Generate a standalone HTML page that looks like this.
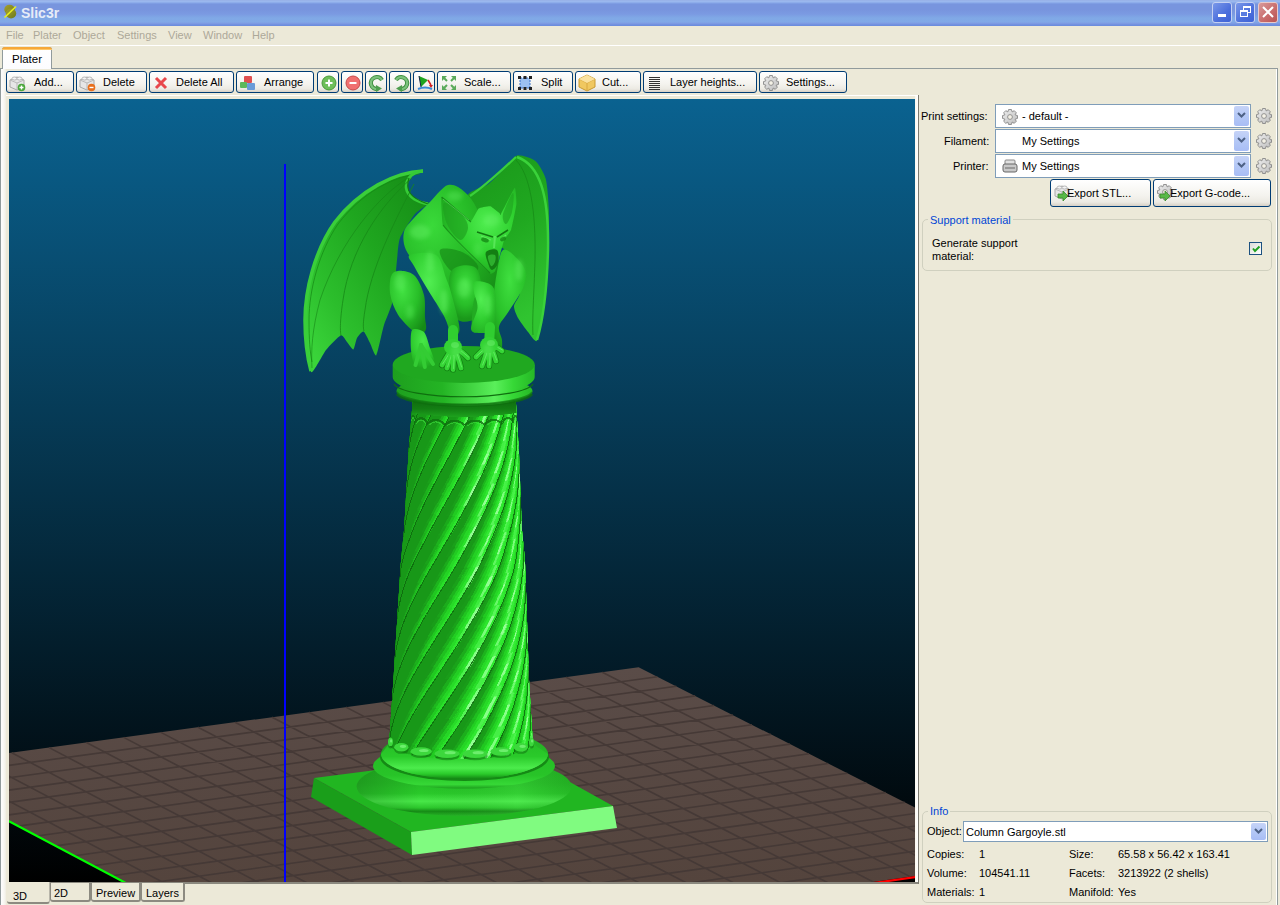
<!DOCTYPE html>
<html><head><meta charset="utf-8">
<style>
*{box-sizing:border-box;margin:0;padding:0}
html,body{width:1280px;height:905px;overflow:hidden;background:#ECE9D8;font-family:"Liberation Sans",sans-serif;font-size:11px;color:#000}
.a{position:absolute}
#title{left:0;top:0;width:1280px;height:26px;background:linear-gradient(#97AEE4 0px,#9AB8EE 1px,#9AB8EE 2px,#82A2E6 3px,#7895DE 4.5px,#7895DE 10px,#7B9AE2 14px,#80A9E6 18px,#81A8E7 22px,#7D9AE3 23.5px,#6E8EDE 25px,#6A8CDD 26px);}
#title .t{left:21px;top:5px;font-size:14px;font-weight:bold;color:#E6ECF8;letter-spacing:0px}
.wb{top:2px;width:20px;height:21px;border:1px solid #C5D1F2;border-radius:3px;background:linear-gradient(135deg,#7A98E9,#4C6FDC 60%,#3E62D6)}
#menu{left:0;top:26px;width:1280px;height:19px;}
#menu span{position:absolute;top:3px;color:#ACA899}
.btn{position:absolute;top:71px;height:22px;border:1px solid #003C74;border-radius:3px;background:linear-gradient(#FFFFFF,#F4F3EE 60%,#ECEAE3 85%,#D6D0C5);}
.btn .l{position:absolute;top:4px;white-space:nowrap}
.ico{position:absolute}
.combo{position:absolute;left:995px;width:256px;height:24px;border:1px solid #7F9DB9;background:#fff}
.combo .dd{position:absolute;right:1px;top:1px;width:15px;height:20px;border-radius:2px;background:linear-gradient(#C6D3F7,#B4C8F6 50%,#A8BDF5);}
.combo .tx{position:absolute;top:5px;white-space:nowrap}
.lbl{position:absolute;white-space:nowrap;text-align:right}
</style></head><body>
<!-- title bar -->
<div id="title" class="a">
  <svg class="a" style="left:3px;top:3px" width="14" height="17" viewBox="0 0 14 17"><defs><linearGradient id="lg1" x1="0" y1="0" x2="1" y2="1"><stop offset="0" stop-color="#A8A030"/><stop offset="1" stop-color="#6A7A18"/></linearGradient></defs><ellipse cx="6.5" cy="6.5" rx="5.2" ry="4.8" fill="url(#lg1)"/><ellipse cx="8" cy="10.5" rx="5.2" ry="5" fill="url(#lg1)"/><path d="M1.5 14.5L13 3.5" stroke="#E8F020" stroke-width="1.6"/></svg>
  <div class="a t">Slic3r</div>
  <div class="a wb" style="left:1212px"><div class="a" style="left:5px;top:11px;width:8px;height:3px;background:#fff"></div></div>
  <div class="a wb" style="left:1235px"><div class="a" style="left:7px;top:3px;width:8px;height:7px;border:1px solid #fff;border-top-width:2px"></div><div class="a" style="left:4px;top:7px;width:8px;height:7px;border:1px solid #fff;border-top-width:2px;background:#5A7DE0"></div></div>
  <div class="a wb" style="left:1258px;background:linear-gradient(135deg,#D89A9A,#C86A6A 60%,#B85555);border-color:#E8CACA"><svg class="a" style="left:3px;top:3px" width="12" height="12"><path d="M1 1L11 11M11 1L1 11" stroke="#fff" stroke-width="2"/></svg></div>
</div>
<!-- menu -->
<div id="menu" class="a">
  <span style="left:6px">File</span>
  <span style="left:33px">Plater</span>
  <span style="left:73px">Object</span>
  <span style="left:117px">Settings</span>
  <span style="left:168px">View</span>
  <span style="left:203px">Window</span>
  <span style="left:252px">Help</span>
</div>
<div class="a" style="left:0;top:45px;width:1280px;height:1px;background:#fff"></div>
<!-- notebook -->
<div class="a" style="left:0;top:68px;width:1278px;height:837px;border-left:1px solid #919B9C;border-top:1px solid #919B9C;border-right:1px solid #919B9C;background:#ECE9D8"></div>
<div class="a" style="left:1px;top:69px;width:5px;height:836px;background:linear-gradient(90deg,#FDFDFD,#F8F7F2 60%,#EFEDE2)"></div>
<div class="a" style="left:1276px;top:69px;width:1px;height:836px;background:#FFFFFF"></div>
<div class="a" style="left:2px;top:47px;width:50px;height:22px;background:linear-gradient(#FFFFFF,#FCFCFE);border:1px solid #919B9C;border-bottom:none;border-radius:3px 3px 0 0"></div>
<div class="a" style="left:2px;top:47px;width:50px;height:3px;background:#F6A839;border-radius:3px 3px 0 0;border-bottom:1px solid #FFC868"></div>
<div class="a" style="left:12px;top:53px;font-size:11.5px">Plater</div>

<div id="toolbar">
<div class="btn" style="left:6px;width:68px"><svg class="ico" style="left:1px;top:2px" width="18" height="18" viewBox="0 0 18 18">
<path d="M2 6 L9 3 L16 6 L16 13 L9 16 L2 13Z" fill="#E6E6E6" stroke="#A8A8A8" stroke-width="1"/>
<path d="M2 6 L9 9 L16 6 M9 9 L9 16" fill="none" stroke="#B8B8B8" stroke-width="1"/>
<ellipse cx="6.5" cy="4.5" rx="2.5" ry="1.5" fill="#F4F4F4" stroke="#AAA" stroke-width="0.8"/>
<ellipse cx="11.5" cy="4.5" rx="2.5" ry="1.5" fill="#F4F4F4" stroke="#AAA" stroke-width="0.8"/>
<circle cx="13.5" cy="13.5" r="3.8" fill="#4CA83C"/><path d="M11.5 13.5h4M13.5 11.5v4" stroke="#fff" stroke-width="1.4"/></svg><div class="l" style="left:27px">Add...</div></div>
<div class="btn" style="left:76px;width:71px"><svg class="ico" style="left:1px;top:2px" width="18" height="18" viewBox="0 0 18 18">
<path d="M2 6 L9 3 L16 6 L16 13 L9 16 L2 13Z" fill="#E6E6E6" stroke="#A8A8A8" stroke-width="1"/>
<path d="M2 6 L9 9 L16 6 M9 9 L9 16" fill="none" stroke="#B8B8B8" stroke-width="1"/>
<ellipse cx="6.5" cy="4.5" rx="2.5" ry="1.5" fill="#F4F4F4" stroke="#AAA" stroke-width="0.8"/>
<ellipse cx="11.5" cy="4.5" rx="2.5" ry="1.5" fill="#F4F4F4" stroke="#AAA" stroke-width="0.8"/>
<circle cx="13.5" cy="13.5" r="3.8" fill="#E8701E"/><path d="M11.5 13.5h4" stroke="#fff" stroke-width="1.4"/></svg><div class="l" style="left:26px">Delete</div></div>
<div class="btn" style="left:149px;width:85px"><svg class="ico" style="left:3px;top:3px" width="16" height="16"><path d="M3 3L13 13M13 3L3 13" stroke="#E8484C" stroke-width="3"/></svg><div class="l" style="left:26px">Delete All</div></div>
<div class="btn" style="left:236px;width:78px"><svg class="ico" style="left:2px;top:2px" width="18" height="18"><rect x="5" y="2" width="8" height="7" fill="#E05050" rx="1"/><rect x="1" y="8" width="7" height="6" fill="#5CB85C" rx="1"/><rect x="8" y="9" width="8" height="7" fill="#6A9BD8" rx="1"/></svg><div class="l" style="left:27px">Arrange</div></div>
<div class="btn" style="left:317px;width:22px"><svg class="ico" style="left:2px;top:2px" width="18" height="18"><circle cx="9" cy="9" r="7" fill="#6EBF5A" stroke="#4A9A3A"/><path d="M5.5 9h7M9 5.5v7" stroke="#fff" stroke-width="2"/></svg></div>
<div class="btn" style="left:341px;width:22px"><svg class="ico" style="left:2px;top:2px" width="18" height="18"><circle cx="9" cy="9" r="7" fill="#F07070" stroke="#C84A4A"/><path d="M5.5 9h7" stroke="#fff" stroke-width="2"/></svg></div>
<div class="btn" style="left:365px;width:22px"><svg class="ico" style="left:2px;top:2px" width="18" height="18"><path d="M14 6 A6 6 0 1 0 10 15" fill="none" stroke="#3E8E3E" stroke-width="4.2"/><path d="M14 6 A6 6 0 1 0 10 15" fill="none" stroke="#7CC27C" stroke-width="2.4"/><path d="M8 11 L14 14.5 L8 18Z" fill="#4E9E4E"/></svg></div>
<div class="btn" style="left:389px;width:22px"><svg class="ico" style="left:2px;top:2px" width="18" height="18"><path d="M4 6 A6 6 0 1 1 8 15" fill="none" stroke="#3E8E3E" stroke-width="4.2"/><path d="M4 6 A6 6 0 1 1 8 15" fill="none" stroke="#7CC27C" stroke-width="2.4"/><path d="M10 11 L4 14.5 L10 18Z" fill="#4E9E4E"/></svg></div>
<div class="btn" style="left:413px;width:22px"><svg class="ico" style="left:2px;top:2px" width="18" height="18"><path d="M3 2 L12 6 L5 13Z" fill="#1EA41E"/><path d="M3 2 L5 13" stroke="#124"/><path d="M12 6 L15 11" stroke="#D02020" stroke-width="1.5"/><path d="M13 11h4l-2 3z" fill="#D02020"/><path d="M2 15 Q9 12 16 15" stroke="#3A8AD8" stroke-width="2" fill="none"/></svg></div>
<div class="btn" style="left:437px;width:74px"><svg class="ico" style="left:3px;top:3px" width="16" height="16"><g stroke="#5AAA5A" stroke-width="2" fill="none"><path d="M2 2l4 4M14 2l-4 4M2 14l4-4M14 14l-4-4"/></g><g fill="#5AAA5A"><path d="M1 1h5l-5 5z"/><path d="M15 1h-5l5 5z"/><path d="M1 15h5l-5-5z"/><path d="M15 15h-5l5-5z"/></g></svg><div class="l" style="left:26px">Scale...</div></div>
<div class="btn" style="left:513px;width:60px"><svg class="ico" style="left:3px;top:3px" width="16" height="16"><rect x="3" y="3" width="10" height="10" fill="#9CC0F0" stroke="#3870C8" stroke-dasharray="2 1"/><g fill="#222"><rect x="1" y="1" width="3" height="3"/><rect x="12" y="1" width="3" height="3"/><rect x="1" y="12" width="3" height="3"/><rect x="12" y="12" width="3" height="3"/><rect x="6.5" y="1" width="3" height="3"/><rect x="6.5" y="12" width="3" height="3"/></g></svg><div class="l" style="left:27px">Split</div></div>
<div class="btn" style="left:575px;width:66px"><svg class="ico" style="left:2px;top:2px" width="18" height="18"><path d="M9 1L17 5L17 13L9 17L1 13L1 5Z" fill="#F0C860" stroke="#C89A30"/><path d="M1 5L9 9L17 5M9 9V17" fill="none" stroke="#D8A840"/><path d="M9 1L17 5L9 9L1 5Z" fill="#FAE2A0"/></svg><div class="l" style="left:26px">Cut...</div></div>
<div class="btn" style="left:643px;width:114px"><svg class="ico" style="left:3px;top:3px" width="16" height="16"><g stroke="#333" stroke-width="1"><path d="M2 2.5h11M2 4.5h11M2 6.5h11M2 8.5h11M2 10.5h11M2 12.5h11M2 14.5h11"/></g></svg><div class="l" style="left:26px">Layer heights...</div></div>
<div class="btn" style="left:759px;width:88px"><svg class="ico" style="left:3px;top:3px" width="16" height="16" viewBox="0 0 16 16"><defs><linearGradient id="gg1" x1="0" y1="0" x2="1" y2="1"><stop offset="0" stop-color="#EEEEEE"/><stop offset="1" stop-color="#BDBDBD"/></linearGradient></defs><path d="M13.19 5.90L15.46 6.55L15.46 9.45L13.19 10.10L13.15 10.19L14.30 12.25L12.25 14.30L10.19 13.15L10.10 13.19L9.45 15.46L6.55 15.46L5.90 13.19L5.81 13.15L3.75 14.30L1.70 12.25L2.85 10.19L2.81 10.10L0.54 9.45L0.54 6.55L2.81 5.90L2.85 5.81L1.70 3.75L3.75 1.70L5.81 2.85L5.90 2.81L6.55 0.54L9.45 0.54L10.10 2.81L10.19 2.85L12.25 1.70L14.30 3.75L13.15 5.81Z" fill="url(#gg1)" stroke="#858585" stroke-width="0.9"/><circle cx="8" cy="8" r="2.4" fill="#F4F1E6" stroke="#8A8A8A" stroke-width="0.9"/></svg><div class="l" style="left:26px">Settings...</div></div>
</div>

<!-- canvas -->
<div class="a" id="canvas" style="left:9px;top:99px;width:906px;height:783px;overflow:hidden;background:#000">
<svg class="a" style="left:0;top:0" width="906" height="783" viewBox="9 99 906 783">
<defs><linearGradient id="bedg" gradientUnits="userSpaceOnUse" x1="0" y1="667" x2="0" y2="882"><stop offset="0" stop-color="#5A4C48"/><stop offset="1" stop-color="#54443D"/></linearGradient><linearGradient id="bg" x1="0" y1="0" x2="0" y2="1"><stop offset="0" stop-color="#0A6290"/><stop offset="1" stop-color="#000000"/></linearGradient></defs>
<rect x="9" y="99" width="906" height="783" fill="url(#bg)"/>
<path d="M282.6 965.9L1020.2 861.0L638.6 667.2L-93.5 767.0Z" fill="url(#bedg)"/>
<path d="M313.1 961.5L-63.3 762.9M264.0 956.1L1001.4 851.4M350.9 956.1L-25.7 757.8M244.9 946.0L982.0 841.6M388.6 950.8L11.7 752.7M225.9 935.9L962.7 831.8M426.3 945.4L49.1 747.6M206.8 925.8L943.4 822.0M463.9 940.1L86.4 742.5M187.8 915.8L924.1 812.2M501.5 934.7L123.7 737.4M168.9 905.7L904.8 802.4M538.9 929.4L160.9 732.4M149.9 895.7L885.6 792.6M576.3 924.1L198.0 727.3M131.0 885.7L866.4 782.9M613.7 918.8L235.1 722.2M112.1 875.7L847.3 773.2M651.0 913.5L272.1 717.2M93.3 865.8L828.2 763.5M688.2 908.2L309.0 712.2M74.5 855.8L809.1 753.8M725.3 902.9L345.9 707.1M55.7 845.9L790.0 744.1M762.4 897.6L382.7 702.1M36.9 836.0L771.0 734.4M799.4 892.4L419.5 697.1M18.2 826.1L752.0 724.8M836.4 887.1L456.1 692.1M-0.5 816.2L733.0 715.1M873.3 881.9L492.8 687.1M-19.2 806.3L714.1 705.5M910.1 876.6L529.3 682.1M-37.8 796.5L695.2 695.9M946.9 871.4L565.8 677.1M-56.4 786.7L676.3 686.3M983.6 866.2L602.3 672.2M-75.0 776.8L657.4 676.8" stroke="#453936" stroke-width="1.6" fill="none"/>
<path d="M282.6 965.9L1020.2 861.0" stroke="#FF0000" stroke-width="2.2" transform="translate(0,1.2)"/>
<path d="M282.6 965.9L-93.5 767.0" stroke="#00FF00" stroke-width="2.2"/>
<rect x="284" y="164" width="2" height="720" fill="#0000FF"/>
<path d="M314.0 778.0L411.0 832.0L613.0 806.0L516.0 752.0Z" fill="#21B621"/>
<path d="M314.0 778.0L411.0 832.0L412.0 855.0L311.0 797.0Z" fill="#1A9E1A"/>
<path d="M411.0 832.0L613.0 806.0L617.0 828.0L412.0 855.0Z" fill="#80FB80"/>
<defs><linearGradient id="t2" gradientUnits="userSpaceOnUse" x1="0" y1="757" x2="0" y2="816"><stop offset="0" stop-color="#20B020"/><stop offset="0.45" stop-color="#26BE26"/><stop offset="0.62" stop-color="#2ACA2A"/><stop offset="0.75" stop-color="#48E848"/><stop offset="0.86" stop-color="#2CC82C"/><stop offset="0.92" stop-color="#168C16"/><stop offset="1" stop-color="#26B626"/></linearGradient><linearGradient id="th" x1="0" y1="0" x2="1" y2="0"><stop offset="0" stop-color="#000" stop-opacity="0.18"/><stop offset="0.3" stop-color="#000" stop-opacity="0"/><stop offset="0.75" stop-color="#8f8" stop-opacity="0.1"/><stop offset="1" stop-color="#000" stop-opacity="0.08"/></linearGradient><linearGradient id="t1" gradientUnits="userSpaceOnUse" x1="0" y1="729" x2="0" y2="779"><stop offset="0" stop-color="#22B422"/><stop offset="0.55" stop-color="#2ACA2A"/><stop offset="0.78" stop-color="#4CEC4C"/><stop offset="0.9" stop-color="#2ACA2A"/><stop offset="1" stop-color="#138413"/></linearGradient><linearGradient id="step" gradientUnits="userSpaceOnUse" x1="0" y1="743" x2="0" y2="789"><stop offset="0" stop-color="#22B822"/><stop offset="0.7" stop-color="#28C428"/><stop offset="0.9" stop-color="#36D836"/><stop offset="1" stop-color="#1A961A"/></linearGradient></defs>
<ellipse cx="464" cy="786.6" rx="107.4" ry="29.4" fill="url(#t2)"/>
<ellipse cx="464" cy="786.6" rx="107.4" ry="29.4" fill="url(#th)"/>
<ellipse cx="464" cy="766" rx="91" ry="22.6" fill="url(#step)"/>
<ellipse cx="464.5" cy="757" rx="84.5" ry="24" fill="#158A15"/>
<ellipse cx="464.5" cy="754" rx="83.5" ry="25" fill="url(#t1)"/>
<ellipse cx="464.5" cy="754" rx="83.5" ry="25" fill="url(#th)"/>
<defs><clipPath id="shaftclip"><path d="M413.0 396.0L412.4 405.0L411.7 413.9L410.9 422.9L410.2 431.9L409.5 440.9L408.7 449.8L408.2 458.8L407.7 467.8L407.2 476.8L406.6 485.7L406.1 494.7L405.6 503.7L405.1 512.7L404.6 521.6L404.0 530.6L403.1 539.6L402.2 548.6L401.3 557.5L400.6 566.5L400.0 575.5L399.5 584.5L398.9 593.4L398.3 602.4L397.7 611.4L397.2 620.4L396.6 629.3L396.0 638.3L395.5 647.3L394.9 656.3L394.3 665.2L393.8 674.2L393.2 683.2L392.6 692.2L392.0 701.1L391.4 710.1L390.8 719.1L390.2 728.1L389.6 737.0L389.0 746.0L389.0 746.0L389.4 747.9L390.7 749.9L392.8 751.7L395.7 753.6L399.3 755.3L403.7 756.9L408.7 758.4L414.4 759.7L420.6 760.9L427.3 761.9L434.4 762.7L441.7 763.3L449.4 763.8L457.1 764.0L464.9 764.0L472.6 763.8L480.3 763.3L487.6 762.7L494.7 761.9L501.4 760.9L507.6 759.7L513.3 758.4L518.3 756.9L522.7 755.3L526.3 753.6L529.2 751.7L531.3 749.9L532.6 747.9L533.0 746.0L533.0 746.0L532.5 737.0L531.9 728.1L531.4 719.1L530.8 710.1L530.3 701.1L529.7 692.2L529.2 683.2L528.8 674.2L528.5 665.2L528.2 656.3L527.9 647.3L527.6 638.3L527.3 629.3L527.0 620.4L526.7 611.4L526.4 602.4L526.1 593.4L525.8 584.5L525.5 575.5L525.2 566.5L524.7 557.5L523.8 548.6L522.9 539.6L522.0 530.6L521.6 521.6L521.2 512.7L520.9 503.7L520.6 494.7L520.2 485.7L519.9 476.8L519.6 467.8L519.2 458.8L518.9 449.8L518.3 440.9L517.8 431.9L517.2 422.9L516.6 413.9L516.1 405.0L515.5 396.0Z"/></clipPath></defs>
<path d="M413.0 396.0L412.4 405.0L411.7 413.9L410.9 422.9L410.2 431.9L409.5 440.9L408.7 449.8L408.2 458.8L407.7 467.8L407.2 476.8L406.6 485.7L406.1 494.7L405.6 503.7L405.1 512.7L404.6 521.6L404.0 530.6L403.1 539.6L402.2 548.6L401.3 557.5L400.6 566.5L400.0 575.5L399.5 584.5L398.9 593.4L398.3 602.4L397.7 611.4L397.2 620.4L396.6 629.3L396.0 638.3L395.5 647.3L394.9 656.3L394.3 665.2L393.8 674.2L393.2 683.2L392.6 692.2L392.0 701.1L391.4 710.1L390.8 719.1L390.2 728.1L389.6 737.0L389.0 746.0L389.0 746.0L389.4 747.9L390.7 749.9L392.8 751.7L395.7 753.6L399.3 755.3L403.7 756.9L408.7 758.4L414.4 759.7L420.6 760.9L427.3 761.9L434.4 762.7L441.7 763.3L449.4 763.8L457.1 764.0L464.9 764.0L472.6 763.8L480.3 763.3L487.6 762.7L494.7 761.9L501.4 760.9L507.6 759.7L513.3 758.4L518.3 756.9L522.7 755.3L526.3 753.6L529.2 751.7L531.3 749.9L532.6 747.9L533.0 746.0L533.0 746.0L532.5 737.0L531.9 728.1L531.4 719.1L530.8 710.1L530.3 701.1L529.7 692.2L529.2 683.2L528.8 674.2L528.5 665.2L528.2 656.3L527.9 647.3L527.6 638.3L527.3 629.3L527.0 620.4L526.7 611.4L526.4 602.4L526.1 593.4L525.8 584.5L525.5 575.5L525.2 566.5L524.7 557.5L523.8 548.6L522.9 539.6L522.0 530.6L521.6 521.6L521.2 512.7L520.9 503.7L520.6 494.7L520.2 485.7L519.9 476.8L519.6 467.8L519.2 458.8L518.9 449.8L518.3 440.9L517.8 431.9L517.2 422.9L516.6 413.9L516.1 405.0L515.5 396.0Z" fill="#22AE22"/>
<g clip-path="url(#shaftclip)" shape-rendering="crispEdges">
<path d="M520.1 481.0L520.1 481.0L520.4 491.0L520.4 491.0ZM502.5 624.6L504.9 624.0L500.3 635.2L497.7 635.7ZM521.6 521.0L521.6 521.0L522.0 531.0L522.0 531.0ZM452.7 770.3L456.3 770.4L449.5 780.2L446.0 780.0ZM515.4 671.7L517.2 671.0L513.7 682.4L511.6 683.1ZM526.1 717.9L527.2 717.0L525.4 728.7L523.9 729.6ZM532.6 763.2L532.9 762.2L532.1 774.1L531.5 775.0ZM457.7 435.2L460.2 435.3L455.0 445.3L452.4 445.2ZM457.6 475.9L460.4 476.0L454.9 486.0L452.2 485.8ZM471.4 486.0L474.1 485.9L468.8 496.2L466.0 496.3ZM511.8 386.1L512.7 385.5L510.9 396.7L509.8 397.3ZM472.0 526.5L474.8 526.3L469.3 536.7L466.4 536.8ZM517.3 432.7L517.6 432.0L517.6 443.4L517.1 444.1ZM487.9 576.3L490.7 576.0L485.3 586.8L482.4 587.0Z" fill="#2ce52c" stroke="#2ce52c" stroke-width="0.5"/>
<path d="M520.4 491.0L520.4 491.0L520.8 501.0L520.7 501.7ZM508.8 602.7L510.9 602.1L506.9 613.4L504.6 614.0ZM509.5 622.8L511.6 622.2L507.6 633.5L505.3 634.1ZM445.5 739.5L448.9 739.7L442.2 749.5L438.9 749.2ZM510.2 642.9L512.3 642.3L508.3 653.6L505.9 654.2ZM519.1 629.4L520.5 628.6L517.9 640.2L516.1 640.9ZM462.9 750.2L466.4 750.1L459.6 760.4L456.1 760.3ZM519.8 649.4L521.3 648.7L518.6 660.2L516.9 661.0ZM520.6 669.5L522.1 668.7L519.4 680.2L517.6 681.0ZM521.4 689.5L522.8 688.7L520.4 700.3L518.6 701.1ZM526.8 675.3L527.5 674.4L526.3 686.1L525.3 687.0ZM527.8 695.3L528.5 694.4L527.6 706.1L526.6 707.0ZM529.1 715.2L529.8 714.3L528.9 726.1L527.9 727.0ZM530.4 735.2L531.1 734.3L530.2 746.1L529.2 747.0ZM531.5 721.0L531.5 721.0L532.1 731.4L531.9 732.4ZM532.7 741.0L532.7 741.0L533.0 751.3L532.8 752.3ZM533.0 761.0L533.0 761.0L533.0 771.2L532.9 772.2ZM452.6 404.5L455.1 404.6L450.2 414.4L447.8 414.2ZM452.4 445.2L455.0 445.3L449.8 455.2L447.2 455.0ZM465.6 455.7L468.3 455.7L463.0 465.9L460.3 465.9ZM466.0 496.3L468.8 496.2L463.3 506.4L460.5 506.4ZM509.8 397.3L510.9 396.7L509.0 407.9L507.7 408.5ZM514.1 384.2L514.6 383.5L513.5 394.8L512.8 395.5ZM479.9 505.7L482.5 505.5L477.4 516.1L474.6 516.2ZM514.5 404.1L515.0 403.5L514.5 414.8L513.8 415.5ZM515.5 391.0L515.5 391.0L515.8 401.4L515.7 402.1ZM480.8 546.2L483.5 545.9L478.4 556.7L475.6 556.9ZM517.1 444.1L517.6 443.4L517.1 454.8L516.3 455.5ZM517.7 431.0L517.7 431.0L518.3 441.3L518.2 442.0ZM494.6 554.8L497.1 554.3L492.7 565.4L490.1 565.8ZM518.9 451.0L518.9 451.0L519.3 461.2L519.2 461.9ZM496.5 595.3L499.1 594.9L494.2 605.9L491.4 606.3ZM508.1 582.6L510.2 582.0L506.3 593.3L504.0 593.9ZM445.4 698.8L448.6 699.0L442.1 708.8L438.9 708.5Z" fill="#2ae12a" stroke="#2ae12a" stroke-width="0.5"/>
<path d="M520.7 501.7L520.8 501.0L520.9 512.5L520.6 513.2ZM520.0 577.8L521.2 577.1L519.1 588.6L517.6 589.3ZM438.9 749.2L442.2 749.5L435.5 759.1L432.3 758.7ZM505.9 654.2L508.3 653.6L503.8 664.9L501.2 665.4ZM521.5 617.9L522.7 617.1L520.5 628.6L519.1 629.4ZM526.2 623.7L526.7 622.9L526.0 634.5L525.3 635.4ZM518.6 701.1L520.4 700.3L517.3 711.9L515.3 712.6ZM527.7 663.6L528.1 662.7L527.5 674.4L526.8 675.3ZM528.7 671.0L528.7 671.0L529.1 681.0L529.1 681.0ZM529.2 747.0L530.2 746.1L528.4 757.9L527.0 758.7ZM530.9 711.0L530.9 711.0L531.5 721.0L531.5 721.0ZM447.2 455.0L449.8 455.2L444.5 464.9L442.0 464.7ZM460.5 506.4L463.3 506.4L457.8 516.5L455.0 516.4ZM507.7 408.5L509.0 407.9L506.8 419.1L505.3 419.7ZM515.0 372.9L515.3 372.2L514.6 383.5L514.1 384.2ZM513.8 415.5L514.5 414.8L513.5 426.1L512.5 426.8ZM515.5 381.0L515.5 381.0L515.5 391.0L515.5 391.0ZM475.6 556.9L478.4 556.7L473.0 567.3L470.1 567.4ZM516.3 455.5L517.1 454.8L515.9 466.2L514.8 466.9ZM517.1 421.0L517.1 421.0L517.7 431.0L517.7 431.0ZM508.6 530.9L510.3 530.3L507.2 541.6L505.2 542.1ZM519.2 461.9L519.3 461.2L519.4 472.6L519.0 473.3ZM491.4 606.3L494.2 605.9L488.8 616.7L486.0 617.1ZM511.8 571.4L513.6 570.7L510.2 582.0L508.1 582.6Z" fill="#28dd28" stroke="#28dd28" stroke-width="0.5"/>
<path d="M520.6 513.2L520.9 512.5L520.5 524.0L519.9 524.7ZM432.3 758.7L435.5 759.1L429.1 768.4L426.0 768.0ZM501.2 665.4L503.8 664.9L498.8 676.0L496.1 676.5ZM523.3 606.3L524.2 605.5L522.7 617.1L521.5 617.9ZM515.3 712.6L517.3 711.9L513.7 723.4L511.4 724.1ZM528.0 651.9L528.0 651.0L528.1 662.7L527.7 663.6ZM527.0 758.7L528.4 757.9L525.7 769.6L524.0 770.4ZM530.3 701.0L530.3 701.0L530.9 711.0L530.9 711.0ZM442.9 423.9L445.3 424.2L440.3 433.8L438.0 433.5ZM442.0 464.7L444.5 464.9L439.4 474.5L436.9 474.2ZM454.9 475.8L457.6 475.9L452.2 485.8L449.5 485.7ZM504.2 379.7L505.7 379.1L502.7 390.2L501.0 390.7ZM455.0 516.4L457.8 516.5L452.2 526.4L449.4 526.2ZM505.3 419.7L506.8 419.1L504.2 430.3L502.5 430.9ZM512.5 426.8L513.5 426.1L512.1 437.5L510.8 438.1ZM515.5 371.0L515.5 371.0L515.5 381.0L515.5 381.0ZM470.1 567.4L473.0 567.3L467.3 577.7L464.3 577.7ZM514.8 466.9L515.9 466.2L514.1 477.6L512.9 478.2ZM516.4 411.0L516.4 411.0L517.1 421.0L517.1 421.0ZM519.0 473.3L519.4 472.6L518.9 484.0L518.3 484.8ZM486.0 617.1L488.8 616.7L483.2 627.5L480.2 627.7ZM514.4 559.9L515.9 559.2L513.6 570.7L511.8 571.4Z" fill="#26d826" stroke="#26d826" stroke-width="0.5"/>
<path d="M519.9 524.7L520.5 524.0L519.7 535.4L518.8 536.2ZM480.9 668.2L484.0 667.9L478.0 678.5L474.8 678.7ZM522.5 554.7L523.1 553.9L522.7 565.5L521.8 566.3ZM496.1 676.5L498.8 676.0L493.5 687.0L490.6 687.4ZM497.6 716.9L500.5 716.3L495.2 727.4L492.2 727.9ZM526.4 601.0L526.4 601.0L526.7 611.2L526.6 612.1ZM511.4 724.1L513.7 723.4L509.5 734.8L507.0 735.4ZM527.7 641.0L527.7 641.0L528.0 651.0L528.0 651.9ZM513.5 764.3L515.9 763.6L511.2 774.9L508.6 775.6ZM524.0 770.4L525.7 769.6L522.4 781.2L520.4 782.0ZM436.9 474.2L439.4 474.5L434.4 483.9L432.1 483.5ZM491.0 382.8L493.1 382.4L489.0 393.1L486.8 393.4ZM449.4 526.2L452.2 526.4L446.6 536.1L443.9 535.9ZM502.5 430.9L504.2 430.3L501.2 441.5L499.2 441.9ZM464.3 577.7L467.3 577.7L461.3 587.9L458.2 587.8ZM512.9 478.2L514.1 477.6L511.9 488.9L510.4 489.5ZM514.1 508.3L515.3 507.6L513.1 519.0L511.6 519.6ZM480.2 627.7L483.2 627.5L477.3 638.0L474.2 638.2Z" fill="#24d324" stroke="#24d324" stroke-width="0.5"/>
<path d="M518.8 536.2L519.7 535.4L518.8 547.0L517.6 547.7ZM522.5 543.1L522.8 542.4L523.1 553.9L522.5 554.7ZM490.6 687.4L493.5 687.0L487.8 697.9L484.7 698.2ZM525.2 583.0L525.5 582.2L525.2 593.8L524.6 594.7ZM526.0 591.0L526.0 591.0L526.4 601.0L526.4 601.0ZM507.0 735.4L509.5 734.8L504.8 746.1L502.0 746.7ZM527.4 631.0L527.4 631.0L527.7 641.0L527.7 641.0ZM432.1 483.5L434.4 483.9L429.6 493.2L427.4 492.8ZM486.8 393.4L489.0 393.1L484.6 403.7L482.3 404.0ZM443.9 535.9L446.6 536.1L441.0 545.8L438.4 545.5ZM499.2 441.9L501.2 441.5L497.7 452.5L495.6 453.0ZM458.2 587.8L461.3 587.9L455.1 597.9L452.1 597.8ZM510.4 489.5L511.9 488.9L509.2 500.2L507.4 500.8ZM516.1 496.9L517.1 496.2L515.3 507.6L514.1 508.3ZM474.2 638.2L477.3 638.0L471.2 648.5L468.0 648.6Z" fill="#22cd22" stroke="#22cd22" stroke-width="0.5"/>
<path d="M517.6 547.7L518.8 547.0L517.4 558.5L515.9 559.2ZM484.7 698.2L487.8 697.9L481.9 708.6L478.7 708.9ZM525.3 571.4L525.4 571.0L525.5 582.2L525.2 583.0ZM502.0 746.7L504.8 746.1L499.6 757.3L496.6 757.8ZM427.4 492.8L429.6 493.2L425.0 502.4L423.0 501.9ZM493.7 412.4L495.8 412.0L492.0 422.9L489.8 423.3ZM438.4 545.5L441.0 545.8L435.5 555.4L432.9 555.0ZM505.9 460.6L507.6 460.0L504.5 471.2L502.6 471.7ZM452.1 597.8L455.1 597.9L449.0 607.8L446.0 607.6ZM468.0 648.6L471.2 648.5L464.8 658.8L461.6 658.8ZM519.2 525.5L519.9 524.7L518.8 536.2L517.8 536.9Z" fill="#20c620" stroke="#20c620" stroke-width="0.5"/>
<path d="M515.9 559.2L517.4 558.5L515.3 570.0L513.6 570.7ZM521.6 521.0L521.6 521.0L522.0 531.0L522.0 531.6ZM423.0 501.9L425.0 502.4L420.7 511.5L418.9 510.9ZM477.7 414.4L480.2 414.2L475.5 424.8L473.0 424.9ZM432.9 555.0L435.5 555.4L430.0 564.9L427.5 564.4ZM491.5 463.9L493.8 463.5L489.4 474.3L486.9 474.6ZM446.0 607.6L449.0 607.8L442.9 617.5L439.9 617.2ZM504.0 512.0L506.0 511.4L502.4 522.5L500.2 523.1ZM518.5 474.1L519.0 473.3L518.3 484.8L517.6 485.5ZM461.6 658.8L464.8 658.8L458.4 668.9L455.2 668.8Z" fill="#1fbf1f" stroke="#1fbf1f" stroke-width="0.5"/>
<path d="M513.6 570.7L515.3 570.0L512.1 581.4L510.2 582.0ZM521.2 511.0L521.2 511.0L521.6 521.0L521.6 521.0ZM418.9 510.9L420.7 511.5L416.8 520.4L415.1 519.8ZM473.0 424.9L475.5 424.8L470.6 435.2L468.0 435.3ZM427.5 564.4L430.0 564.9L424.6 574.2L422.3 573.6ZM486.9 474.6L489.4 474.3L484.7 485.0L482.1 485.3ZM439.9 617.2L442.9 617.5L436.8 627.0L434.0 626.6ZM500.2 523.1L502.4 522.5L498.3 533.6L496.0 534.1ZM519.0 462.6L519.2 461.9L519.0 473.3L518.5 474.1ZM455.2 668.8L458.4 668.9L451.9 678.9L448.7 678.7Z" fill="#1db71d" stroke="#1db71d" stroke-width="0.5"/>
<path d="M510.2 582.0L512.1 581.4L508.4 592.7L506.3 593.3ZM448.8 719.4L452.1 719.5L445.5 729.4L442.2 729.1ZM466.9 770.4L470.4 770.3L463.6 780.4L460.0 780.4ZM532.7 741.4L532.7 741.0L532.8 752.3L532.5 753.2ZM454.7 384.6L457.2 384.7L452.4 394.5L450.0 394.3ZM468.0 435.3L470.6 435.2L465.5 445.5L462.9 445.5ZM412.8 560.4L414.6 561.1L410.4 569.9L408.9 569.2ZM482.1 485.3L484.7 485.0L479.7 495.6L477.0 495.8ZM421.0 614.2L423.5 614.7L418.4 623.8L416.1 623.2ZM496.0 534.1L498.3 533.6L493.9 544.6L491.4 545.0ZM433.3 667.2L436.3 667.6L430.2 677.0L427.3 676.5ZM518.9 451.2L518.9 451.0L519.2 461.9L519.0 462.6Z" fill="#1caf1c" stroke="#1caf1c" stroke-width="0.5"/>
<path d="M506.3 593.3L508.4 592.7L504.3 603.9L501.9 604.5ZM459.2 740.0L462.7 740.0L455.9 750.1L452.4 750.0ZM450.0 394.3L452.4 394.5L447.8 404.1L445.4 403.9ZM411.8 528.6L413.2 529.2L410.0 538.0L408.8 537.3ZM462.9 445.5L465.5 445.5L460.3 455.7L457.6 455.6ZM417.5 582.6L419.7 583.2L415.1 592.1L413.1 591.5ZM477.0 495.8L479.7 495.6L474.5 506.1L471.7 506.2ZM428.2 636.0L431.0 636.4L425.3 645.6L422.7 645.1ZM491.4 545.0L493.9 544.6L489.5 555.6L486.8 555.9ZM518.3 441.0L518.3 441.0L518.9 451.0L518.9 451.2ZM442.2 688.4L445.4 688.7L439.0 698.3L435.9 698.0Z" fill="#1ba61b" stroke="#1ba61b" stroke-width="0.5"/>
<path d="M501.9 604.5L504.3 603.9L499.7 615.0L497.1 615.5ZM452.4 750.0L455.9 750.1L449.1 760.1L445.6 759.9ZM533.0 761.0L533.0 761.0L533.0 771.0L533.0 771.0ZM445.4 403.9L447.8 404.1L443.1 413.7L440.8 413.4ZM457.7 414.8L460.2 414.9L455.1 424.9L452.6 424.8ZM408.8 537.3L410.0 538.0L406.8 546.7L405.8 545.9ZM457.6 455.6L460.3 455.7L454.9 465.7L452.3 465.6ZM471.1 465.8L473.8 465.6L468.5 476.0L465.8 476.0ZM413.1 591.5L415.1 592.1L410.8 601.0L409.1 600.3ZM471.7 506.2L474.5 506.1L469.0 516.5L466.2 516.5ZM485.4 515.3L488.0 515.0L483.0 525.7L480.3 526.0ZM422.7 645.1L425.3 645.6L419.8 654.7L417.4 654.2ZM486.8 555.9L489.5 555.6L484.6 566.4L481.8 566.7ZM500.2 564.1L502.6 563.6L498.5 574.7L496.0 575.2ZM435.9 698.0L439.0 698.3L432.7 707.8L429.7 707.4ZM519.7 471.0L519.7 471.0L520.1 481.0L520.1 481.0Z" fill="#1a9e1a" stroke="#1a9e1a" stroke-width="0.5"/>
<path d="M497.1 615.5L499.7 615.0L494.7 626.0L491.9 626.4ZM445.6 759.9L449.1 760.1L442.3 769.8L438.9 769.5ZM440.8 413.4L443.1 413.7L438.3 423.3L436.1 422.9ZM405.8 545.9L406.8 546.7L404.0 555.3L403.3 554.5ZM452.3 465.6L454.9 465.7L449.6 475.5L447.0 475.3ZM409.1 600.3L410.8 601.0L407.0 609.7L405.5 608.9ZM466.2 516.5L469.0 516.5L463.5 526.7L460.6 526.6ZM417.4 654.2L419.8 654.7L414.7 663.7L412.5 663.0ZM481.8 566.7L484.6 566.4L479.3 577.2L476.4 577.4ZM429.7 707.4L432.7 707.8L426.6 717.2L423.7 716.7Z" fill="#199919" stroke="#199919" stroke-width="0.5"/>
<path d="M491.9 626.4L494.7 626.0L489.3 636.9L486.4 637.3ZM486.4 637.3L489.3 636.9L483.6 647.7L480.6 647.9ZM480.6 647.9L483.6 647.7L477.6 658.3L474.5 658.5ZM474.5 658.5L477.6 658.3L471.4 668.7L468.2 668.8ZM468.2 668.8L471.4 668.7L465.0 679.0L461.7 679.1ZM461.7 679.1L465.0 679.0L458.5 689.2L455.2 689.1ZM455.2 689.1L458.5 689.2L451.9 699.2L448.6 699.0ZM448.6 699.0L451.9 699.2L445.4 709.0L442.1 708.8ZM442.1 708.8L445.4 709.0L438.9 718.7L435.7 718.4ZM435.7 718.4L438.9 718.7L432.5 728.2L429.4 727.8ZM429.4 727.8L432.5 728.2L426.3 737.5L423.3 737.0ZM423.3 737.0L426.3 737.5L420.2 746.7L417.4 746.1ZM417.4 746.1L420.2 746.7L414.4 755.7L411.8 755.1ZM411.8 755.1L414.4 755.7L409.2 764.5L406.8 763.8ZM406.8 763.8L409.2 764.5L404.7 773.1L402.6 772.4ZM402.6 772.4L404.7 773.1L400.7 781.6L398.9 780.8ZM477.6 658.3L480.8 658.0L474.6 668.6L471.4 668.7ZM471.4 668.7L474.6 668.6L468.3 679.0L465.0 679.0ZM465.0 679.0L468.3 679.0L461.8 689.2L458.5 689.2ZM458.5 689.2L461.8 689.2L455.2 699.3L451.9 699.2ZM451.9 699.2L455.2 699.3L448.7 709.2L445.4 709.0ZM445.4 709.0L448.7 709.2L442.2 718.9L438.9 718.7ZM438.9 718.7L442.2 718.9L435.7 728.5L432.5 728.2ZM432.5 728.2L435.7 728.5L429.3 738.0L426.3 737.5ZM426.3 737.5L429.3 738.0L423.1 747.2L420.2 746.7ZM420.2 746.7L423.1 747.2L417.2 756.3L414.4 755.7ZM414.4 755.7L417.2 756.3L411.8 765.2L409.2 764.5ZM409.2 764.5L411.8 765.2L407.0 773.9L404.7 773.1ZM404.7 773.1L407.0 773.9L402.7 782.4L400.7 781.6ZM461.8 689.2L465.1 689.2L458.5 699.3L455.2 699.3ZM455.2 699.3L458.5 699.3L452.0 709.3L448.7 709.2ZM448.7 709.2L452.0 709.3L445.4 719.2L442.2 718.9ZM442.2 718.9L445.4 719.2L438.9 728.9L435.7 728.5ZM435.7 728.5L438.9 728.9L432.4 738.4L429.3 738.0ZM429.3 738.0L432.4 738.4L426.1 747.7L423.1 747.2ZM423.1 747.2L426.1 747.7L420.0 756.9L417.2 756.3ZM417.2 756.3L420.0 756.9L414.4 765.8L411.8 765.2ZM411.8 765.2L414.4 765.8L409.4 774.6L407.0 773.9ZM407.0 773.9L409.4 774.6L404.9 783.2L402.7 782.4ZM438.9 728.9L442.2 729.1L435.6 738.7L432.4 738.4ZM432.4 738.4L435.6 738.7L429.2 748.1L426.1 747.7ZM426.1 747.7L429.2 748.1L422.9 757.4L420.0 756.9ZM420.0 756.9L422.9 757.4L417.1 766.4L414.4 765.8ZM414.4 765.8L417.1 766.4L411.9 775.2L409.4 774.6ZM409.4 774.6L411.9 775.2L407.1 783.9L404.9 783.2ZM422.9 757.4L426.0 757.9L420.0 767.0L417.1 766.4ZM417.1 766.4L420.0 767.0L414.6 775.9L411.9 775.2ZM411.9 775.2L414.6 775.9L409.6 784.6L407.1 783.9ZM493.0 666.8L495.8 666.4L490.3 677.3L487.3 677.7ZM487.3 677.7L490.3 677.3L484.5 688.1L481.3 688.4ZM481.3 688.4L484.5 688.1L478.3 698.7L475.1 698.9ZM475.1 698.9L478.3 698.7L472.1 709.3L468.8 709.4ZM468.8 709.4L472.1 709.3L465.7 719.6L462.3 719.7ZM462.3 719.7L465.7 719.6L459.0 729.8L455.6 729.8ZM455.6 729.8L459.0 729.8L452.3 739.9L448.9 739.7ZM448.9 739.7L452.3 739.9L445.6 749.7L442.2 749.5ZM442.2 749.5L445.6 749.7L438.8 759.4L435.5 759.1ZM435.5 759.1L438.8 759.4L432.3 768.8L429.1 768.4ZM429.1 768.4L432.3 768.8L426.2 778.0L423.1 777.5ZM423.1 777.5L426.2 778.0L420.4 787.0L417.5 786.5ZM478.3 698.7L481.5 698.5L475.4 709.1L472.1 709.3ZM472.1 709.3L475.4 709.1L469.0 719.5L465.7 719.6ZM465.7 719.6L469.0 719.5L462.5 729.8L459.0 729.8ZM459.0 729.8L462.5 729.8L455.8 740.0L452.3 739.9ZM452.3 739.9L455.8 740.0L449.0 749.9L445.6 749.7ZM445.6 749.7L449.0 749.9L442.2 759.7L438.8 759.4ZM438.8 759.4L442.2 759.7L435.6 769.2L432.3 768.8ZM432.3 768.8L435.6 769.2L429.3 778.5L426.2 778.0ZM426.2 778.0L429.3 778.5L423.3 787.6L420.4 787.0ZM462.5 729.8L465.9 729.8L459.2 740.0L455.8 740.0ZM455.8 740.0L459.2 740.0L452.4 750.0L449.0 749.9ZM449.0 749.9L452.4 750.0L445.6 759.9L442.2 759.7ZM442.2 759.7L445.6 759.9L438.9 769.5L435.6 769.2ZM435.6 769.2L438.9 769.5L432.5 778.9L429.3 778.5ZM429.3 778.5L432.5 778.9L426.4 788.0L423.3 787.6ZM438.9 769.5L442.3 769.8L435.8 779.2L432.5 778.9ZM432.5 778.9L435.8 779.2L429.5 788.5L426.4 788.0ZM494.3 707.2L497.2 706.7L491.7 717.7L488.6 718.1ZM488.6 718.1L491.7 717.7L485.9 728.6L482.7 728.9ZM482.7 728.9L485.9 728.6L479.7 739.3L476.4 739.6ZM476.4 739.6L479.7 739.3L473.3 749.9L469.8 750.0ZM469.8 750.0L473.3 749.9L466.6 760.3L463.1 760.3ZM463.1 760.3L466.6 760.3L459.8 770.4L456.3 770.4ZM456.3 770.4L459.8 770.4L453.0 780.3L449.5 780.2ZM449.5 780.2L453.0 780.3L446.2 790.0L442.8 789.8ZM479.7 739.3L483.0 739.1L476.7 749.7L473.3 749.9ZM473.3 749.9L476.7 749.7L470.1 760.2L466.6 760.3ZM466.6 760.3L470.1 760.2L463.3 770.4L459.8 770.4ZM459.8 770.4L463.3 770.4L456.5 780.4L453.0 780.3ZM453.0 780.3L456.5 780.4L449.7 790.2L446.2 790.0ZM456.5 780.4L460.0 780.4L453.2 790.3L449.7 790.2ZM496.1 747.7L499.1 747.2L493.5 758.2L490.4 758.7ZM490.4 758.7L493.5 758.2L487.4 769.1L484.1 769.4ZM484.1 769.4L487.4 769.1L481.0 779.7L477.5 779.9ZM477.5 779.9L481.0 779.7L474.3 790.1L470.8 790.3ZM481.0 779.7L484.3 779.4L477.8 789.9L474.3 790.1ZM413.0 371.0L413.0 371.0L413.0 381.0L413.0 381.0ZM413.0 371.0L413.0 371.0L413.0 381.0L413.0 381.0ZM413.0 371.0L413.0 371.1L413.0 381.0L413.0 381.0ZM413.0 381.0L413.0 381.0L413.0 391.0L413.0 391.0ZM413.0 371.1L413.1 371.8L413.0 381.0L413.0 381.0ZM413.0 381.0L413.0 381.0L413.0 391.0L413.0 391.0ZM413.1 371.8L413.3 372.5L413.0 381.2L413.0 381.0ZM413.0 381.0L413.0 381.2L413.0 391.0L413.0 391.0ZM413.0 391.0L413.0 391.0L412.7 401.0L412.7 401.0ZM413.3 372.5L413.6 373.2L413.1 381.9L413.0 381.2ZM413.0 381.2L413.1 381.9L413.0 391.0L413.0 391.0ZM413.0 391.0L413.0 391.0L412.7 401.0L412.7 401.0ZM412.7 401.0L412.7 401.0L411.9 411.0L411.9 411.0ZM413.6 373.2L414.1 373.8L413.3 382.5L413.1 381.9ZM413.1 381.9L413.3 382.5L413.0 391.2L413.0 391.0ZM413.0 391.0L413.0 391.2L412.7 401.0L412.7 401.0ZM412.7 401.0L412.7 401.0L411.9 411.0L411.9 411.0ZM414.1 373.8L414.7 374.5L413.7 383.2L413.3 382.5ZM413.3 382.5L413.7 383.2L413.1 391.9L413.0 391.2ZM413.0 391.2L413.1 391.9L412.7 401.0L412.7 401.0ZM412.7 401.0L412.7 401.0L411.9 411.0L411.9 411.0ZM411.9 411.0L411.9 411.0L411.1 421.0L411.1 421.0ZM414.7 374.5L415.4 375.1L414.1 383.9L413.7 383.2ZM413.7 383.2L414.1 383.9L413.3 392.6L413.1 391.9ZM413.1 391.9L413.3 392.6L412.7 401.3L412.7 401.0ZM412.7 401.0L412.7 401.3L411.9 411.0L411.9 411.0ZM411.9 411.0L411.9 411.0L411.1 421.0L411.1 421.0ZM415.4 375.1L416.2 375.8L414.7 384.5L414.1 383.9ZM414.1 383.9L414.7 384.5L413.7 393.3L413.3 392.6ZM413.3 392.6L413.7 393.3L412.8 402.0L412.7 401.3ZM412.7 401.3L412.8 402.0L411.9 411.0L411.9 411.0ZM411.9 411.0L411.9 411.0L411.1 421.0L411.1 421.0ZM411.1 421.0L411.1 421.0L410.3 431.0L410.3 431.0ZM414.7 384.5L415.4 385.2L414.2 393.9L413.7 393.3ZM413.7 393.3L414.2 393.9L413.0 402.6L412.8 402.0ZM412.8 402.0L413.0 402.6L411.9 411.3L411.9 411.0ZM411.9 411.0L411.9 411.3L411.1 421.0L411.1 421.0ZM411.1 421.0L411.1 421.0L410.3 431.0L410.3 431.0ZM417.1 376.4L418.1 377.0L416.2 385.8L415.4 385.2ZM415.4 385.2L416.2 385.8L414.7 394.6L414.2 393.9ZM414.2 393.9L414.7 394.6L413.4 403.3L413.0 402.6ZM413.0 402.6L413.4 403.3L412.1 412.0L411.9 411.3ZM411.9 411.3L412.1 412.0L411.1 421.0L411.1 421.0ZM411.1 421.0L411.1 421.0L410.3 431.0L410.3 431.0ZM410.3 431.0L410.3 431.0L409.4 441.0L409.4 441.0ZM418.1 377.0L419.3 377.6L417.2 386.5L416.2 385.8ZM416.2 385.8L417.2 386.5L415.5 395.2L414.7 394.6ZM414.7 394.6L415.5 395.2L413.9 404.0L413.4 403.3ZM413.4 403.3L413.9 404.0L412.3 412.7L412.1 412.0ZM412.1 412.0L412.3 412.7L411.1 421.4L411.1 421.0ZM411.1 421.0L411.1 421.4L410.3 431.0L410.3 431.0ZM410.3 431.0L410.3 431.0L409.4 441.0L409.4 441.0ZM419.3 377.6L420.6 378.2L418.2 387.1L417.2 386.5ZM417.2 386.5L418.2 387.1L416.3 395.9L415.5 395.2ZM415.5 395.2L416.3 395.9L414.5 404.6L413.9 404.0ZM413.9 404.0L414.5 404.6L412.7 413.4L412.3 412.7ZM412.3 412.7L412.7 413.4L411.2 422.1L411.1 421.4ZM411.1 421.4L411.2 422.1L410.3 431.0L410.3 431.0ZM410.3 431.0L410.3 431.0L409.4 441.0L409.4 441.0ZM409.4 441.0L409.4 441.0L408.6 451.0L408.6 451.0ZM420.6 378.2L421.9 378.8L419.4 387.7L418.2 387.1ZM418.2 387.1L419.4 387.7L417.2 396.5L416.3 395.9ZM416.3 395.9L417.2 396.5L415.2 405.3L414.5 404.6ZM414.5 404.6L415.2 405.3L413.2 414.1L412.7 413.4ZM412.7 413.4L413.2 414.1L411.5 422.8L411.2 422.1ZM411.2 422.1L411.5 422.8L410.3 431.4L410.3 431.0ZM410.3 431.0L410.3 431.4L409.4 441.0L409.4 441.0ZM409.4 441.0L409.4 441.0L408.6 451.0L408.6 451.0ZM421.9 378.8L423.4 379.4L420.6 388.3L419.4 387.7ZM419.4 387.7L420.6 388.3L418.3 397.1L417.2 396.5ZM417.2 396.5L418.3 397.1L416.0 405.9L415.2 405.3ZM415.2 405.3L416.0 405.9L413.8 414.7L413.2 414.1ZM413.2 414.1L413.8 414.7L411.9 423.5L411.5 422.8ZM411.5 422.8L411.9 423.5L410.4 432.1L410.3 431.4ZM410.3 431.4L410.4 432.1L409.4 441.0L409.4 441.0ZM409.4 441.0L409.4 441.0L408.6 451.0L408.6 451.0ZM408.6 451.0L408.6 451.0L408.1 461.0L408.1 461.0ZM423.4 379.4L425.0 379.9L422.0 388.8L420.6 388.3ZM420.6 388.3L422.0 388.8L419.4 397.7L418.3 397.1ZM418.3 397.1L419.4 397.7L417.0 406.6L416.0 405.9ZM416.0 405.9L417.0 406.6L414.5 415.4L413.8 414.7ZM413.8 414.7L414.5 415.4L412.4 424.2L411.9 423.5ZM411.9 423.5L412.4 424.2L410.7 432.8L410.4 432.1ZM410.4 432.1L410.7 432.8L409.5 441.5L409.4 441.0ZM409.4 441.0L409.5 441.5L408.6 451.0L408.6 451.0ZM408.6 451.0L408.6 451.0L408.1 461.0L408.1 461.0ZM419.4 397.7L420.7 398.3L418.1 407.2L417.0 406.6ZM417.0 406.6L418.1 407.2L415.4 416.1L414.5 415.4ZM414.5 415.4L415.4 416.1L413.0 424.8L412.4 424.2ZM412.4 424.2L413.0 424.8L411.1 433.5L410.7 432.8ZM410.7 432.8L411.1 433.5L409.6 442.2L409.5 441.5ZM409.5 441.5L409.6 442.2L408.6 451.0L408.6 451.0ZM408.6 451.0L408.6 451.0L408.1 461.0L408.1 461.0ZM408.1 461.0L408.1 461.0L407.5 471.0L407.5 471.0ZM413.0 424.8L413.8 425.5L411.6 434.2L411.1 433.5ZM411.1 433.5L411.6 434.2L409.9 442.9L409.6 442.2ZM409.6 442.2L409.9 442.9L408.7 451.5L408.6 451.0ZM408.6 451.0L408.7 451.5L408.1 461.0L408.1 461.0ZM408.1 461.0L408.1 461.0L407.5 471.0L407.5 471.0ZM428.4 380.9L430.2 381.3L426.7 390.4L425.1 389.9ZM425.1 389.9L426.7 390.4L423.6 399.4L422.1 398.9ZM422.1 398.9L423.6 399.4L420.5 408.4L419.3 407.8ZM419.3 407.8L420.5 408.4L417.5 417.3L416.4 416.7ZM416.4 416.7L417.5 417.3L414.7 426.2L413.8 425.5ZM413.8 425.5L414.7 426.2L412.3 434.9L411.6 434.2ZM411.6 434.2L412.3 434.9L410.3 443.6L409.9 442.9ZM409.9 442.9L410.3 443.6L408.8 452.3L408.7 451.5ZM408.7 451.5L408.8 452.3L408.1 461.0L408.1 461.0ZM408.1 461.0L408.1 461.0L407.5 471.0L407.5 471.0ZM407.5 471.0L407.5 471.0L406.9 481.0L406.9 481.0ZM430.2 381.3L432.1 381.8L428.5 390.9L426.7 390.4ZM426.7 390.4L428.5 390.9L425.2 399.9L423.6 399.4ZM423.6 399.4L425.2 399.9L421.9 409.0L420.5 408.4ZM420.5 408.4L421.9 409.0L418.7 417.9L417.5 417.3ZM417.5 417.3L418.7 417.9L415.7 426.8L414.7 426.2ZM414.7 426.2L415.7 426.8L413.1 435.6L412.3 434.9ZM412.3 434.9L413.1 435.6L410.9 444.3L410.3 443.6ZM410.3 443.6L410.9 444.3L409.1 453.0L408.8 452.3ZM408.8 452.3L409.1 453.0L408.1 461.6L408.1 461.0ZM408.1 461.0L408.1 461.6L407.5 471.0L407.5 471.0ZM407.5 471.0L407.5 471.0L406.9 481.0L406.9 481.0ZM432.1 381.8L434.1 382.2L430.3 391.4L428.5 390.9ZM428.5 390.9L430.3 391.4L426.8 400.5L425.2 399.9ZM425.2 399.9L426.8 400.5L423.4 409.5L421.9 409.0ZM421.9 409.0L423.4 409.5L420.0 418.5L418.7 417.9ZM418.7 417.9L420.0 418.5L416.8 427.4L415.7 426.8ZM415.7 426.8L416.8 427.4L414.0 436.3L413.1 435.6ZM413.1 435.6L414.0 436.3L411.5 445.0L410.9 444.3ZM410.9 444.3L411.5 445.0L409.6 453.7L409.1 453.0ZM409.1 453.0L409.6 453.7L408.3 462.3L408.1 461.6ZM408.1 461.6L408.3 462.3L407.5 471.0L407.5 471.0ZM407.5 471.0L407.5 471.0L406.9 481.0L406.9 481.0ZM406.9 481.0L406.9 481.0L406.3 491.0L406.3 491.0ZM434.1 382.2L436.2 382.6L432.3 391.8L430.3 391.4ZM430.3 391.4L432.3 391.8L428.6 400.9L426.8 400.5ZM426.8 400.5L428.6 400.9L425.0 410.0L423.4 409.5ZM423.4 409.5L425.0 410.0L421.4 419.1L420.0 418.5ZM420.0 418.5L421.4 419.1L418.0 428.1L416.8 427.4ZM416.8 427.4L418.0 428.1L415.0 436.9L414.0 436.3ZM414.0 436.3L415.0 436.9L412.3 445.7L411.5 445.0ZM411.5 445.0L412.3 445.7L410.1 454.4L409.6 453.7ZM409.6 453.7L410.1 454.4L408.6 463.0L408.3 462.3ZM408.3 462.3L408.6 463.0L407.5 471.6L407.5 471.0ZM407.5 471.0L407.5 471.6L406.9 481.0L406.9 481.0ZM406.9 481.0L406.9 481.0L406.3 491.0L406.3 491.0ZM436.2 382.6L438.3 382.9L434.3 392.2L432.3 391.8ZM432.3 391.8L434.3 392.2L430.5 401.4L428.6 400.9ZM428.6 400.9L430.5 401.4L426.7 410.5L425.0 410.0ZM425.0 410.0L426.7 410.5L422.9 419.7L421.4 419.1ZM421.4 419.1L422.9 419.7L419.3 428.7L418.0 428.1ZM418.0 428.1L419.3 428.7L416.1 437.6L415.0 436.9ZM415.0 436.9L416.1 437.6L413.2 446.4L412.3 445.7ZM412.3 445.7L413.2 446.4L410.8 455.1L410.1 454.4ZM410.1 454.4L410.8 455.1L409.0 463.8L408.6 463.0ZM408.6 463.0L409.0 463.8L407.7 472.4L407.5 471.6ZM407.5 471.6L407.7 472.4L406.9 481.0L406.9 481.0ZM406.9 481.0L406.9 481.0L406.3 491.0L406.3 491.0ZM406.3 491.0L406.3 491.0L405.8 501.0L405.8 501.0ZM426.7 410.5L428.5 411.0L424.5 420.2L422.9 419.7ZM422.9 419.7L424.5 420.2L420.8 429.3L419.3 428.7ZM419.3 428.7L420.8 429.3L417.4 438.2L416.1 437.6ZM416.1 437.6L417.4 438.2L414.3 447.1L413.2 446.4ZM413.2 446.4L414.3 447.1L411.6 455.8L410.8 455.1ZM410.8 455.1L411.6 455.8L409.6 464.5L409.0 463.8ZM409.0 463.8L409.6 464.5L408.0 473.1L407.7 472.4ZM407.7 472.4L408.0 473.1L407.0 481.7L406.9 481.0ZM406.9 481.0L407.0 481.7L406.3 491.0L406.3 491.0ZM406.3 491.0L406.3 491.0L405.8 501.0L405.8 501.0ZM417.4 438.2L418.7 438.8L415.4 447.7L414.3 447.1ZM414.3 447.1L415.4 447.7L412.6 456.5L411.6 455.8ZM411.6 455.8L412.6 456.5L410.3 465.2L409.6 464.5ZM409.6 464.5L410.3 465.2L408.5 473.8L408.0 473.1ZM408.0 473.1L408.5 473.8L407.2 482.4L407.0 481.7ZM407.0 481.7L407.2 482.4L406.3 491.0L406.3 491.0ZM406.3 491.0L406.3 491.0L405.8 501.0L405.8 501.0ZM405.8 501.0L405.8 501.0L405.2 511.0L405.2 511.0ZM410.3 465.2L411.1 465.9L409.1 474.6L408.5 473.8ZM408.5 473.8L409.1 474.6L407.5 483.2L407.2 482.4ZM407.2 482.4L407.5 483.2L406.4 491.7L406.3 491.0ZM406.3 491.0L406.4 491.7L405.8 501.0L405.8 501.0ZM405.8 501.0L405.8 501.0L405.2 511.0L405.2 511.0ZM445.1 383.8L447.5 384.1L442.9 393.6L440.7 393.3ZM440.7 393.3L442.9 393.6L438.6 403.0L436.5 402.6ZM436.5 402.6L438.6 403.0L434.3 412.3L432.3 411.9ZM432.3 411.9L434.3 412.3L430.0 421.7L428.1 421.2ZM428.1 421.2L430.0 421.7L425.7 430.9L424.0 430.4ZM424.0 430.4L425.7 430.9L421.8 440.0L420.2 439.4ZM420.2 439.4L421.8 440.0L418.1 449.0L416.7 448.3ZM416.7 448.3L418.1 449.0L414.8 457.8L413.6 457.2ZM413.6 457.2L414.8 457.8L412.1 466.6L411.1 465.9ZM411.1 465.9L412.1 466.6L409.8 475.3L409.1 474.6ZM409.1 474.6L409.8 475.3L408.0 483.9L407.5 483.2ZM407.5 483.2L408.0 483.9L406.6 492.5L406.4 491.7ZM406.4 491.7L406.6 492.5L405.8 501.0L405.8 501.0ZM405.8 501.0L405.8 501.0L405.2 511.0L405.2 511.0ZM405.2 511.0L405.2 511.0L404.6 521.0L404.6 521.0ZM447.5 384.1L449.9 384.3L445.3 393.9L442.9 393.6ZM442.9 393.6L445.3 393.9L440.8 403.3L438.6 403.0ZM438.6 403.0L440.8 403.3L436.4 412.7L434.3 412.3ZM434.3 412.3L436.4 412.7L431.9 422.1L430.0 421.7ZM430.0 421.7L431.9 422.1L427.6 431.4L425.7 430.9ZM425.7 430.9L427.6 431.4L423.5 440.5L421.8 440.0ZM421.8 440.0L423.5 440.5L419.6 449.6L418.1 449.0ZM418.1 449.0L419.6 449.6L416.1 458.5L414.8 457.8ZM414.8 457.8L416.1 458.5L413.2 467.3L412.1 466.6ZM412.1 466.6L413.2 467.3L410.6 476.0L409.8 475.3ZM409.8 475.3L410.6 476.0L408.6 484.6L408.0 483.9ZM408.0 483.9L408.6 484.6L406.9 493.2L406.6 492.5ZM406.6 492.5L406.9 493.2L405.8 501.8L405.8 501.0ZM405.8 501.0L405.8 501.8L405.2 511.0L405.2 511.0ZM405.2 511.0L405.2 511.0L404.6 521.0L404.6 521.0ZM449.9 384.3L452.3 384.5L447.6 394.1L445.3 393.9ZM445.3 393.9L447.6 394.1L443.1 403.6L440.8 403.3ZM440.8 403.3L443.1 403.6L438.6 413.1L436.4 412.7ZM436.4 412.7L438.6 413.1L434.0 422.5L431.9 422.1ZM431.9 422.1L434.0 422.5L429.5 431.8L427.6 431.4ZM427.6 431.4L429.5 431.8L425.2 441.0L423.5 440.5ZM423.5 440.5L425.2 441.0L421.2 450.1L419.6 449.6ZM419.6 449.6L421.2 450.1L417.5 459.1L416.1 458.5ZM416.1 458.5L417.5 459.1L414.4 467.9L413.2 467.3ZM413.2 467.3L414.4 467.9L411.6 476.7L410.6 476.0ZM410.6 476.0L411.6 476.7L409.3 485.4L408.6 484.6ZM408.6 484.6L409.3 485.4L407.4 494.0L406.9 493.2ZM406.9 493.2L407.4 494.0L406.1 502.6L405.8 501.8ZM405.8 501.8L406.1 502.6L405.2 511.1L405.2 511.0ZM405.2 511.0L405.2 511.1L404.6 521.0L404.6 521.0ZM404.6 521.0L404.6 521.0L404.0 531.0L404.0 531.0ZM452.3 384.5L454.7 384.6L450.0 394.3L447.6 394.1ZM447.6 394.1L450.0 394.3L445.4 403.9L443.1 403.6ZM443.1 403.6L445.4 403.9L440.8 413.4L438.6 413.1ZM438.6 413.1L440.8 413.4L436.1 422.9L434.0 422.5ZM434.0 422.5L436.1 422.9L431.5 432.3L429.5 431.8ZM429.5 431.8L431.5 432.3L427.1 441.5L425.2 441.0ZM425.2 441.0L427.1 441.5L422.9 450.7L421.2 450.1ZM421.2 450.1L422.9 450.7L419.0 459.7L417.5 459.1ZM417.5 459.1L419.0 459.7L415.7 468.6L414.4 467.9ZM414.4 467.9L415.7 468.6L412.7 477.4L411.6 476.7ZM411.6 476.7L412.7 477.4L410.1 486.1L409.3 485.4ZM409.3 485.4L410.1 486.1L408.0 494.7L407.4 494.0ZM407.4 494.0L408.0 494.7L406.4 503.3L406.1 502.6ZM406.1 502.6L406.4 503.3L405.3 511.8L405.2 511.1ZM405.2 511.1L405.3 511.8L404.6 521.0L404.6 521.0ZM404.6 521.0L404.6 521.0L404.0 531.0L404.0 531.0ZM436.1 422.9L438.3 423.3L433.6 432.7L431.5 432.3ZM431.5 432.3L433.6 432.7L429.1 442.0L427.1 441.5ZM427.1 441.5L429.1 442.0L424.7 451.2L422.9 450.7ZM422.9 450.7L424.7 451.2L420.7 460.3L419.0 459.7ZM419.0 459.7L420.7 460.3L417.1 469.2L415.7 468.6ZM415.7 468.6L417.1 469.2L413.9 478.0L412.7 477.4ZM412.7 477.4L413.9 478.0L411.1 486.8L410.1 486.1ZM410.1 486.1L411.1 486.8L408.8 495.5L408.0 494.7ZM408.0 494.7L408.8 495.5L406.9 504.1L406.4 503.3ZM406.4 503.3L406.9 504.1L405.5 512.6L405.3 511.8ZM405.3 511.8L405.5 512.6L404.6 521.1L404.6 521.0ZM404.6 521.0L404.6 521.1L404.0 531.0L404.0 531.0ZM404.0 531.0L404.0 531.0L403.0 541.0L403.0 541.0ZM424.7 451.2L426.6 451.7L422.4 460.8L420.7 460.3ZM420.7 460.3L422.4 460.8L418.7 469.8L417.1 469.2ZM417.1 469.2L418.7 469.8L415.3 478.7L413.9 478.0ZM413.9 478.0L415.3 478.7L412.2 487.5L411.1 486.8ZM411.1 486.8L412.2 487.5L409.7 496.2L408.8 495.5ZM408.8 495.5L409.7 496.2L407.5 504.8L406.9 504.1ZM406.9 504.1L407.5 504.8L405.9 513.4L405.5 512.6ZM405.5 512.6L405.9 513.4L404.7 521.9L404.6 521.1ZM404.6 521.1L404.7 521.9L404.0 531.0L404.0 531.0ZM404.0 531.0L404.0 531.0L403.0 541.0L403.0 541.0ZM415.3 478.7L416.7 479.3L413.5 488.1L412.2 487.5ZM412.2 487.5L413.5 488.1L410.7 496.9L409.7 496.2ZM409.7 496.2L410.7 496.9L408.3 505.5L407.5 504.8ZM407.5 504.8L408.3 505.5L406.4 514.1L405.9 513.4ZM405.9 513.4L406.4 514.1L404.9 522.7L404.7 521.9ZM404.7 521.9L404.9 522.7L404.0 531.2L404.0 531.0ZM404.0 531.0L404.0 531.2L403.0 541.0L403.0 541.0ZM403.0 541.0L403.0 541.0L401.9 551.0L401.9 551.0ZM406.4 514.1L407.0 514.9L405.3 523.4L404.9 522.7ZM404.9 522.7L405.3 523.4L404.1 532.0L404.0 531.2ZM404.0 531.2L404.1 532.0L403.0 541.0L403.0 541.0ZM403.0 541.0L403.0 541.0L401.9 551.0L401.9 551.0ZM464.8 384.8L467.3 384.8L462.4 394.8L459.9 394.8ZM459.9 394.8L462.4 394.8L457.5 404.7L455.1 404.6ZM455.1 404.6L457.5 404.7L452.7 414.6L450.2 414.4ZM450.2 414.4L452.7 414.6L447.7 424.4L445.3 424.2ZM445.3 424.2L447.7 424.4L442.7 434.1L440.3 433.8ZM440.3 433.8L442.7 434.1L437.7 443.6L435.4 443.3ZM435.4 443.3L437.7 443.6L432.9 453.1L430.7 452.7ZM430.7 452.7L432.9 453.1L428.2 462.4L426.2 461.9ZM426.2 461.9L428.2 462.4L423.9 471.5L422.1 471.0ZM422.1 471.0L423.9 471.5L420.0 480.5L418.3 479.9ZM418.3 479.9L420.0 480.5L416.3 489.4L414.8 488.8ZM414.8 488.8L416.3 489.4L413.0 498.2L411.8 497.6ZM411.8 497.6L413.0 498.2L410.2 507.0L409.2 506.3ZM409.2 506.3L410.2 507.0L407.8 515.6L407.0 514.9ZM407.0 514.9L407.8 515.6L405.8 524.2L405.3 523.4ZM405.3 523.4L405.8 524.2L404.4 532.7L404.1 532.0ZM404.1 532.0L404.4 532.7L403.0 541.2L403.0 541.0ZM403.0 541.0L403.0 541.2L401.9 551.0L401.9 551.0ZM401.9 551.0L401.9 551.0L400.9 561.0L400.9 561.0ZM467.3 384.8L469.8 384.8L464.9 394.8L462.4 394.8ZM462.4 394.8L464.9 394.8L460.1 404.8L457.5 404.7ZM457.5 404.7L460.1 404.8L455.2 414.7L452.7 414.6ZM452.7 414.6L455.2 414.7L450.1 424.6L447.7 424.4ZM447.7 424.4L450.1 424.6L445.1 434.4L442.7 434.1ZM442.7 434.1L445.1 434.4L440.0 444.0L437.7 443.6ZM437.7 443.6L440.0 444.0L435.1 453.5L432.9 453.1ZM432.9 453.1L435.1 453.5L430.3 462.8L428.2 462.4ZM428.2 462.4L430.3 462.8L425.9 472.0L423.9 471.5ZM423.9 471.5L425.9 472.0L421.7 481.1L420.0 480.5ZM420.0 480.5L421.7 481.1L417.9 490.0L416.3 489.4ZM416.3 489.4L417.9 490.0L414.4 498.9L413.0 498.2ZM413.0 498.2L414.4 498.9L411.3 507.7L410.2 507.0ZM410.2 507.0L411.3 507.7L408.7 516.4L407.8 515.6ZM407.8 515.6L408.7 516.4L406.5 525.0L405.8 524.2ZM405.8 524.2L406.5 525.0L404.7 533.5L404.4 532.7ZM404.4 532.7L404.7 533.5L403.1 542.0L403.0 541.2ZM403.0 541.2L403.1 542.0L401.9 551.0L401.9 551.0ZM401.9 551.0L401.9 551.0L400.9 561.0L400.9 561.0ZM400.9 561.0L400.9 561.0L400.3 571.0L400.3 571.0ZM464.9 394.8L467.4 394.8L462.6 404.8L460.1 404.8ZM460.1 404.8L462.6 404.8L457.7 414.8L455.2 414.7ZM455.2 414.7L457.7 414.8L452.6 424.8L450.1 424.6ZM450.1 424.6L452.6 424.8L447.5 434.6L445.1 434.4ZM445.1 434.4L447.5 434.6L442.4 444.3L440.0 444.0ZM440.0 444.0L442.4 444.3L437.4 453.8L435.1 453.5ZM435.1 453.5L437.4 453.8L432.5 463.3L430.3 462.8ZM430.3 462.8L432.5 463.3L427.9 472.5L425.9 472.0ZM425.9 472.0L427.9 472.5L423.6 481.6L421.7 481.1ZM421.7 481.1L423.6 481.6L419.6 490.6L417.9 490.0ZM417.9 490.0L419.6 490.6L415.9 499.5L414.4 498.9ZM414.4 498.9L415.9 499.5L412.6 508.3L411.3 507.7ZM411.3 507.7L412.6 508.3L409.7 517.1L408.7 516.4ZM408.7 516.4L409.7 517.1L407.3 525.7L406.5 525.0ZM406.5 525.0L407.3 525.7L405.3 534.3L404.7 533.5ZM404.7 533.5L405.3 534.3L403.3 542.8L403.1 542.0ZM403.1 542.0L403.3 542.8L401.9 551.3L401.9 551.0ZM401.9 551.0L401.9 551.3L400.9 561.0L400.9 561.0ZM400.9 561.0L400.9 561.0L400.3 571.0L400.3 571.0ZM447.5 434.6L450.0 434.8L444.9 444.6L442.4 444.3ZM442.4 444.3L444.9 444.6L439.8 454.2L437.4 453.8ZM437.4 453.8L439.8 454.2L434.8 463.7L432.5 463.3ZM432.5 463.3L434.8 463.7L430.1 473.0L427.9 472.5ZM427.9 472.5L430.1 473.0L425.6 482.1L423.6 481.6ZM423.6 481.6L425.6 482.1L421.4 491.2L419.6 490.6ZM419.6 490.6L421.4 491.2L417.5 500.2L415.9 499.5ZM415.9 499.5L417.5 500.2L414.0 509.0L412.6 508.3ZM412.6 508.3L414.0 509.0L410.9 517.8L409.7 517.1ZM409.7 517.1L410.9 517.8L408.2 526.4L407.3 525.7ZM407.3 525.7L408.2 526.4L405.9 535.0L405.3 534.3ZM405.3 534.3L405.9 535.0L403.7 543.6L403.3 542.8ZM403.3 542.8L403.7 543.6L402.1 552.1L401.9 551.3ZM401.9 551.3L402.1 552.1L400.9 561.0L400.9 561.0ZM400.9 561.0L400.9 561.0L400.3 571.0L400.3 571.0ZM400.3 571.0L400.3 571.0L399.7 581.0L399.7 581.0ZM434.8 463.7L437.1 464.0L432.3 473.4L430.1 473.0ZM430.1 473.0L432.3 473.4L427.7 482.6L425.6 482.1ZM425.6 482.1L427.7 482.6L423.3 491.8L421.4 491.2ZM421.4 491.2L423.3 491.8L419.2 500.8L417.5 500.2ZM417.5 500.2L419.2 500.8L415.5 509.7L414.0 509.0ZM414.0 509.0L415.5 509.7L412.2 518.5L410.9 517.8ZM410.9 517.8L412.2 518.5L409.3 527.2L408.2 526.4ZM408.2 526.4L409.3 527.2L406.7 535.8L405.9 535.0ZM405.9 535.0L406.7 535.8L404.3 544.4L403.7 543.6ZM403.7 543.6L404.3 544.4L402.3 552.9L402.1 552.1ZM402.1 552.1L402.3 552.9L401.0 561.4L400.9 561.0ZM400.9 561.0L401.0 561.4L400.3 571.0L400.3 571.0ZM400.3 571.0L400.3 571.0L399.7 581.0L399.7 581.0ZM423.3 491.8L425.3 492.3L421.1 501.3L419.2 500.8ZM419.2 500.8L421.1 501.3L417.2 510.3L415.5 509.7ZM415.5 509.7L417.2 510.3L413.6 519.1L412.2 518.5ZM412.2 518.5L413.6 519.1L410.4 527.9L409.3 527.2ZM409.3 527.2L410.4 527.9L407.7 536.5L406.7 535.8ZM406.7 535.8L407.7 536.5L405.0 545.2L404.3 544.4ZM404.3 544.4L405.0 545.2L402.8 553.7L402.3 552.9ZM402.3 552.9L402.8 553.7L401.1 562.2L401.0 561.4ZM401.0 561.4L401.1 562.2L400.3 571.0L400.3 571.0ZM400.3 571.0L400.3 571.0L399.7 581.0L399.7 581.0ZM399.7 581.0L399.7 581.0L399.0 591.0L399.0 591.0ZM413.6 519.1L415.1 519.8L411.8 528.6L410.4 527.9ZM410.4 527.9L411.8 528.6L408.8 537.3L407.7 536.5ZM407.7 536.5L408.8 537.3L405.8 545.9L405.0 545.2ZM405.0 545.2L405.8 545.9L403.3 554.5L402.8 553.7ZM402.8 553.7L403.3 554.5L401.4 563.0L401.1 562.2ZM401.1 562.2L401.4 563.0L400.3 571.4L400.3 571.0ZM400.3 571.0L400.3 571.4L399.7 581.0L399.7 581.0ZM399.7 581.0L399.7 581.0L399.0 591.0L399.0 591.0ZM403.3 554.5L404.0 555.3L401.8 563.8L401.4 563.0ZM401.4 563.0L401.8 563.8L400.5 572.2L400.3 571.4ZM400.3 571.4L400.5 572.2L399.7 581.0L399.7 581.0ZM399.7 581.0L399.7 581.0L399.0 591.0L399.0 591.0ZM399.0 591.0L399.0 591.0L398.4 601.0L398.4 601.0ZM484.3 383.7L486.6 383.5L482.1 394.0L479.8 394.2ZM479.8 394.2L482.1 394.0L477.5 404.4L475.1 404.5ZM475.1 404.5L477.5 404.4L472.8 414.7L470.3 414.8ZM470.3 414.8L472.8 414.7L467.9 425.1L465.4 425.1ZM465.4 425.1L467.9 425.1L462.8 435.3L460.2 435.3ZM460.2 435.3L462.8 435.3L457.6 445.4L455.0 445.3ZM455.0 445.3L457.6 445.4L452.4 455.4L449.8 455.2ZM449.8 455.2L452.4 455.4L447.0 465.2L444.5 464.9ZM444.5 464.9L447.0 465.2L441.9 474.8L439.4 474.5ZM439.4 474.5L441.9 474.8L436.8 484.3L434.4 483.9ZM434.4 483.9L436.8 484.3L431.9 493.7L429.6 493.2ZM429.6 493.2L431.9 493.7L427.1 502.9L425.0 502.4ZM425.0 502.4L427.1 502.9L422.7 512.0L420.7 511.5ZM420.7 511.5L422.7 512.0L418.5 521.0L416.8 520.4ZM416.8 520.4L418.5 521.0L414.7 529.9L413.2 529.2ZM413.2 529.2L414.7 529.9L411.3 538.7L410.0 538.0ZM410.0 538.0L411.3 538.7L407.9 547.4L406.8 546.7ZM406.8 546.7L407.9 547.4L404.9 556.1L404.0 555.3ZM404.0 555.3L404.9 556.1L402.4 564.6L401.8 563.8ZM401.8 563.8L402.4 564.6L400.8 573.1L400.5 572.2ZM400.5 572.2L400.8 573.1L399.7 581.5L399.7 581.0ZM399.7 581.0L399.7 581.5L399.0 591.0L399.0 591.0ZM399.0 591.0L399.0 591.0L398.4 601.0L398.4 601.0ZM477.5 404.4L479.9 404.2L475.3 414.6L472.8 414.7ZM472.8 414.7L475.3 414.6L470.5 425.0L467.9 425.1ZM467.9 425.1L470.5 425.0L465.4 435.3L462.8 435.3ZM462.8 435.3L465.4 435.3L460.3 445.5L457.6 445.4ZM457.6 445.4L460.3 445.5L455.0 455.5L452.4 455.4ZM452.4 455.4L455.0 455.5L449.6 465.4L447.0 465.2ZM447.0 465.2L449.6 465.4L444.4 475.1L441.9 474.8ZM441.9 474.8L444.4 475.1L439.2 484.6L436.8 484.3ZM436.8 484.3L439.2 484.6L434.2 494.1L431.9 493.7ZM431.9 493.7L434.2 494.1L429.4 503.4L427.1 502.9ZM427.1 502.9L429.4 503.4L424.7 512.5L422.7 512.0ZM422.7 512.0L424.7 512.5L420.4 521.6L418.5 521.0ZM418.5 521.0L420.4 521.6L416.4 530.5L414.7 529.9ZM414.7 529.9L416.4 530.5L412.7 539.3L411.3 538.7ZM411.3 538.7L412.7 539.3L409.1 548.1L407.9 547.4ZM407.9 547.4L409.1 548.1L405.9 556.8L404.9 556.1ZM404.9 556.1L405.9 556.8L403.1 565.4L402.4 564.6ZM402.4 564.6L403.1 565.4L401.2 573.9L400.8 573.1ZM400.8 573.1L401.2 573.9L399.9 582.3L399.7 581.5ZM399.7 581.5L399.9 582.3L399.0 591.0L399.0 591.0ZM399.0 591.0L399.0 591.0L398.4 601.0L398.4 601.0ZM398.4 601.0L398.4 601.0L397.8 611.0L397.8 611.0ZM465.4 435.3L468.0 435.3L462.9 445.5L460.3 445.5ZM460.3 445.5L462.9 445.5L457.6 455.6L455.0 455.5ZM455.0 455.5L457.6 455.6L452.3 465.6L449.6 465.4ZM449.6 465.4L452.3 465.6L447.0 475.3L444.4 475.1ZM444.4 475.1L447.0 475.3L441.7 484.9L439.2 484.6ZM439.2 484.6L441.7 484.9L436.6 494.4L434.2 494.1ZM434.2 494.1L436.6 494.4L431.6 503.8L429.4 503.4ZM429.4 503.4L431.6 503.8L426.9 513.0L424.7 512.5ZM424.7 512.5L426.9 513.0L422.4 522.1L420.4 521.6ZM420.4 521.6L422.4 522.1L418.2 531.1L416.4 530.5ZM416.4 530.5L418.2 531.1L414.3 540.0L412.7 539.3ZM412.7 539.3L414.3 540.0L410.5 548.9L409.1 548.1ZM409.1 548.1L410.5 548.9L407.0 557.6L405.9 556.8ZM405.9 556.8L407.0 557.6L404.0 566.2L403.1 565.4ZM403.1 565.4L404.0 566.2L401.8 574.7L401.2 573.9ZM401.2 573.9L401.8 574.7L400.2 583.1L399.9 582.3ZM399.9 582.3L400.2 583.1L399.1 591.5L399.0 591.0ZM399.0 591.0L399.1 591.5L398.4 601.0L398.4 601.0ZM398.4 601.0L398.4 601.0L397.8 611.0L397.8 611.0ZM447.0 475.3L449.6 475.5L444.3 485.2L441.7 484.9ZM441.7 484.9L444.3 485.2L439.1 494.8L436.6 494.4ZM436.6 494.4L439.1 494.8L434.0 504.2L431.6 503.8ZM431.6 503.8L434.0 504.2L429.1 513.5L426.9 513.0ZM426.9 513.0L429.1 513.5L424.5 522.7L422.4 522.1ZM422.4 522.1L424.5 522.7L420.1 531.7L418.2 531.1ZM418.2 531.1L420.1 531.7L416.0 540.6L414.3 540.0ZM414.3 540.0L416.0 540.6L412.0 549.5L410.5 548.9ZM410.5 548.9L412.0 549.5L408.3 558.3L407.0 557.6ZM407.0 557.6L408.3 558.3L405.0 567.0L404.0 566.2ZM404.0 566.2L405.0 567.0L402.6 575.5L401.8 574.7ZM401.8 574.7L402.6 575.5L400.6 584.0L400.2 583.1ZM400.2 583.1L400.6 584.0L399.2 592.4L399.1 591.5ZM399.1 591.5L399.2 592.4L398.4 601.0L398.4 601.0ZM398.4 601.0L398.4 601.0L397.8 611.0L397.8 611.0ZM397.8 611.0L397.8 611.0L397.1 621.0L397.1 621.0ZM434.0 504.2L436.4 504.6L431.4 513.9L429.1 513.5ZM429.1 513.5L431.4 513.9L426.6 523.2L424.5 522.7ZM424.5 522.7L426.6 523.2L422.1 532.3L420.1 531.7ZM420.1 531.7L422.1 532.3L417.8 541.2L416.0 540.6ZM416.0 540.6L417.8 541.2L413.6 550.2L412.0 549.5ZM412.0 549.5L413.6 550.2L409.7 559.0L408.3 558.3ZM408.3 558.3L409.7 559.0L406.2 567.7L405.0 567.0ZM405.0 567.0L406.2 567.7L403.5 576.3L402.6 575.5ZM402.6 575.5L403.5 576.3L401.2 584.8L400.6 584.0ZM400.6 584.0L401.2 584.8L399.6 593.2L399.2 592.4ZM399.2 592.4L399.6 593.2L398.4 601.6L398.4 601.0ZM398.4 601.0L398.4 601.6L397.8 611.0L397.8 611.0ZM397.8 611.0L397.8 611.0L397.1 621.0L397.1 621.0ZM422.1 532.3L424.2 532.8L419.7 541.8L417.8 541.2ZM417.8 541.2L419.7 541.8L415.3 550.8L413.6 550.2ZM413.6 550.2L415.3 550.8L411.2 559.7L409.7 559.0ZM409.7 559.0L411.2 559.7L407.5 568.5L406.2 567.7ZM406.2 567.7L407.5 568.5L404.5 577.1L403.5 576.3ZM403.5 576.3L404.5 577.1L402.0 585.6L401.2 584.8ZM401.2 584.8L402.0 585.6L400.0 594.0L399.6 593.2ZM399.6 593.2L400.0 594.0L398.6 602.4L398.4 601.6ZM398.4 601.6L398.6 602.4L397.8 611.0L397.8 611.0ZM397.8 611.0L397.8 611.0L397.1 621.0L397.1 621.0ZM397.1 621.0L397.1 621.0L396.5 631.0L396.5 631.0ZM407.5 568.5L408.9 569.2L405.7 577.8L404.5 577.1ZM404.5 577.1L405.7 577.8L402.9 586.4L402.0 585.6ZM402.0 585.6L402.9 586.4L400.7 594.9L400.0 594.0ZM400.0 594.0L400.7 594.9L399.0 603.3L398.6 602.4ZM398.6 602.4L399.0 603.3L397.8 611.6L397.8 611.0ZM397.8 611.0L397.8 611.6L397.1 621.0L397.1 621.0ZM397.1 621.0L397.1 621.0L396.5 631.0L396.5 631.0ZM400.7 594.9L401.4 595.7L399.4 604.1L399.0 603.3ZM399.0 603.3L399.4 604.1L398.0 612.5L397.8 611.6ZM397.8 611.6L398.0 612.5L397.1 621.0L397.1 621.0ZM397.1 621.0L397.1 621.0L396.5 631.0L396.5 631.0ZM396.5 631.0L396.5 631.0L395.9 641.0L395.9 641.0ZM489.4 413.1L491.6 412.8L487.6 423.6L485.3 423.9ZM485.3 423.9L487.6 423.6L483.2 434.3L480.8 434.6ZM480.8 434.6L483.2 434.3L478.5 445.0L476.0 445.1ZM476.0 445.1L478.5 445.0L473.6 455.5L471.0 455.6ZM471.0 455.6L473.6 455.5L468.4 465.8L465.7 465.9ZM465.7 465.9L468.4 465.8L463.1 476.0L460.4 476.0ZM460.4 476.0L463.1 476.0L457.7 486.1L454.9 486.0ZM454.9 486.0L457.7 486.1L452.2 496.0L449.5 495.8ZM449.5 495.8L452.2 496.0L446.8 505.7L444.1 505.5ZM444.1 505.5L446.8 505.7L441.4 515.4L438.8 515.1ZM438.8 515.1L441.4 515.4L436.1 524.8L433.6 524.5ZM433.6 524.5L436.1 524.8L431.0 534.2L428.7 533.8ZM428.7 533.8L431.0 534.2L426.1 543.4L423.9 542.9ZM423.9 542.9L426.1 543.4L421.2 552.6L419.1 552.1ZM419.1 552.1L421.2 552.6L416.5 561.7L414.6 561.1ZM414.6 561.1L416.5 561.7L412.1 570.6L410.4 569.9ZM410.4 569.9L412.1 570.6L408.4 579.3L407.0 578.6ZM407.0 578.6L408.4 579.3L405.1 587.9L404.0 587.2ZM404.0 587.2L405.1 587.9L402.4 596.5L401.4 595.7ZM401.4 595.7L402.4 596.5L400.1 604.9L399.4 604.1ZM399.4 604.1L400.1 604.9L398.4 613.3L398.0 612.5ZM398.0 612.5L398.4 613.3L397.2 621.7L397.1 621.0ZM397.1 621.0L397.2 621.7L396.5 631.0L396.5 631.0ZM396.5 631.0L396.5 631.0L395.9 641.0L395.9 641.0ZM478.5 445.0L481.1 444.8L476.2 455.3L473.6 455.5ZM473.6 455.5L476.2 455.3L471.1 465.8L468.4 465.8ZM468.4 465.8L471.1 465.8L465.8 476.0L463.1 476.0ZM463.1 476.0L465.8 476.0L460.4 486.1L457.7 486.1ZM457.7 486.1L460.4 486.1L454.9 496.1L452.2 496.0ZM452.2 496.0L454.9 496.1L449.5 505.9L446.8 505.7ZM446.8 505.7L449.5 505.9L444.0 515.6L441.4 515.4ZM441.4 515.4L444.0 515.6L438.7 525.2L436.1 524.8ZM436.1 524.8L438.7 525.2L433.4 534.6L431.0 534.2ZM431.0 534.2L433.4 534.6L428.4 543.9L426.1 543.4ZM426.1 543.4L428.4 543.9L423.3 553.2L421.2 552.6ZM421.2 552.6L423.3 553.2L418.5 562.3L416.5 561.7ZM416.5 561.7L418.5 562.3L413.9 571.3L412.1 570.6ZM412.1 570.6L413.9 571.3L410.0 580.0L408.4 579.3ZM408.4 579.3L410.0 580.0L406.5 588.7L405.1 587.9ZM405.1 587.9L406.5 588.7L403.4 597.3L402.4 596.5ZM402.4 596.5L403.4 597.3L400.9 605.8L400.1 604.9ZM400.1 604.9L400.9 605.8L398.9 614.2L398.4 613.3ZM398.4 613.3L398.9 614.2L397.4 622.6L397.2 621.7ZM397.2 621.7L397.4 622.6L396.5 631.0L396.5 631.0ZM396.5 631.0L396.5 631.0L395.9 641.0L395.9 641.0ZM395.9 641.0L395.9 641.0L395.2 651.0L395.2 651.0ZM460.4 486.1L463.2 486.1L457.7 496.2L454.9 496.1ZM454.9 496.1L457.7 496.2L452.2 506.1L449.5 505.9ZM449.5 505.9L452.2 506.1L446.7 515.9L444.0 515.6ZM444.0 515.6L446.7 515.9L441.3 525.5L438.7 525.2ZM438.7 525.2L441.3 525.5L436.0 535.0L433.4 534.6ZM433.4 534.6L436.0 535.0L430.8 544.3L428.4 543.9ZM428.4 543.9L430.8 544.3L425.6 553.7L423.3 553.2ZM423.3 553.2L425.6 553.7L420.6 562.9L418.5 562.3ZM418.5 562.3L420.6 562.9L415.9 571.9L413.9 571.3ZM413.9 571.3L415.9 571.9L411.7 580.7L410.0 580.0ZM410.0 580.0L411.7 580.7L407.9 589.4L406.5 588.7ZM406.5 588.7L407.9 589.4L404.6 598.0L403.4 597.3ZM403.4 597.3L404.6 598.0L401.8 606.6L400.9 605.8ZM400.9 605.8L401.8 606.6L399.5 615.0L398.9 614.2ZM398.9 614.2L399.5 615.0L397.8 623.4L397.4 622.6ZM397.4 622.6L397.8 623.4L396.6 631.8L396.5 631.0ZM396.5 631.0L396.6 631.8L395.9 641.0L395.9 641.0ZM395.9 641.0L395.9 641.0L395.2 651.0L395.2 651.0ZM446.7 515.9L449.4 516.1L443.9 525.8L441.3 525.5ZM441.3 525.5L443.9 525.8L438.5 535.3L436.0 535.0ZM436.0 535.0L438.5 535.3L433.3 544.8L430.8 544.3ZM430.8 544.3L433.3 544.8L427.9 554.2L425.6 553.7ZM425.6 553.7L427.9 554.2L422.8 563.4L420.6 562.9ZM420.6 562.9L422.8 563.4L417.9 572.5L415.9 571.9ZM415.9 571.9L417.9 572.5L413.5 581.4L411.7 580.7ZM411.7 580.7L413.5 581.4L409.5 590.1L407.9 589.4ZM407.9 589.4L409.5 590.1L406.0 598.8L404.6 598.0ZM404.6 598.0L406.0 598.8L402.9 607.4L401.8 606.6ZM401.8 606.6L402.9 607.4L400.3 615.8L399.5 615.0ZM399.5 615.0L400.3 615.8L398.3 624.3L397.8 623.4ZM397.8 623.4L398.3 624.3L396.8 632.6L396.6 631.8ZM396.6 631.8L396.8 632.6L395.9 641.0L395.9 641.0ZM395.9 641.0L395.9 641.0L395.2 651.0L395.2 651.0ZM395.2 651.0L395.2 651.0L394.6 661.0L394.6 661.0ZM433.3 544.8L435.8 545.1L430.4 554.6L427.9 554.2ZM427.9 554.2L430.4 554.6L425.1 563.9L422.8 563.4ZM422.8 563.4L425.1 563.9L420.0 573.1L417.9 572.5ZM417.9 572.5L420.0 573.1L415.5 582.0L413.5 581.4ZM413.5 581.4L415.5 582.0L411.3 590.8L409.5 590.1ZM409.5 590.1L411.3 590.8L407.5 599.5L406.0 598.8ZM406.0 598.8L407.5 599.5L404.1 608.1L402.9 607.4ZM402.9 607.4L404.1 608.1L401.3 616.7L400.3 615.8ZM400.3 615.8L401.3 616.7L398.9 625.1L398.3 624.3ZM398.3 624.3L398.9 625.1L397.2 633.5L396.8 632.6ZM396.8 632.6L397.2 633.5L395.9 641.8L395.9 641.0ZM395.9 641.0L395.9 641.8L395.2 651.0L395.2 651.0ZM395.2 651.0L395.2 651.0L394.6 661.0L394.6 661.0ZM420.0 573.1L422.3 573.6L417.5 582.6L415.5 582.0ZM415.5 582.0L417.5 582.6L413.1 591.5L411.3 590.8ZM411.3 590.8L413.1 591.5L409.1 600.3L407.5 599.5ZM407.5 599.5L409.1 600.3L405.5 608.9L404.1 608.1ZM404.1 608.1L405.5 608.9L402.4 617.5L401.3 616.7ZM401.3 616.7L402.4 617.5L399.8 625.9L398.9 625.1ZM398.9 625.1L399.8 625.9L397.7 634.3L397.2 633.5ZM397.2 633.5L397.7 634.3L396.2 642.7L395.9 641.8ZM395.9 641.8L396.2 642.7L395.2 651.0L395.2 651.0ZM395.2 651.0L395.2 651.0L394.6 661.0L394.6 661.0ZM394.6 661.0L394.6 661.0L394.0 671.0L394.0 671.0ZM405.5 608.9L407.0 609.7L403.6 618.2L402.4 617.5ZM402.4 617.5L403.6 618.2L400.7 626.8L399.8 625.9ZM399.8 625.9L400.7 626.8L398.4 635.2L397.7 634.3ZM397.7 634.3L398.4 635.2L396.6 643.6L396.2 642.7ZM396.2 642.7L396.6 643.6L395.3 651.9L395.2 651.0ZM395.2 651.0L395.3 651.9L394.6 661.0L394.6 661.0ZM394.6 661.0L394.6 661.0L394.0 671.0L394.0 671.0ZM398.4 635.2L399.2 636.0L397.1 644.4L396.6 643.6ZM396.6 643.6L397.1 644.4L395.6 652.8L395.3 651.9ZM395.3 651.9L395.6 652.8L394.6 661.1L394.6 661.0ZM394.6 661.0L394.6 661.1L394.0 671.0L394.0 671.0ZM394.0 671.0L394.0 671.0L393.3 681.0L393.3 681.0ZM491.1 453.7L493.4 453.4L489.1 464.2L486.7 464.5ZM486.7 464.5L489.1 464.2L484.4 474.9L481.9 475.2ZM481.9 475.2L484.4 474.9L479.5 485.5L476.8 485.7ZM476.8 485.7L479.5 485.5L474.3 496.0L471.5 496.1ZM471.5 496.1L474.3 496.0L468.9 506.3L466.1 506.4ZM466.1 506.4L468.9 506.3L463.4 516.5L460.6 516.5ZM460.6 516.5L463.4 516.5L457.8 526.6L455.0 526.5ZM455.0 526.5L457.8 526.6L452.2 536.5L449.4 536.3ZM449.4 536.3L452.2 536.5L446.5 546.3L443.8 546.1ZM443.8 546.1L446.5 546.3L440.8 556.1L438.1 555.8ZM438.1 555.8L440.8 556.1L435.2 565.7L432.5 565.3ZM432.5 565.3L435.2 565.7L429.6 575.1L427.1 574.7ZM427.1 574.7L429.6 575.1L424.3 584.3L422.0 583.8ZM422.0 583.8L424.3 584.3L419.4 593.4L417.2 592.8ZM417.2 592.8L419.4 593.4L414.7 602.3L412.7 601.6ZM412.7 601.6L414.7 602.3L410.4 611.1L408.6 610.4ZM408.6 610.4L410.4 611.1L406.5 619.8L405.0 619.0ZM405.0 619.0L406.5 619.8L403.1 628.4L401.9 627.6ZM401.9 627.6L403.1 628.4L400.2 636.9L399.2 636.0ZM399.2 636.0L400.2 636.9L397.8 645.3L397.1 644.4ZM397.1 644.4L397.8 645.3L396.0 653.6L395.6 652.8ZM395.6 652.8L396.0 653.6L394.7 662.0L394.6 661.1ZM394.6 661.1L394.7 662.0L394.0 671.0L394.0 671.0ZM394.0 671.0L394.0 671.0L393.3 681.0L393.3 681.0ZM479.5 485.5L482.1 485.3L477.0 495.8L474.3 496.0ZM474.3 496.0L477.0 495.8L471.7 506.2L468.9 506.3ZM468.9 506.3L471.7 506.2L466.2 516.5L463.4 516.5ZM463.4 516.5L466.2 516.5L460.6 526.6L457.8 526.6ZM457.8 526.6L460.6 526.6L455.0 536.6L452.2 536.5ZM452.2 536.5L455.0 536.6L449.3 546.5L446.5 546.3ZM446.5 546.3L449.3 546.5L443.6 556.3L440.8 556.1ZM440.8 556.1L443.6 556.3L437.9 566.0L435.2 565.7ZM435.2 565.7L437.9 566.0L432.2 575.5L429.6 575.1ZM429.6 575.1L432.2 575.5L426.8 584.8L424.3 584.3ZM424.3 584.3L426.8 584.8L421.7 593.9L419.4 593.4ZM419.4 593.4L421.7 593.9L416.8 602.9L414.7 602.3ZM414.7 602.3L416.8 602.9L412.3 611.8L410.4 611.1ZM410.4 611.1L412.3 611.8L408.2 620.5L406.5 619.8ZM406.5 619.8L408.2 620.5L404.5 629.1L403.1 628.4ZM403.1 628.4L404.5 629.1L401.3 637.7L400.2 636.9ZM400.2 636.9L401.3 637.7L398.7 646.1L397.8 645.3ZM397.8 645.3L398.7 646.1L396.5 654.5L396.0 653.6ZM396.0 653.6L396.5 654.5L394.9 662.8L394.7 662.0ZM394.7 662.0L394.9 662.8L394.0 671.1L394.0 671.0ZM394.0 671.0L394.0 671.1L393.3 681.0L393.3 681.0ZM393.3 681.0L393.3 681.0L392.7 691.0L392.7 691.0ZM460.6 526.6L463.5 526.7L457.8 536.7L455.0 536.6ZM455.0 536.6L457.8 536.7L452.2 546.7L449.3 546.5ZM449.3 546.5L452.2 546.7L446.4 556.6L443.6 556.3ZM443.6 556.3L446.4 556.6L440.6 566.3L437.9 566.0ZM437.9 566.0L440.6 566.3L434.9 575.9L432.2 575.5ZM432.2 575.5L434.9 575.9L429.4 585.3L426.8 584.8ZM426.8 584.8L429.4 585.3L424.1 594.4L421.7 593.9ZM421.7 593.9L424.1 594.4L419.0 603.5L416.8 602.9ZM416.8 602.9L419.0 603.5L414.3 612.4L412.3 611.8ZM412.3 611.8L414.3 612.4L410.0 621.2L408.2 620.5ZM408.2 620.5L410.0 621.2L406.1 629.9L404.5 629.1ZM404.5 629.1L406.1 629.9L402.6 638.5L401.3 637.7ZM401.3 637.7L402.6 638.5L399.7 647.0L398.7 646.1ZM398.7 646.1L399.7 647.0L397.2 655.4L396.5 654.5ZM396.5 654.5L397.2 655.4L395.4 663.7L394.9 662.8ZM394.9 662.8L395.4 663.7L394.1 672.0L394.0 671.1ZM394.0 671.1L394.1 672.0L393.3 681.0L393.3 681.0ZM393.3 681.0L393.3 681.0L392.7 691.0L392.7 691.0ZM446.4 556.6L449.3 556.8L443.5 566.6L440.6 566.3ZM440.6 566.3L443.5 566.6L437.6 576.3L434.9 575.9ZM434.9 575.9L437.6 576.3L432.0 585.7L429.4 585.3ZM429.4 585.3L432.0 585.7L426.5 594.9L424.1 594.4ZM424.1 594.4L426.5 594.9L421.3 604.0L419.0 603.5ZM419.0 603.5L421.3 604.0L416.5 613.0L414.3 612.4ZM414.3 612.4L416.5 613.0L411.9 621.9L410.0 621.2ZM410.0 621.2L411.9 621.9L407.8 630.6L406.1 629.9ZM406.1 629.9L407.8 630.6L404.1 639.2L402.6 638.5ZM402.6 638.5L404.1 639.2L400.8 647.8L399.7 647.0ZM399.7 647.0L400.8 647.8L398.1 656.2L397.2 655.4ZM397.2 655.4L398.1 656.2L395.9 664.6L395.4 663.7ZM395.4 663.7L395.9 664.6L394.3 672.9L394.1 672.0ZM394.1 672.0L394.3 672.9L393.3 681.2L393.3 681.0ZM393.3 681.0L393.3 681.2L392.7 691.0L392.7 691.0ZM392.7 691.0L392.7 691.0L392.0 701.0L392.0 701.0ZM432.0 585.7L434.7 586.1L429.1 595.4L426.5 594.9ZM426.5 594.9L429.1 595.4L423.8 604.6L421.3 604.0ZM421.3 604.0L423.8 604.6L418.7 613.6L416.5 613.0ZM416.5 613.0L418.7 613.6L413.9 622.5L411.9 621.9ZM411.9 621.9L413.9 622.5L409.6 631.3L407.8 630.6ZM407.8 630.6L409.6 631.3L405.6 640.0L404.1 639.2ZM404.1 639.2L405.6 640.0L402.1 648.6L400.8 647.8ZM400.8 647.8L402.1 648.6L399.1 657.0L398.1 656.2ZM398.1 656.2L399.1 657.0L396.7 665.5L395.9 664.6ZM395.9 664.6L396.7 665.5L394.8 673.8L394.3 672.9ZM394.3 672.9L394.8 673.8L393.5 682.1L393.3 681.2ZM393.3 681.2L393.5 682.1L392.7 691.0L392.7 691.0ZM392.7 691.0L392.7 691.0L392.0 701.0L392.0 701.0ZM413.9 622.5L416.1 623.2L411.5 632.0L409.6 631.3ZM409.6 631.3L411.5 632.0L407.3 640.7L405.6 640.0ZM405.6 640.0L407.3 640.7L403.6 649.3L402.1 648.6ZM402.1 648.6L403.6 649.3L400.3 657.9L399.1 657.0ZM399.1 657.0L400.3 657.9L397.6 666.3L396.7 665.5ZM396.7 665.5L397.6 666.3L395.4 674.7L394.8 673.8ZM394.8 673.8L395.4 674.7L393.7 683.0L393.5 682.1ZM393.5 682.1L393.7 683.0L392.7 691.2L392.7 691.0ZM392.7 691.0L392.7 691.2L392.0 701.0L392.0 701.0ZM392.0 701.0L392.0 701.0L391.3 711.0L391.3 711.0ZM403.6 649.3L405.2 650.1L401.6 658.7L400.3 657.9ZM400.3 657.9L401.6 658.7L398.6 667.1L397.6 666.3ZM397.6 666.3L398.6 667.1L396.1 675.5L395.4 674.7ZM395.4 674.7L396.1 675.5L394.2 683.9L393.7 683.0ZM393.7 683.0L394.2 683.9L392.8 692.2L392.7 691.2ZM392.7 691.2L392.8 692.2L392.0 701.0L392.0 701.0ZM392.0 701.0L392.0 701.0L391.3 711.0L391.3 711.0ZM391.3 711.0L391.3 711.0L390.7 721.0L390.7 721.0ZM396.1 675.5L397.0 676.4L394.8 684.8L394.2 683.9ZM394.2 683.9L394.8 684.8L393.1 693.1L392.8 692.2ZM392.8 692.2L393.1 693.1L392.0 701.3L392.0 701.0ZM392.0 701.0L392.0 701.3L391.3 711.0L391.3 711.0ZM391.3 711.0L391.3 711.0L390.7 721.0L390.7 721.0ZM492.4 494.1L494.7 493.7L490.2 504.6L487.7 504.9ZM487.7 504.9L490.2 504.6L485.4 515.3L482.8 515.6ZM482.8 515.6L485.4 515.3L480.3 526.0L477.6 526.2ZM477.6 526.2L480.3 526.0L475.0 536.5L472.2 536.6ZM472.2 536.6L475.0 536.5L469.5 546.8L466.6 546.9ZM466.6 546.9L469.5 546.8L463.9 557.2L460.9 557.2ZM460.9 557.2L463.9 557.2L458.1 567.4L455.1 567.4ZM455.1 567.4L458.1 567.4L452.2 577.5L449.2 577.3ZM449.2 577.3L452.2 577.5L446.1 587.3L443.2 587.0ZM443.2 587.0L446.1 587.3L440.2 596.9L437.3 596.6ZM437.3 596.6L440.2 596.9L434.3 606.4L431.6 606.0ZM431.6 606.0L434.3 606.4L428.7 615.7L426.0 615.2ZM426.0 615.2L428.7 615.7L423.2 624.9L420.7 624.3ZM420.7 624.3L423.2 624.9L418.0 633.9L415.7 633.3ZM415.7 633.3L418.0 633.9L413.2 642.8L411.1 642.1ZM411.1 642.1L413.2 642.8L408.7 651.6L406.9 650.8ZM406.9 650.8L408.7 651.6L404.7 660.2L403.1 659.5ZM403.1 659.5L404.7 660.2L401.1 668.8L399.8 668.0ZM399.8 668.0L401.1 668.8L398.1 677.2L397.0 676.4ZM397.0 676.4L398.1 677.2L395.5 685.6L394.8 684.8ZM394.8 684.8L395.5 685.6L393.5 694.0L393.1 693.1ZM393.1 693.1L393.5 694.0L392.1 702.2L392.0 701.3ZM392.0 701.3L392.1 702.2L391.3 711.0L391.3 711.0ZM391.3 711.0L391.3 711.0L390.7 721.0L390.7 721.0ZM390.7 721.0L390.7 721.0L390.0 731.0L390.0 731.0ZM475.0 536.5L477.8 536.3L472.3 546.7L469.5 546.8ZM469.5 546.8L472.3 546.7L466.8 557.2L463.9 557.2ZM463.9 557.2L466.8 557.2L461.1 567.5L458.1 567.4ZM458.1 567.4L461.1 567.5L455.2 577.6L452.2 577.5ZM452.2 577.5L455.2 577.6L449.1 587.5L446.1 587.3ZM446.1 587.3L449.1 587.5L443.1 597.2L440.2 596.9ZM440.2 596.9L443.1 597.2L437.2 606.7L434.3 606.4ZM434.3 606.4L437.2 606.7L431.4 616.1L428.7 615.7ZM428.7 615.7L431.4 616.1L425.8 625.4L423.2 624.9ZM423.2 624.9L425.8 625.4L420.4 634.5L418.0 633.9ZM418.0 633.9L420.4 634.5L415.4 643.4L413.2 642.8ZM413.2 642.8L415.4 643.4L410.7 652.3L408.7 651.6ZM408.7 651.6L410.7 652.3L406.4 661.0L404.7 660.2ZM404.7 660.2L406.4 661.0L402.6 669.6L401.1 668.8ZM401.1 668.8L402.6 669.6L399.3 678.1L398.1 677.2ZM398.1 677.2L399.3 678.1L396.5 686.5L395.5 685.6ZM395.5 685.6L396.5 686.5L394.2 694.8L393.5 694.0ZM393.5 694.0L394.2 694.8L392.5 703.1L392.1 702.2ZM392.1 702.2L392.5 703.1L391.3 711.4L391.3 711.0ZM391.3 711.0L391.3 711.4L390.7 721.0L390.7 721.0ZM390.7 721.0L390.7 721.0L390.0 731.0L390.0 731.0ZM461.1 567.5L464.1 567.5L458.2 577.7L455.2 577.6ZM455.2 577.6L458.2 577.7L452.1 587.6L449.1 587.5ZM449.1 587.5L452.1 587.6L446.1 597.4L443.1 597.2ZM443.1 597.2L446.1 597.4L440.0 607.0L437.2 606.7ZM437.2 606.7L440.0 607.0L434.1 616.5L431.4 616.1ZM431.4 616.1L434.1 616.5L428.4 625.8L425.8 625.4ZM425.8 625.4L428.4 625.8L422.9 635.0L420.4 634.5ZM420.4 634.5L422.9 635.0L417.7 644.0L415.4 643.4ZM415.4 643.4L417.7 644.0L412.8 652.9L410.7 652.3ZM410.7 652.3L412.8 652.9L408.3 661.7L406.4 661.0ZM406.4 661.0L408.3 661.7L404.2 670.3L402.6 669.6ZM402.6 669.6L404.2 670.3L400.6 678.9L399.3 678.1ZM399.3 678.1L400.6 678.9L397.5 687.3L396.5 686.5ZM396.5 686.5L397.5 687.3L394.9 695.7L394.2 694.8ZM394.2 694.8L394.9 695.7L392.9 704.0L392.5 703.1ZM392.5 703.1L392.9 704.0L391.5 712.3L391.3 711.4ZM391.3 711.4L391.5 712.3L390.7 721.0L390.7 721.0ZM390.7 721.0L390.7 721.0L390.0 731.0L390.0 731.0ZM390.0 731.0L390.0 731.0L389.3 741.0L389.3 741.0ZM446.1 597.4L449.1 597.6L443.0 607.3L440.0 607.0ZM440.0 607.0L443.0 607.3L437.0 616.9L434.1 616.5ZM434.1 616.5L437.0 616.9L431.2 626.2L428.4 625.8ZM428.4 625.8L431.2 626.2L425.5 635.5L422.9 635.0ZM422.9 635.0L425.5 635.5L420.1 644.6L417.7 644.0ZM417.7 644.0L420.1 644.6L415.1 653.6L412.8 652.9ZM412.8 652.9L415.1 653.6L410.3 662.4L408.3 661.7ZM408.3 661.7L410.3 662.4L406.0 671.1L404.2 670.3ZM404.2 670.3L406.0 671.1L402.1 679.7L400.6 678.9ZM400.6 678.9L402.1 679.7L398.8 688.2L397.5 687.3ZM397.5 687.3L398.8 688.2L395.9 696.6L394.9 695.7ZM394.9 695.7L395.9 696.6L393.6 704.9L392.9 704.0ZM392.9 704.0L393.6 704.9L391.8 713.2L391.5 712.3ZM391.5 712.3L391.8 713.2L390.7 721.4L390.7 721.0ZM390.7 721.0L390.7 721.4L390.0 731.0L390.0 731.0ZM390.0 731.0L390.0 731.0L389.3 741.0L389.3 741.0ZM431.2 626.2L434.0 626.6L428.2 636.0L425.5 635.5ZM425.5 635.5L428.2 636.0L422.7 645.1L420.1 644.6ZM420.1 644.6L422.7 645.1L417.4 654.2L415.1 653.6ZM415.1 653.6L417.4 654.2L412.5 663.0L410.3 662.4ZM410.3 662.4L412.5 663.0L407.9 671.8L406.0 671.1ZM406.0 671.1L407.9 671.8L403.8 680.5L402.1 679.7ZM402.1 679.7L403.8 680.5L400.1 689.0L398.8 688.2ZM398.8 688.2L400.1 689.0L397.0 697.5L395.9 696.6ZM395.9 696.6L397.0 697.5L394.4 705.8L393.6 704.9ZM393.6 704.9L394.4 705.8L392.3 714.1L391.8 713.2ZM391.8 713.2L392.3 714.1L390.8 722.4L390.7 721.4ZM390.7 721.4L390.8 722.4L390.0 731.0L390.0 731.0ZM390.0 731.0L390.0 731.0L389.3 741.0L389.3 741.0ZM389.3 741.0L389.3 741.0L389.0 751.0L389.0 751.0ZM412.5 663.0L414.7 663.7L409.9 672.5L407.9 671.8ZM407.9 671.8L409.9 672.5L405.6 681.2L403.8 680.5ZM403.8 680.5L405.6 681.2L401.7 689.8L400.1 689.0ZM400.1 689.0L401.7 689.8L398.2 698.3L397.0 697.5ZM397.0 697.5L398.2 698.3L395.3 706.7L394.4 705.8ZM394.4 705.8L395.3 706.7L393.0 715.0L392.3 714.1ZM392.3 714.1L393.0 715.0L391.2 723.3L390.8 722.4ZM390.8 722.4L391.2 723.3L390.0 731.5L390.0 731.0ZM390.0 731.0L390.0 731.5L389.3 741.0L389.3 741.0ZM389.3 741.0L389.3 741.0L389.0 751.0L389.0 751.0ZM401.7 689.8L403.3 690.6L399.6 699.1L398.2 698.3ZM398.2 698.3L399.6 699.1L396.4 707.6L395.3 706.7ZM395.3 706.7L396.4 707.6L393.8 715.9L393.0 715.0ZM393.0 715.0L393.8 715.9L391.7 724.2L391.2 723.3ZM391.2 723.3L391.7 724.2L390.2 732.4L390.0 731.5ZM390.0 731.5L390.2 732.4L389.3 741.0L389.3 741.0ZM389.3 741.0L389.3 741.0L389.0 751.0L389.0 751.0ZM389.0 751.0L389.0 751.0L389.0 761.0L389.0 761.0ZM393.8 715.9L394.7 716.8L392.3 725.1L391.7 724.2ZM391.7 724.2L392.3 725.1L390.5 733.4L390.2 732.4ZM390.2 732.4L390.5 733.4L389.4 741.6L389.3 741.0ZM389.3 741.0L389.4 741.6L389.0 751.0L389.0 751.0ZM389.0 751.0L389.0 751.0L389.0 761.0L389.0 761.0ZM493.6 534.5L496.0 534.1L491.4 545.0L488.8 545.3ZM488.8 545.3L491.4 545.0L486.8 555.9L484.1 556.2ZM484.1 556.2L486.8 555.9L481.8 566.7L478.9 566.9ZM478.9 566.9L481.8 566.7L476.4 577.4L473.4 577.5ZM473.4 577.5L476.4 577.4L470.5 587.8L467.4 587.8ZM467.4 587.8L470.5 587.8L464.4 598.0L461.3 598.0ZM461.3 598.0L464.4 598.0L458.2 608.1L455.1 608.0ZM455.1 608.0L458.2 608.1L452.0 618.0L448.9 617.9ZM448.9 617.9L452.0 618.0L445.8 627.8L442.8 627.6ZM442.8 627.6L445.8 627.8L439.7 637.5L436.7 637.1ZM436.7 637.1L439.7 637.5L433.6 646.9L430.8 646.5ZM430.8 646.5L433.6 646.9L427.7 656.2L425.0 655.8ZM425.0 655.8L427.7 656.2L422.1 665.4L419.5 664.9ZM419.5 664.9L422.1 665.4L416.8 674.4L414.4 673.8ZM414.4 673.8L416.8 674.4L411.7 683.3L409.6 682.6ZM409.6 682.6L411.7 683.3L407.1 692.1L405.2 691.3ZM405.2 691.3L407.1 692.1L402.9 700.7L401.2 699.9ZM401.2 699.9L402.9 700.7L399.1 709.3L397.7 708.4ZM397.7 708.4L399.1 709.3L395.9 717.7L394.7 716.8ZM394.7 716.8L395.9 717.7L393.2 726.0L392.3 725.1ZM392.3 725.1L393.2 726.0L391.1 734.3L390.5 733.4ZM390.5 733.4L391.1 734.3L389.6 742.5L389.4 741.6ZM389.4 741.6L389.6 742.5L389.0 751.0L389.0 751.0ZM389.0 751.0L389.0 751.0L389.0 761.0L389.0 761.0ZM389.0 761.0L389.0 761.0L389.0 771.0L389.0 771.0ZM476.4 577.4L479.3 577.2L473.5 587.6L470.5 587.8ZM470.5 587.8L473.5 587.6L467.5 598.0L464.4 598.0ZM464.4 598.0L467.5 598.0L461.4 608.1L458.2 608.1ZM458.2 608.1L461.4 608.1L455.1 618.2L452.0 618.0ZM452.0 618.0L455.1 618.2L448.9 628.0L445.8 627.8ZM445.8 627.8L448.9 628.0L442.7 637.7L439.7 637.5ZM439.7 637.5L442.7 637.7L436.5 647.3L433.6 646.9ZM433.6 646.9L436.5 647.3L430.6 656.7L427.7 656.2ZM427.7 656.2L430.6 656.7L424.8 665.9L422.1 665.4ZM422.1 665.4L424.8 665.9L419.2 675.0L416.8 674.4ZM416.8 674.4L419.2 675.0L414.0 683.9L411.7 683.3ZM411.7 683.3L414.0 683.9L409.2 692.8L407.1 692.1ZM407.1 692.1L409.2 692.8L404.7 701.5L402.9 700.7ZM402.9 700.7L404.7 701.5L400.7 710.1L399.1 709.3ZM399.1 709.3L400.7 710.1L397.2 718.5L395.9 717.7ZM395.9 717.7L397.2 718.5L394.2 726.9L393.2 726.0ZM393.2 726.0L394.2 726.9L391.7 735.2L391.1 734.3ZM391.1 734.3L391.7 735.2L389.9 743.5L389.6 742.5ZM389.6 742.5L389.9 743.5L389.0 751.6L389.0 751.0ZM389.0 751.0L389.0 751.6L389.0 761.0L389.0 761.0ZM389.0 761.0L389.0 761.0L389.0 771.0L389.0 771.0ZM461.4 608.1L464.5 608.1L458.3 618.2L455.1 618.2ZM455.1 618.2L458.3 618.2L452.0 628.2L448.9 628.0ZM448.9 628.0L452.0 628.2L445.7 638.0L442.7 637.7ZM442.7 637.7L445.7 638.0L439.5 647.6L436.5 647.3ZM436.5 647.3L439.5 647.6L433.4 657.1L430.6 656.7ZM430.6 656.7L433.4 657.1L427.5 666.4L424.8 665.9ZM424.8 665.9L427.5 666.4L421.8 675.5L419.2 675.0ZM419.2 675.0L421.8 675.5L416.4 684.6L414.0 683.9ZM414.0 683.9L416.4 684.6L411.4 693.4L409.2 692.8ZM409.2 692.8L411.4 693.4L406.7 702.2L404.7 701.5ZM404.7 701.5L406.7 702.2L402.4 710.9L400.7 710.1ZM400.7 710.1L402.4 710.9L398.6 719.4L397.2 718.5ZM397.2 718.5L398.6 719.4L395.3 727.8L394.2 726.9ZM394.2 726.9L395.3 727.8L392.6 736.1L391.7 735.2ZM391.7 735.2L392.6 736.1L390.4 744.4L389.9 743.5ZM389.9 743.5L390.4 744.4L389.2 752.6L389.0 751.6ZM389.0 751.6L389.2 752.6L389.0 761.0L389.0 761.0ZM389.0 761.0L389.0 761.0L389.0 771.0L389.0 771.0ZM445.7 638.0L448.8 638.2L442.6 647.9L439.5 647.6ZM439.5 647.6L442.6 647.9L436.4 657.4L433.4 657.1ZM433.4 657.1L436.4 657.4L430.4 666.8L427.5 666.4ZM427.5 666.4L430.4 666.8L424.5 676.1L421.8 675.5ZM421.8 675.5L424.5 676.1L419.0 685.1L416.4 684.6ZM416.4 684.6L419.0 685.1L413.7 694.1L411.4 693.4ZM411.4 693.4L413.7 694.1L408.8 702.9L406.7 702.2ZM406.7 702.2L408.8 702.9L404.3 711.6L402.4 710.9ZM402.4 710.9L404.3 711.6L400.2 720.2L398.6 719.4ZM398.6 719.4L400.2 720.2L396.7 728.7L395.3 727.8ZM395.3 727.8L396.7 728.7L393.6 737.0L392.6 736.1ZM392.6 736.1L393.6 737.0L391.1 745.3L390.4 744.4ZM390.4 744.4L391.1 745.3L389.6 753.5L389.2 752.6ZM389.2 752.6L389.6 753.5L389.0 761.7L389.0 761.0ZM389.0 761.0L389.0 761.7L389.0 771.0L389.0 771.0ZM424.5 676.1L427.3 676.5L421.6 685.7L419.0 685.1ZM419.0 685.1L421.6 685.7L416.1 694.7L413.7 694.1ZM413.7 694.1L416.1 694.7L411.0 703.6L408.8 702.9ZM408.8 702.9L411.0 703.6L406.3 712.4L404.3 711.6ZM404.3 711.6L406.3 712.4L402.0 721.0L400.2 720.2ZM400.2 720.2L402.0 721.0L398.1 729.5L396.7 728.7ZM396.7 728.7L398.1 729.5L394.8 737.9L393.6 737.0ZM393.6 737.0L394.8 737.9L392.0 746.2L391.1 745.3ZM391.1 745.3L392.0 746.2L390.2 754.5L389.6 753.5ZM389.6 753.5L390.2 754.5L389.3 762.6L389.0 761.7ZM389.0 761.7L389.3 762.6L389.0 771.0L389.0 771.0ZM411.0 703.6L413.4 704.2L408.4 713.1L406.3 712.4ZM406.3 712.4L408.4 713.1L403.9 721.8L402.0 721.0ZM402.0 721.0L403.9 721.8L399.8 730.3L398.1 729.5ZM398.1 729.5L399.8 730.3L396.1 738.8L394.8 737.9ZM394.8 737.9L396.1 738.8L393.1 747.2L392.0 746.2ZM392.0 746.2L393.1 747.2L390.9 755.4L390.2 754.5ZM390.2 754.5L390.9 755.4L389.6 763.6L389.3 762.6ZM389.3 762.6L389.6 763.6L389.1 771.8L389.0 771.0ZM399.8 730.3L401.5 731.1L397.6 739.6L396.1 738.8ZM396.1 738.8L397.6 739.6L394.3 748.0L393.1 747.2ZM393.1 747.2L394.3 748.0L391.8 756.3L390.9 755.4ZM390.9 755.4L391.8 756.3L390.2 764.5L389.6 763.6ZM389.6 763.6L390.2 764.5L389.3 772.7L389.1 771.8ZM391.8 756.3L392.8 757.2L390.9 765.5L390.2 764.5ZM390.2 764.5L390.9 765.5L389.7 773.7L389.3 772.7ZM490.9 586.1L493.6 585.7L488.4 596.5L485.5 596.9ZM485.5 596.9L488.4 596.5L482.8 607.2L479.8 607.5ZM479.8 607.5L482.8 607.2L477.0 617.8L473.9 618.0ZM473.9 618.0L477.0 617.8L470.9 628.2L467.8 628.3ZM467.8 628.3L470.9 628.2L464.7 638.5L461.5 638.5ZM461.5 638.5L464.7 638.5L458.3 648.6L455.1 648.6ZM455.1 648.6L458.3 648.6L451.9 658.6L448.8 658.4ZM448.8 658.4L451.9 658.6L445.5 668.4L442.4 668.2ZM442.4 668.2L445.5 668.4L439.2 678.0L436.1 677.7ZM436.1 677.7L439.2 678.0L433.0 687.5L430.0 687.1ZM430.0 687.1L433.0 687.5L426.9 696.8L424.1 696.3ZM424.1 696.3L426.9 696.8L421.1 706.0L418.4 705.5ZM418.4 705.5L421.1 706.0L415.6 715.0L413.1 714.4ZM413.1 714.4L415.6 715.0L410.3 723.9L408.0 723.2ZM408.0 723.2L410.3 723.9L405.5 732.7L403.4 731.9ZM403.4 731.9L405.5 732.7L401.1 741.3L399.3 740.5ZM399.3 740.5L401.1 741.3L397.1 749.8L395.6 748.9ZM395.6 748.9L397.1 749.8L394.0 758.1L392.8 757.2ZM392.8 757.2L394.0 758.1L391.8 766.4L390.9 765.5ZM390.9 765.5L391.8 766.4L390.2 774.6L389.7 773.7ZM477.0 617.8L480.0 617.6L474.0 628.1L470.9 628.2ZM470.9 628.2L474.0 628.1L467.9 638.5L464.7 638.5ZM464.7 638.5L467.9 638.5L461.6 648.7L458.3 648.6ZM458.3 648.6L461.6 648.7L455.1 658.7L451.9 658.6ZM451.9 658.6L455.1 658.7L448.7 668.6L445.5 668.4ZM445.5 668.4L448.7 668.6L442.3 678.3L439.2 678.0ZM439.2 678.0L442.3 678.3L436.0 687.9L433.0 687.5ZM433.0 687.5L436.0 687.9L429.8 697.2L426.9 696.8ZM426.9 696.8L429.8 697.2L423.9 706.5L421.1 706.0ZM421.1 706.0L423.9 706.5L418.2 715.6L415.6 715.0ZM415.6 715.0L418.2 715.6L412.7 724.6L410.3 723.9ZM410.3 723.9L412.7 724.6L407.7 733.4L405.5 732.7ZM405.5 732.7L407.7 733.4L403.0 742.1L401.1 741.3ZM401.1 741.3L403.0 742.1L398.8 750.6L397.1 749.8ZM397.1 749.8L398.8 750.6L395.4 759.0L394.0 758.1ZM394.0 758.1L395.4 759.0L392.9 767.3L391.8 766.4ZM391.8 766.4L392.9 767.3L391.0 775.5L390.2 774.6ZM461.6 648.7L464.8 648.7L458.4 658.8L455.1 658.7ZM455.1 658.7L458.4 658.8L451.9 668.7L448.7 668.6ZM448.7 668.6L451.9 668.7L445.5 678.5L442.3 678.3ZM442.3 678.3L445.5 678.5L439.1 688.2L436.0 687.9ZM436.0 687.9L439.1 688.2L432.8 697.6L429.8 697.2ZM429.8 697.2L432.8 697.6L426.7 707.0L423.9 706.5ZM423.9 706.5L426.7 707.0L420.9 716.2L418.2 715.6ZM418.2 715.6L420.9 716.2L415.3 725.2L412.7 724.6ZM412.7 724.6L415.3 725.2L410.0 734.1L407.7 733.4ZM407.7 733.4L410.0 734.1L405.1 742.8L403.0 742.1ZM403.0 742.1L405.1 742.8L400.6 751.4L398.8 750.6ZM398.8 750.6L400.6 751.4L396.9 759.9L395.4 759.0ZM395.4 759.0L396.9 759.9L394.1 768.2L392.9 767.3ZM392.9 767.3L394.1 768.2L391.9 776.4L391.0 775.5ZM445.5 678.5L448.7 678.7L442.2 688.4L439.1 688.2ZM439.1 688.2L442.2 688.4L435.9 698.0L432.8 697.6ZM432.8 697.6L435.9 698.0L429.7 707.4L426.7 707.0ZM426.7 707.0L429.7 707.4L423.7 716.7L420.9 716.2ZM420.9 716.2L423.7 716.7L417.9 725.8L415.3 725.2ZM415.3 725.2L417.9 725.8L412.4 734.7L410.0 734.1ZM410.0 734.1L412.4 734.7L407.3 743.5L405.1 742.8ZM405.1 742.8L407.3 743.5L402.6 752.2L400.6 751.4ZM400.6 751.4L402.6 752.2L398.6 760.7L396.9 759.9ZM396.9 759.9L398.6 760.7L395.5 769.1L394.1 768.2ZM394.1 768.2L395.5 769.1L393.0 777.4L391.9 776.4ZM423.7 716.7L426.6 717.2L420.6 726.3L417.9 725.8ZM417.9 725.8L420.6 726.3L415.0 735.4L412.4 734.7ZM412.4 734.7L415.0 735.4L409.7 744.2L407.3 743.5ZM407.3 743.5L409.7 744.2L404.7 753.0L402.6 752.2ZM402.6 752.2L404.7 753.0L400.5 761.5L398.6 760.7ZM398.6 760.7L400.5 761.5L397.0 769.9L395.5 769.1ZM395.5 769.1L397.0 769.9L394.2 778.3L393.0 777.4ZM409.7 744.2L412.1 744.9L407.0 753.7L404.7 753.0ZM404.7 753.0L407.0 753.7L402.5 762.3L400.5 761.5ZM400.5 761.5L402.5 762.3L398.7 770.8L397.0 769.9ZM397.0 769.9L398.7 770.8L395.6 779.1L394.2 778.3ZM398.7 770.8L400.6 771.6L397.1 780.0L395.6 779.1Z" fill="#189818" stroke="#189818" stroke-width="0.5"/>
<path d="M520.1 481.0L520.1 481.0L520.4 491.0L520.4 491.0ZM515.8 630.9L517.5 630.2L514.3 641.6L512.3 642.3ZM474.1 780.1L477.5 779.9L470.8 790.3L467.3 790.4ZM524.9 677.0L525.9 676.2L524.2 687.8L522.8 688.7ZM531.3 722.4L531.5 721.5L531.6 733.3L531.1 734.3ZM474.1 485.9L476.8 485.7L471.5 496.1L468.8 496.2ZM512.7 385.5L513.5 384.8L511.9 396.1L510.9 396.7ZM488.5 535.2L491.1 534.9L486.2 545.6L483.5 545.9ZM517.6 432.0L517.7 431.3L518.0 442.7L517.6 443.4ZM503.7 583.8L505.9 583.2L501.6 594.4L499.1 594.9Z" fill="#94ff94" stroke="#94ff94" stroke-width="0.5"/>
<path d="M520.4 491.0L520.4 491.0L520.8 501.0L520.8 501.0ZM517.6 443.4L518.0 442.7L517.7 454.1L517.1 454.8Z" fill="#6bf96b" stroke="#6bf96b" stroke-width="0.5"/>
<path d="M520.8 501.0L520.8 501.0L521.1 511.7L520.9 512.5ZM509.0 407.9L510.2 407.3L508.3 418.6L506.8 419.1ZM517.1 454.8L517.7 454.1L516.7 465.5L515.9 466.2Z" fill="#39eb39" stroke="#39eb39" stroke-width="0.5"/>
<path d="M520.9 512.5L521.1 511.7L521.0 523.2L520.5 524.0ZM520.8 567.1L521.8 566.3L520.0 577.8L518.7 578.6ZM524.9 573.1L525.2 572.2L524.8 583.9L524.2 584.7ZM503.8 664.9L506.3 664.3L501.5 675.5L498.8 676.0ZM525.0 561.0L525.0 561.0L525.4 571.0L525.4 571.0ZM526.3 612.9L526.6 612.1L526.2 623.7L525.7 624.6ZM503.8 725.9L506.4 725.3L501.5 736.6L498.6 737.1ZM527.0 621.0L527.0 621.0L527.4 631.0L527.4 631.0ZM517.3 711.9L519.2 711.1L515.9 722.7L513.7 723.4ZM505.7 766.2L508.4 765.6L503.1 776.8L500.2 777.3ZM528.4 661.0L528.4 661.0L528.7 671.0L528.7 671.0ZM528.4 757.9L529.5 757.0L527.1 768.7L525.7 769.6ZM530.3 701.0L530.3 701.0L530.9 711.0L530.9 711.0ZM505.7 379.1L507.1 378.6L504.3 389.6L502.7 390.2ZM496.7 432.3L498.7 431.8L495.1 442.8L492.9 443.2ZM457.8 516.5L460.6 516.5L455.0 526.5L452.2 526.4ZM506.8 419.1L508.3 418.6L505.9 429.8L504.2 430.3ZM498.5 472.7L500.6 472.2L496.7 483.2L494.4 483.7ZM513.5 426.1L514.4 425.5L513.2 436.8L512.1 437.5ZM515.5 371.0L515.5 371.0L515.5 381.0L515.5 381.0ZM508.4 480.1L510.0 479.5L507.1 490.7L505.2 491.3ZM473.0 567.3L476.0 567.1L470.4 577.6L467.3 577.7ZM515.9 466.2L516.7 465.5L515.3 476.9L514.1 477.6ZM510.0 520.3L511.6 519.6L508.6 530.9L506.7 531.5ZM519.4 472.6L519.6 471.9L519.4 483.3L518.9 484.0ZM517.3 526.9L518.3 526.2L516.6 537.6L515.4 538.3ZM488.8 616.7L491.7 616.4L486.2 627.2L483.2 627.5Z" fill="#2ce62c" stroke="#2ce62c" stroke-width="0.5"/>
<path d="M520.5 524.0L521.0 523.2L520.4 534.7L519.7 535.4ZM497.7 635.7L500.3 635.2L495.2 646.2L492.4 646.6ZM517.6 589.3L519.1 588.6L516.4 600.1L514.7 600.8ZM522.0 531.0L522.0 531.0L523.0 541.0L523.0 541.6ZM498.8 676.0L501.5 675.5L496.4 686.5L493.5 687.0ZM523.8 595.5L524.6 594.7L523.3 606.3L522.3 607.1ZM446.0 780.0L449.5 780.2L442.8 789.8L439.4 789.5ZM525.4 571.0L525.4 571.0L525.7 581.0L525.7 581.4ZM511.6 683.1L513.7 682.4L509.7 693.8L507.3 694.5ZM525.3 635.4L526.0 634.5L524.8 646.2L523.8 647.0ZM513.7 723.4L515.9 722.7L512.0 734.1L509.5 734.8ZM527.7 641.0L527.7 641.0L528.0 651.9L527.7 652.7ZM523.9 729.6L525.4 728.7L522.9 740.4L521.1 741.2ZM529.1 681.0L529.1 681.0L529.6 691.7L529.4 692.6ZM525.7 769.6L527.1 768.7L524.1 780.3L522.4 781.2ZM452.2 485.8L454.9 486.0L449.5 495.8L446.8 495.6ZM502.7 390.2L504.3 389.6L501.1 400.6L499.3 401.1ZM452.2 526.4L455.0 526.5L449.4 536.3L446.6 536.1ZM504.2 430.3L505.9 429.8L503.0 441.0L501.2 441.5ZM466.4 536.8L469.3 536.7L463.7 546.9L460.8 546.9ZM512.1 437.5L513.2 436.8L511.5 448.1L510.1 448.8ZM467.3 577.7L470.4 577.6L464.3 587.9L461.3 587.9ZM503.7 501.9L505.6 501.4L502.0 512.5L499.9 513.0ZM514.1 477.6L515.3 476.9L513.3 488.3L511.9 488.9ZM482.4 587.0L485.3 586.8L479.7 597.4L476.7 597.6ZM505.2 542.1L507.2 541.6L504.0 552.8L501.8 553.4ZM518.9 484.0L519.4 483.3L518.7 494.8L518.0 495.5ZM483.2 627.5L486.2 627.2L480.4 637.8L477.3 638.0ZM514.9 549.1L516.4 548.4L514.4 559.9L512.7 560.6Z" fill="#2ae22a" stroke="#2ae22a" stroke-width="0.5"/>
<path d="M519.7 535.4L520.4 534.7L519.8 546.2L518.8 547.0ZM493.5 687.0L496.4 686.5L490.8 697.5L487.8 697.9ZM524.8 583.9L525.2 583.0L524.6 594.7L523.8 595.5ZM525.7 581.4L525.7 581.0L525.9 592.2L525.6 593.0ZM509.5 734.8L512.0 734.1L507.5 745.5L504.8 746.1ZM527.4 631.0L527.4 631.0L527.7 641.0L527.7 641.0ZM489.0 393.1L491.2 392.8L486.9 403.4L484.6 403.7ZM499.3 401.1L501.1 400.6L497.7 411.6L495.8 412.0ZM446.6 536.1L449.4 536.3L443.8 546.1L441.0 545.8ZM501.2 441.5L503.0 441.0L499.8 452.1L497.7 452.5ZM510.1 448.8L511.5 448.1L509.2 459.4L507.6 460.0ZM461.3 587.9L464.3 587.9L458.2 598.0L455.1 597.9ZM507.1 490.7L508.8 490.2L505.6 501.4L503.7 501.9ZM511.9 488.9L513.3 488.3L510.8 499.6L509.2 500.2ZM477.3 638.0L480.4 637.8L474.3 648.3L471.2 648.5ZM516.6 537.6L517.8 536.9L516.4 548.4L514.9 549.1Z" fill="#29de29" stroke="#29de29" stroke-width="0.5"/>
<path d="M518.8 547.0L519.8 546.2L518.7 557.8L517.4 558.5ZM521.8 532.4L522.0 531.6L522.5 543.1L522.0 543.9ZM471.7 689.0L474.9 688.8L468.5 699.2L465.2 699.3ZM521.5 587.1L522.6 586.3L520.7 597.9L519.4 598.6ZM487.8 697.9L490.8 697.5L485.1 708.3L481.9 708.6ZM525.6 593.0L525.9 592.2L525.5 603.8L524.9 604.6ZM525.7 581.0L525.7 581.0L526.0 591.0L526.0 591.0ZM489.5 738.4L492.6 738.0L486.7 748.9L483.4 749.2ZM527.0 632.8L527.3 632.0L527.0 643.7L526.4 644.5ZM518.6 732.0L520.5 731.2L517.1 742.8L514.9 743.5ZM520.3 772.0L522.2 771.2L518.4 782.7L516.2 783.5ZM484.6 403.7L486.9 403.4L482.6 414.0L480.2 414.2ZM486.0 444.2L488.3 443.9L483.9 454.7L481.4 454.9ZM441.0 545.8L443.8 546.1L438.1 555.8L435.5 555.4ZM497.7 452.5L499.8 452.1L496.0 463.1L493.8 463.5ZM508.0 439.3L509.5 438.7L507.1 450.0L505.4 450.5ZM440.3 586.8L443.2 587.0L437.3 596.6L434.5 596.2ZM499.2 492.8L501.3 492.4L497.3 503.4L495.0 503.8ZM455.1 597.9L458.2 598.0L452.1 607.9L449.0 607.8ZM509.2 500.2L510.8 499.6L507.8 510.8L506.0 511.4ZM516.7 486.2L517.6 485.5L516.1 496.9L514.9 497.6ZM455.1 638.4L458.3 638.5L452.0 648.5L448.8 648.3ZM510.8 540.3L512.4 539.7L510.0 551.1L508.1 551.7ZM471.2 648.5L474.3 648.3L468.1 658.7L464.8 658.8Z" fill="#27da27" stroke="#27da27" stroke-width="0.5"/>
<path d="M517.4 558.5L518.7 557.8L516.9 569.3L515.3 570.0ZM521.6 521.0L521.6 521.0L522.0 531.6L521.8 532.4ZM465.2 699.3L468.5 699.2L462.1 709.5L458.7 709.5ZM519.4 598.6L520.7 597.9L518.3 609.4L516.8 610.1ZM483.4 749.2L486.7 748.9L480.4 759.6L477.0 759.9ZM526.4 644.5L527.0 643.7L526.1 655.3L525.2 656.2ZM521.6 720.4L523.3 719.6L520.5 731.2L518.6 732.0ZM530.6 766.0L531.4 765.1L529.7 776.8L528.5 777.7ZM467.6 404.8L470.1 404.7L465.2 414.9L462.7 414.9ZM480.2 414.2L482.6 414.0L478.0 424.6L475.5 424.8ZM481.4 454.9L483.9 454.7L479.1 465.3L476.4 465.5ZM508.5 388.0L509.8 387.4L507.3 398.5L505.9 399.1ZM493.8 463.5L496.0 463.1L491.8 474.0L489.4 474.3ZM510.2 428.0L511.4 427.4L509.5 438.7L508.0 439.3ZM434.5 596.2L437.3 596.6L431.6 606.0L428.9 605.5ZM495.0 503.8L497.3 503.4L493.0 514.3L490.5 514.7ZM515.8 434.8L516.4 434.1L515.7 445.5L514.8 446.2ZM506.0 511.4L507.8 510.8L504.4 522.0L502.4 522.5ZM517.9 474.8L518.5 474.1L517.6 485.5L516.7 486.2ZM448.8 648.3L452.0 648.5L445.6 658.3L442.5 658.0ZM508.1 551.7L510.0 551.1L506.9 562.4L504.8 563.0ZM520.1 481.1L520.1 481.0L520.4 491.8L520.2 492.5Z" fill="#25d525" stroke="#25d525" stroke-width="0.5"/>
<path d="M515.3 570.0L516.9 569.3L513.9 580.7L512.1 581.4ZM521.2 511.0L521.2 511.0L521.6 521.0L521.6 521.0ZM458.7 709.5L462.1 709.5L455.5 719.6L452.1 719.5ZM523.7 616.3L524.6 615.4L523.0 627.1L521.9 627.9ZM477.0 759.9L480.4 759.6L473.9 770.1L470.4 770.3ZM525.2 656.2L526.1 655.3L524.5 667.0L523.4 667.8ZM524.1 708.7L525.4 707.9L523.3 719.6L521.6 720.4ZM526.7 748.8L528.0 747.9L525.6 759.6L523.9 760.5ZM532.0 754.2L532.5 753.2L531.4 765.1L530.6 766.0ZM475.5 424.8L478.0 424.6L473.2 435.1L470.6 435.2ZM430.0 564.9L432.5 565.3L427.1 574.7L424.6 574.2ZM489.4 474.3L491.8 474.0L487.2 484.7L484.7 485.0ZM511.9 416.7L512.9 416.1L511.4 427.4L510.2 428.0ZM428.9 605.5L431.6 606.0L426.0 615.2L423.5 614.7ZM502.4 522.5L504.4 522.0L500.6 533.1L498.3 533.6ZM518.6 463.4L519.0 462.6L518.5 474.1L517.9 474.8ZM442.5 658.0L445.6 658.3L439.3 667.9L436.3 667.6Z" fill="#23cf23" stroke="#23cf23" stroke-width="0.5"/>
<path d="M512.1 581.4L513.9 580.7L510.5 592.1L508.4 592.7ZM469.3 729.7L472.7 729.6L466.1 740.0L462.7 740.0ZM523.0 541.0L523.0 541.0L524.1 551.0L524.1 551.0ZM521.9 627.9L523.0 627.1L520.9 638.6L519.5 639.4ZM487.6 779.1L490.9 778.7L484.5 789.4L481.2 789.7ZM528.5 737.0L529.5 736.1L528.0 747.9L526.7 748.8ZM469.9 394.8L472.4 394.7L467.6 404.8L465.1 404.8ZM483.5 444.5L486.0 444.2L481.4 454.9L478.8 455.1ZM424.6 574.2L427.1 574.7L422.0 583.8L419.7 583.2ZM484.7 485.0L487.2 484.7L482.3 495.4L479.7 495.6ZM497.0 493.3L499.2 492.8L495.0 503.8L492.7 504.2ZM436.8 627.0L439.8 627.3L433.8 636.8L431.0 636.4ZM515.7 445.5L516.5 444.8L515.5 456.2L514.4 456.9ZM498.3 533.6L500.6 533.1L496.3 544.1L493.9 544.6ZM451.9 678.9L455.2 679.0L448.6 688.9L445.4 688.7ZM520.4 491.8L520.4 491.0L520.5 502.5L520.2 503.2Z" fill="#20c820" stroke="#20c820" stroke-width="0.5"/>
<path d="M508.4 592.7L510.5 592.1L506.6 603.3L504.3 603.9ZM462.7 740.0L466.1 740.0L459.4 750.2L455.9 750.1ZM519.5 639.4L520.9 638.6L518.2 650.2L516.5 650.9ZM529.7 725.2L530.4 724.3L529.5 736.1L528.5 737.0ZM452.4 394.5L454.9 394.6L450.2 404.3L447.8 404.1ZM465.5 445.5L468.2 445.5L463.0 455.7L460.3 455.7ZM419.7 583.2L422.0 583.8L417.2 592.8L415.1 592.1ZM479.7 495.6L482.3 495.4L477.2 505.9L474.5 506.1ZM514.2 394.1L514.7 393.5L513.9 404.8L513.1 405.4ZM431.0 636.4L433.8 636.8L428.0 646.1L425.3 645.6ZM493.9 544.6L496.3 544.1L492.1 555.2L489.5 555.6ZM518.3 441.0L518.3 441.0L518.9 451.2L518.8 451.9ZM445.4 688.7L448.6 688.9L442.1 698.6L439.0 698.3Z" fill="#1fc11f" stroke="#1fc11f" stroke-width="0.5"/>
<path d="M504.3 603.9L506.6 603.3L502.2 614.5L499.7 615.0ZM455.9 750.1L459.4 750.2L452.6 760.2L449.1 760.1ZM516.5 650.9L518.2 650.2L515.0 661.7L513.0 662.4ZM530.3 713.4L530.7 712.5L530.4 724.3L529.7 725.2ZM533.0 761.0L533.0 761.0L533.0 771.0L533.0 771.0ZM447.8 404.1L450.2 404.3L445.4 414.0L443.1 413.7ZM460.3 455.7L463.0 455.7L457.6 465.8L454.9 465.7ZM415.1 592.1L417.2 592.8L412.7 601.6L410.8 601.0ZM474.5 506.1L477.2 505.9L471.8 516.4L469.0 516.5ZM515.0 382.9L515.3 382.2L514.7 393.5L514.2 394.1ZM425.3 645.6L428.0 646.1L422.4 655.3L419.8 654.7ZM489.5 555.6L492.1 555.2L487.4 566.1L484.6 566.4ZM517.7 431.0L517.7 431.0L518.3 441.0L518.3 441.0ZM439.0 698.3L442.1 698.6L435.8 708.2L432.7 707.8Z" fill="#1eb91e" stroke="#1eb91e" stroke-width="0.5"/>
<path d="M499.7 615.0L502.2 614.5L497.4 625.6L494.7 626.0ZM513.0 662.4L515.0 661.7L511.2 673.1L509.0 673.7ZM443.1 413.7L445.4 414.0L440.6 423.6L438.3 423.3ZM454.9 465.7L457.6 465.8L452.3 475.7L449.6 475.5ZM469.0 516.5L471.8 516.4L466.3 526.6L463.5 526.7ZM515.5 371.5L515.5 371.0L515.3 382.2L515.0 382.9ZM484.6 566.4L487.4 566.1L482.2 576.9L479.3 577.2ZM517.1 421.0L517.1 421.0L517.7 431.0L517.7 431.0Z" fill="#1db11d" stroke="#1db11d" stroke-width="0.5"/>
<path d="M494.7 626.0L497.4 625.6L492.2 636.5L489.3 636.9ZM442.3 769.8L445.8 770.0L439.2 779.5L435.8 779.2ZM509.0 673.7L511.2 673.1L506.9 684.4L504.4 685.0ZM529.7 691.0L529.7 691.0L530.3 701.0L530.2 701.6ZM449.6 475.5L452.3 475.7L446.9 485.5L444.3 485.2ZM407.0 609.7L408.6 610.4L405.0 619.0L403.6 618.2ZM463.5 526.7L466.3 526.6L460.7 536.8L457.8 536.7ZM414.7 663.7L417.1 664.3L412.1 673.2L409.9 672.5ZM479.3 577.2L482.2 576.9L476.5 587.5L473.5 587.6ZM426.6 717.2L429.5 717.6L423.5 726.9L420.6 726.3Z" fill="#1ba81b" stroke="#1ba81b" stroke-width="0.5"/>
<path d="M489.3 636.9L492.2 636.5L486.6 647.4L483.6 647.7ZM420.0 767.0L423.0 767.5L417.3 776.5L414.6 775.9ZM435.8 779.2L439.2 779.5L432.8 788.9L429.5 788.5ZM504.4 685.0L506.9 684.4L502.2 695.6L499.5 696.1ZM529.1 681.0L529.1 681.0L529.7 691.0L529.7 691.0ZM425.0 379.9L426.6 380.4L423.5 389.4L422.0 388.8ZM433.6 432.7L435.8 433.1L431.1 442.5L429.1 442.0ZM444.3 485.2L446.9 485.5L441.6 495.1L439.1 494.8ZM497.3 391.6L499.2 391.1L495.4 402.0L493.4 402.4ZM403.6 618.2L405.0 619.0L401.9 627.6L400.7 626.8ZM457.8 536.7L460.7 536.8L455.0 546.8L452.2 546.7ZM409.9 672.5L412.1 673.2L407.5 681.9L405.6 681.2ZM473.5 587.6L476.5 587.5L470.6 597.9L467.5 598.0ZM408.4 713.1L410.7 713.8L405.9 722.5L403.9 721.8ZM420.6 726.3L423.5 726.9L417.7 736.0L415.0 735.4Z" fill="#1aa01a" stroke="#1aa01a" stroke-width="0.5"/>
<path d="M483.6 647.7L486.6 647.4L480.8 658.0L477.6 658.3ZM429.2 748.1L432.3 748.5L426.0 757.9L422.9 757.4ZM498.3 655.8L500.9 655.3L495.8 666.4L493.0 666.8ZM499.5 696.1L502.2 695.6L497.2 706.7L494.3 707.2ZM430.5 401.4L432.4 401.8L428.5 411.0L426.7 410.5ZM439.8 454.2L442.2 454.5L437.1 464.0L434.8 463.7ZM402.9 586.4L404.0 587.2L401.4 595.7L400.7 594.9ZM452.2 506.1L455.0 506.2L449.4 516.1L446.7 515.9ZM400.7 626.8L401.9 627.6L399.2 636.0L398.4 635.2ZM407.3 640.7L409.2 641.4L405.2 650.1L403.6 649.3ZM466.8 557.2L469.8 557.1L464.1 567.5L461.1 567.5ZM405.6 681.2L407.5 681.9L403.3 690.6L401.7 689.8ZM416.1 694.7L418.7 695.3L413.4 704.2L411.0 703.6ZM482.8 607.2L485.7 607.0L480.0 617.6L477.0 617.8ZM415.0 735.4L417.7 736.0L412.1 744.9L409.7 744.2Z" fill="#199a19" stroke="#199a19" stroke-width="0.5"/>
<path d="M520.4 491.0L520.4 491.0L520.8 501.0L520.8 501.0ZM511.9 396.1L512.8 395.5L511.3 406.7L510.2 407.3ZM518.0 442.7L518.2 442.0L518.2 453.4L517.7 454.1Z" fill="#33ed33" stroke="#33ed33" stroke-width="0.5"/>
<path d="M520.8 501.0L520.8 501.0L521.2 511.0L521.1 511.7ZM510.2 407.3L511.3 406.7L509.6 418.0L508.3 418.6ZM517.7 454.1L518.2 453.4L517.5 464.8L516.7 465.5Z" fill="#56f556" stroke="#56f556" stroke-width="0.5"/>
<path d="M521.1 511.7L521.2 511.0L521.3 522.4L521.0 523.2ZM521.9 597.1L522.9 596.3L521.1 607.9L519.8 608.6ZM525.0 561.0L525.0 561.0L525.4 571.0L525.4 571.0ZM527.4 642.8L527.6 641.9L527.3 653.6L526.8 654.5ZM529.7 691.0L529.7 691.0L530.3 701.0L530.3 701.0ZM508.3 418.6L509.6 418.0L507.4 429.2L505.9 429.8ZM516.7 465.5L517.5 464.8L516.3 476.2L515.3 476.9ZM511.7 550.5L513.4 549.8L510.9 561.2L509.0 561.9Z" fill="#8fff8f" stroke="#8fff8f" stroke-width="0.5"/>
<path d="M521.0 523.2L521.3 522.4L521.0 533.9L520.4 534.7ZM525.4 571.0L525.4 571.0L525.7 581.0L525.7 581.0ZM515.3 476.9L516.3 476.2L514.5 487.6L513.3 488.3Z" fill="#7cfd7c" stroke="#7cfd7c" stroke-width="0.5"/>
<path d="M520.4 534.7L521.0 533.9L520.7 545.5L519.8 546.2ZM525.7 581.0L525.7 581.0L526.0 591.3L525.9 592.2ZM513.3 488.3L514.5 487.6L512.3 498.9L510.8 499.6Z" fill="#42ee42" stroke="#42ee42" stroke-width="0.5"/>
<path d="M519.8 546.2L520.7 545.5L519.8 557.0L518.7 557.8ZM474.9 688.8L478.2 688.6L471.8 699.1L468.5 699.2ZM490.8 697.5L493.8 697.1L488.2 708.0L485.1 708.3ZM525.9 592.2L526.0 591.3L526.0 603.0L525.5 603.8ZM492.6 738.0L495.7 737.6L489.9 748.5L486.7 748.9ZM527.7 641.0L527.7 641.0L528.0 651.0L528.0 651.0ZM486.9 403.4L489.1 403.1L484.9 413.8L482.6 414.0ZM499.8 452.1L501.7 451.6L498.2 462.6L496.0 463.1ZM458.2 598.0L461.3 598.0L455.1 608.0L452.1 607.9ZM510.8 499.6L512.3 498.9L509.6 510.2L507.8 510.8ZM474.3 648.3L477.5 648.2L471.3 658.6L468.1 658.7Z" fill="#2ee72e" stroke="#2ee72e" stroke-width="0.5"/>
<path d="M518.7 557.8L519.8 557.0L518.3 568.6L516.9 569.3ZM524.1 563.9L524.5 563.1L523.8 574.7L523.1 575.5ZM525.0 561.5L525.0 561.0L525.2 572.2L524.9 573.1ZM485.1 708.3L488.2 708.0L482.3 718.8L479.0 719.0ZM525.5 603.8L526.0 603.0L525.3 614.6L524.6 615.4ZM508.4 714.6L510.8 714.0L506.4 725.3L503.8 725.9ZM502.6 756.8L505.4 756.2L500.0 767.3L497.0 767.8ZM528.0 651.0L528.0 651.0L528.4 661.0L528.4 661.0ZM522.1 761.3L523.9 760.5L520.3 772.0L518.2 772.8ZM482.6 414.0L484.9 413.8L480.5 424.4L478.0 424.6ZM494.2 422.6L496.2 422.1L492.5 433.1L490.3 433.4ZM500.1 421.2L502.0 420.8L498.7 431.8L496.7 432.3ZM496.0 463.1L498.2 462.6L494.1 473.6L491.8 474.0ZM506.3 470.7L508.0 470.1L504.9 481.3L503.0 481.8ZM511.1 468.9L512.5 468.2L510.0 479.5L508.4 480.1ZM452.1 607.9L455.1 608.0L448.9 617.9L445.9 617.7ZM507.8 510.8L509.6 510.2L506.4 521.5L504.4 522.0ZM515.7 517.6L516.9 516.9L514.9 528.3L513.5 529.0ZM518.8 515.5L519.5 514.7L518.3 526.2L517.3 526.9ZM468.1 658.7L471.3 658.6L464.9 668.9L461.7 668.9Z" fill="#2be32b" stroke="#2be32b" stroke-width="0.5"/>
<path d="M516.9 569.3L518.3 568.6L515.7 580.0L513.9 580.7ZM521.2 511.0L521.2 511.0L521.6 521.0L521.5 521.6ZM462.1 709.5L465.4 709.5L458.9 719.7L455.5 719.6ZM518.3 609.4L519.8 608.6L517.1 620.1L515.4 620.8ZM510.9 663.0L513.0 662.4L509.0 673.7L506.6 674.3ZM524.6 615.4L525.3 614.6L524.1 626.2L523.0 627.1ZM480.4 759.6L483.8 759.3L477.3 769.9L473.9 770.1ZM526.1 655.3L526.8 654.5L525.6 666.2L524.5 667.0ZM522.6 709.5L524.1 708.7L521.6 720.4L519.9 721.2ZM528.4 661.0L528.4 661.0L528.6 671.8L528.4 672.7ZM530.3 701.0L530.3 701.0L530.8 711.6L530.7 712.5ZM531.4 755.1L532.0 754.2L530.6 766.0L529.6 766.9ZM465.2 414.9L467.8 414.9L462.8 425.1L460.2 425.1ZM478.0 424.6L480.5 424.4L475.8 435.0L473.2 435.1ZM479.1 465.3L481.6 465.1L476.6 475.6L474.0 475.8ZM509.7 377.4L510.8 376.8L508.5 388.0L507.2 388.5ZM491.8 474.0L494.1 473.6L489.7 484.4L487.2 484.7ZM510.8 417.4L511.9 416.7L510.2 428.0L508.9 428.6ZM515.5 371.0L515.5 371.0L515.5 381.5L515.3 382.2ZM493.0 514.3L495.3 513.9L490.8 524.8L488.3 525.1ZM515.8 424.1L516.3 423.4L515.8 434.8L515.1 435.5ZM516.4 411.0L516.4 411.0L517.1 421.3L516.9 422.0ZM504.4 522.0L506.4 521.5L502.7 532.6L500.6 533.1ZM518.1 464.1L518.6 463.4L517.9 474.8L517.1 475.5ZM445.6 658.3L448.8 658.4L442.4 668.2L439.3 667.9ZM506.9 562.4L509.0 561.9L505.6 573.2L503.3 573.7ZM519.7 471.0L519.7 471.0L520.1 481.1L520.0 481.8Z" fill="#29e029" stroke="#29e029" stroke-width="0.5"/>
<path d="M513.9 580.7L515.7 580.0L512.5 591.4L510.5 592.1ZM523.0 541.0L523.0 541.0L524.1 551.0L524.1 551.0ZM472.7 729.6L476.1 729.4L469.6 739.9L466.1 740.0ZM523.0 627.1L524.1 626.2L522.2 637.9L520.9 638.6ZM516.1 691.8L518.0 691.0L514.7 702.5L512.5 703.2ZM490.9 778.7L494.1 778.3L487.9 789.0L484.5 789.4ZM528.4 672.7L528.6 671.8L528.4 683.5L527.9 684.4ZM527.4 737.9L528.5 737.0L526.7 748.8L525.2 749.6ZM459.7 384.8L462.2 384.8L457.4 394.7L454.9 394.6ZM472.4 394.7L474.9 394.5L470.1 404.7L467.6 404.8ZM473.2 435.1L475.8 435.0L470.8 445.4L468.2 445.5ZM505.9 399.1L507.3 398.5L504.7 409.6L503.1 410.1ZM487.2 484.7L489.7 484.4L484.9 495.1L482.3 495.4ZM512.3 406.1L513.1 405.4L511.9 416.7L510.8 417.4ZM514.8 446.2L515.7 445.5L514.4 456.9L513.3 457.6ZM439.8 627.3L442.8 627.6L436.7 637.1L433.8 636.8ZM500.6 533.1L502.7 532.6L498.7 543.7L496.3 544.1ZM520.2 492.5L520.4 491.8L520.2 503.2L519.7 504.0ZM455.2 679.0L458.4 679.0L451.9 689.0L448.6 688.9Z" fill="#27db27" stroke="#27db27" stroke-width="0.5"/>
<path d="M510.5 592.1L512.5 591.4L508.8 602.7L506.6 603.3ZM466.1 740.0L469.6 739.9L462.9 750.2L459.4 750.2ZM520.9 638.6L522.2 637.9L519.8 649.4L518.2 650.2ZM519.4 680.2L521.0 679.5L518.0 691.0L516.1 691.8ZM527.9 684.4L528.4 683.5L527.8 695.3L527.0 696.1ZM528.9 726.1L529.7 725.2L528.5 737.0L527.4 737.9ZM454.9 394.6L457.4 394.7L452.6 404.5L450.2 404.3ZM468.2 445.5L470.8 445.4L465.6 455.7L463.0 455.7ZM482.3 495.4L484.9 495.1L479.9 505.7L477.2 505.9ZM433.8 636.8L436.7 637.1L430.8 646.5L428.0 646.1ZM496.3 544.1L498.7 543.7L494.6 554.8L492.1 555.2ZM448.6 688.9L451.9 689.0L445.4 698.8L442.1 698.6Z" fill="#25d625" stroke="#25d625" stroke-width="0.5"/>
<path d="M506.6 603.3L508.8 602.7L504.6 614.0L502.2 614.5ZM516.8 610.1L518.3 609.4L515.4 620.8L513.5 621.5ZM459.4 750.2L462.9 750.2L456.1 760.3L452.6 760.2ZM518.2 650.2L519.8 649.4L516.9 661.0L515.0 661.7ZM522.1 668.7L523.4 667.8L521.0 679.5L519.4 680.2ZM527.0 696.1L527.8 695.3L526.6 707.0L525.4 707.9ZM529.8 714.3L530.3 713.4L529.7 725.2L528.9 726.1ZM533.0 761.0L533.0 761.0L533.0 771.0L533.0 771.2ZM450.2 404.3L452.6 404.5L447.8 414.2L445.4 414.0ZM462.7 414.9L465.2 414.9L460.2 425.1L457.7 425.0ZM463.0 455.7L465.6 455.7L460.3 465.9L457.6 465.8ZM476.4 465.5L479.1 465.3L474.0 475.8L471.3 475.9ZM510.8 376.8L511.8 376.2L509.8 387.4L508.5 388.0ZM477.2 505.9L479.9 505.7L474.6 516.2L471.8 516.4ZM490.5 514.7L493.0 514.3L488.3 525.1L485.7 525.4ZM516.3 423.4L516.7 422.7L516.4 434.1L515.8 434.8ZM428.0 646.1L430.8 646.5L425.0 655.8L422.4 655.3ZM492.1 555.2L494.6 554.8L490.1 565.8L487.4 566.1ZM504.8 563.0L506.9 562.4L503.3 573.7L501.0 574.2ZM519.7 471.0L519.7 471.0L520.1 481.0L520.1 481.1ZM442.1 698.6L445.4 698.8L438.9 708.5L435.8 708.2Z" fill="#23d023" stroke="#23d023" stroke-width="0.5"/>
<path d="M502.2 614.5L504.6 614.0L500.0 625.1L497.4 625.6ZM452.6 760.2L456.1 760.3L449.2 770.2L445.8 770.0ZM515.0 661.7L516.9 661.0L513.3 672.4L511.2 673.1ZM524.2 657.0L525.2 656.2L523.4 667.8L522.1 668.7ZM525.4 707.9L526.6 707.0L524.8 718.7L523.3 719.6ZM530.0 702.5L530.2 701.6L530.3 713.4L529.8 714.3ZM533.0 751.0L533.0 751.0L533.0 761.0L533.0 761.0ZM445.4 414.0L447.8 414.2L442.9 423.9L440.6 423.6ZM457.6 465.8L460.3 465.9L454.9 475.8L452.3 475.7ZM511.8 376.2L512.7 375.5L510.9 386.8L509.8 387.4ZM471.8 516.4L474.6 516.2L469.2 526.6L466.3 526.6ZM515.3 372.2L515.5 371.5L515.0 382.9L514.6 383.5ZM516.3 412.1L516.4 411.4L516.7 422.7L516.3 423.4ZM422.4 655.3L425.0 655.8L419.5 664.9L417.1 664.3ZM487.4 566.1L490.1 565.8L485.1 576.7L482.2 576.9ZM517.1 421.0L517.1 421.0L517.7 431.0L517.7 431.0ZM519.3 461.0L519.3 461.0L519.7 471.0L519.7 471.0ZM435.8 708.2L438.9 708.5L432.6 718.0L429.5 717.6Z" fill="#21ca21" stroke="#21ca21" stroke-width="0.5"/>
<path d="M497.4 625.6L500.0 625.1L495.0 636.1L492.2 636.5ZM445.8 770.0L449.2 770.2L442.6 779.8L439.2 779.5ZM511.2 673.1L513.3 672.4L509.3 683.8L506.9 684.4ZM525.7 645.4L526.4 644.5L525.2 656.2L524.2 657.0ZM523.3 719.6L524.8 718.7L522.3 730.4L520.5 731.2ZM529.7 691.0L529.7 691.0L530.2 701.6L530.0 702.5ZM440.6 423.6L442.9 423.9L438.0 433.5L435.8 433.1ZM452.3 475.7L454.9 475.8L449.5 485.7L446.9 485.5ZM466.3 526.6L469.2 526.6L463.6 536.8L460.7 536.8ZM511.4 427.4L512.5 426.8L510.8 438.1L509.5 438.7ZM417.1 664.3L419.5 664.9L414.4 673.8L412.1 673.2ZM482.2 576.9L485.1 576.7L479.5 587.3L476.5 587.5ZM429.5 717.6L432.6 718.0L426.4 727.3L423.5 726.9Z" fill="#1fc31f" stroke="#1fc31f" stroke-width="0.5"/>
<path d="M492.2 636.5L495.0 636.1L489.6 647.0L486.6 647.4ZM439.2 779.5L442.6 779.8L436.0 789.2L432.8 788.9ZM506.9 684.4L509.3 683.8L504.8 695.0L502.2 695.6ZM526.6 633.7L527.0 632.8L526.4 644.5L525.7 645.4ZM520.5 731.2L522.3 730.4L519.2 742.0L517.1 742.8ZM529.1 681.0L529.1 681.0L529.7 691.0L529.7 691.0ZM426.6 380.4L428.4 380.9L425.1 389.9L423.5 389.4ZM435.8 433.1L438.0 433.5L433.2 442.9L431.1 442.5ZM446.9 485.5L449.5 485.7L444.2 495.4L441.6 495.1ZM507.3 398.5L508.6 397.9L506.3 409.1L504.7 409.6ZM460.7 536.8L463.6 536.8L457.9 546.9L455.0 546.8ZM515.5 391.0L515.5 391.0L515.8 401.0L515.8 401.0ZM412.1 673.2L414.4 673.8L409.6 682.6L407.5 681.9ZM476.5 587.5L479.5 587.3L473.6 597.8L470.6 597.9ZM423.5 726.9L426.4 727.3L420.4 736.5L417.7 736.0Z" fill="#1ebb1e" stroke="#1ebb1e" stroke-width="0.5"/>
<path d="M486.6 647.4L489.6 647.0L483.8 657.8L480.8 658.0ZM502.2 695.6L504.8 695.0L500.0 706.2L497.2 706.7ZM526.9 622.0L527.0 621.2L527.0 632.8L526.6 633.7ZM517.1 742.8L519.2 742.0L515.5 753.6L513.2 754.3ZM528.7 671.0L528.7 671.0L529.1 681.0L529.1 681.0ZM423.5 389.4L425.1 389.9L422.1 398.9L420.7 398.3ZM431.1 442.5L433.2 442.9L428.6 452.2L426.6 451.7ZM441.6 495.1L444.2 495.4L438.9 504.9L436.4 504.6ZM455.0 546.8L457.9 546.9L452.2 556.9L449.3 556.8ZM407.5 681.9L409.6 682.6L405.2 691.3L403.3 690.6ZM470.6 597.9L473.6 597.8L467.6 608.1L464.5 608.1ZM417.7 736.0L420.4 736.5L414.7 745.5L412.1 744.9Z" fill="#1db31d" stroke="#1db31d" stroke-width="0.5"/>
<path d="M480.8 658.0L483.8 657.8L477.8 668.4L474.6 668.6ZM525.4 571.0L525.4 571.0L525.7 581.4L525.5 582.2ZM497.2 706.7L500.0 706.2L494.7 717.3L491.7 717.7ZM513.2 754.3L515.5 753.6L511.0 765.0L508.4 765.6ZM420.7 398.3L422.1 398.9L419.3 407.8L418.1 407.2ZM426.6 451.7L428.6 452.2L424.3 461.4L422.4 460.8ZM436.4 504.6L438.9 504.9L433.8 514.3L431.4 513.9ZM491.6 412.8L493.7 412.4L489.8 423.3L487.6 423.6ZM449.3 556.8L452.2 556.9L446.3 566.9L443.5 566.6ZM504.1 461.2L505.9 460.6L502.6 471.7L500.6 472.2ZM464.5 608.1L467.6 608.1L461.4 618.3L458.3 618.2ZM401.5 731.1L403.4 731.9L399.3 740.5L397.6 739.6Z" fill="#1cab1c" stroke="#1cab1c" stroke-width="0.5"/>
<path d="M474.6 668.6L477.8 668.4L471.5 678.9L468.3 679.0ZM491.7 717.7L494.7 717.3L489.1 728.3L485.9 728.6ZM526.4 601.0L526.4 601.0L526.7 611.0L526.7 611.0ZM508.4 765.6L511.0 765.0L505.9 776.2L503.1 776.8ZM418.1 407.2L419.3 407.8L416.4 416.7L415.4 416.1ZM422.4 460.8L424.3 461.4L420.3 470.4L418.7 469.8ZM431.4 513.9L433.8 514.3L428.9 523.6L426.6 523.2ZM443.5 566.6L446.3 566.9L440.5 576.6L437.6 576.3ZM500.6 472.2L502.6 471.7L498.8 482.8L496.7 483.2ZM399.6 699.1L401.2 699.9L397.7 708.4L396.4 707.6ZM458.3 618.2L461.4 618.3L455.1 628.3L452.0 628.2ZM407.0 753.7L409.3 754.4L404.6 763.1L402.5 762.3Z" fill="#1aa21a" stroke="#1aa21a" stroke-width="0.5"/>
<path d="M468.3 679.0L471.5 678.9L465.1 689.2L461.8 689.2ZM524.1 551.0L524.1 551.0L525.0 561.0L525.0 561.0ZM485.9 728.6L489.1 728.3L483.0 739.1L479.7 739.3ZM503.1 776.8L505.9 776.2L500.4 787.3L497.4 787.8ZM415.4 416.1L416.4 416.7L413.8 425.5L413.0 424.8ZM418.7 469.8L420.3 470.4L416.7 479.3L415.3 478.7ZM469.8 384.8L472.3 384.7L467.4 394.8L464.9 394.8ZM482.1 394.0L484.5 393.7L479.9 404.2L477.5 404.4ZM426.6 523.2L428.9 523.6L424.2 532.8L422.1 532.3ZM483.2 434.3L485.6 434.1L481.1 444.8L478.5 445.0ZM495.1 442.8L497.2 442.4L493.4 453.4L491.1 453.7ZM437.6 576.3L440.5 576.6L434.7 586.1L432.0 585.7ZM496.7 483.2L498.8 482.8L494.7 493.7L492.4 494.1ZM396.4 707.6L397.7 708.4L394.7 716.8L393.8 715.9ZM452.0 628.2L455.1 628.3L448.8 638.2L445.7 638.0ZM394.3 748.0L395.6 748.9L392.8 757.2L391.8 756.3ZM402.5 762.3L404.6 763.1L400.6 771.6L398.7 770.8Z" fill="#199c19" stroke="#199c19" stroke-width="0.5"/>
<path d="M520.4 491.0L520.4 491.0L520.8 501.0L520.8 501.0ZM514.7 600.8L516.4 600.1L513.2 611.5L511.2 612.2ZM452.2 729.7L455.6 729.8L448.9 739.7L445.5 739.5ZM513.9 631.6L515.8 630.9L512.3 642.3L510.2 642.9ZM516.1 640.9L517.9 640.2L514.6 651.6L512.6 652.3ZM523.8 647.0L524.8 646.2L523.0 657.9L521.7 658.7ZM470.6 780.3L474.1 780.1L467.3 790.4L463.8 790.4ZM523.7 677.8L524.9 677.0L522.8 688.7L521.4 689.5ZM525.3 687.0L526.3 686.1L524.8 697.9L523.5 698.7ZM529.4 692.6L529.6 691.7L529.7 703.4L529.2 704.3ZM530.9 723.4L531.3 722.4L531.1 734.3L530.4 735.2ZM531.9 732.4L532.1 731.4L532.2 743.3L531.7 744.2ZM532.7 741.0L532.7 741.0L533.0 751.0L533.0 751.0ZM515.1 392.8L515.3 392.1L515.0 403.5L514.5 404.1ZM515.7 402.1L515.8 401.4L516.0 412.8L515.7 413.4ZM485.9 535.5L488.5 535.2L483.5 545.9L480.8 546.2ZM516.4 411.0L516.4 411.0L517.1 421.0L517.1 421.0ZM518.2 442.0L518.3 441.3L518.6 452.7L518.2 453.4ZM501.8 553.4L504.0 552.8L500.2 564.1L497.8 564.5ZM518.3 441.0L518.3 441.0L518.9 451.0L518.9 451.0ZM518.9 451.0L518.9 451.0L519.3 461.0L519.3 461.0ZM501.3 584.3L503.7 583.8L499.1 594.9L496.5 595.3ZM504.0 593.9L506.3 593.3L501.9 604.5L499.4 605.0Z" fill="#2be52b" stroke="#2be52b" stroke-width="0.5"/>
<path d="M520.8 501.0L520.8 501.0L521.2 511.0L521.2 511.0ZM521.5 533.2L521.8 532.4L522.0 543.9L521.4 544.7ZM500.6 645.3L503.1 644.7L498.3 655.8L495.5 656.3ZM523.0 541.0L523.0 541.0L524.1 551.0L524.1 551.0ZM501.8 685.5L504.4 685.0L499.5 696.1L496.7 696.6ZM525.7 581.0L525.7 581.0L526.0 591.0L526.0 591.0ZM514.1 692.5L516.1 691.8L512.5 703.2L510.2 703.9ZM516.5 732.7L518.6 732.0L514.9 743.5L512.6 744.2ZM526.0 738.7L527.4 737.9L525.2 749.6L523.5 750.5ZM518.2 772.8L520.3 772.0L516.2 783.5L513.8 784.2ZM495.3 392.0L497.3 391.6L493.4 402.4L491.3 402.8ZM504.4 399.6L505.9 399.1L503.1 410.1L501.4 410.7ZM511.3 406.7L512.3 406.1L510.8 417.4L509.6 418.0ZM506.5 439.9L508.0 439.3L505.4 450.5L503.6 451.1ZM513.8 446.9L514.8 446.2L513.3 457.6L512.1 458.2ZM518.2 453.4L518.6 452.7L518.1 464.1L517.5 464.8ZM515.7 486.9L516.7 486.2L514.9 497.6L513.7 498.3ZM519.8 493.3L520.2 492.5L519.7 504.0L519.1 504.7Z" fill="#2ce72c" stroke="#2ce72c" stroke-width="0.5"/>
<path d="M521.2 511.0L521.2 511.0L521.5 521.6L521.3 522.4ZM507.3 623.5L509.5 622.8L505.3 634.1L502.8 634.7ZM495.5 656.3L498.3 655.8L493.0 666.8L490.1 667.2ZM508.6 663.7L510.9 663.0L506.6 674.3L504.1 674.9ZM519.0 670.2L520.6 669.5L517.6 681.0L515.7 681.7ZM510.2 703.9L512.5 703.2L508.4 714.6L505.9 715.2ZM521.0 710.3L522.6 709.5L519.9 721.2L518.0 721.9ZM528.3 716.1L529.1 715.2L527.9 727.0L526.7 727.9ZM523.5 750.5L525.2 749.6L522.1 761.3L520.2 762.1ZM530.5 756.0L531.4 755.1L529.6 766.9L528.5 767.8ZM533.0 761.3L533.0 761.0L532.9 772.2L532.6 773.1ZM508.5 378.0L509.7 377.4L507.2 388.5L505.8 389.1ZM509.6 418.0L510.8 417.4L508.9 428.6L507.4 429.2ZM515.2 424.8L515.8 424.1L515.1 435.5L514.2 436.2ZM517.5 464.8L518.1 464.1L517.1 475.5L516.3 476.2ZM493.4 575.6L496.0 575.2L490.9 586.1L488.2 586.4ZM519.7 471.1L519.7 471.0L520.0 481.8L519.8 482.6ZM494.4 616.0L497.1 615.5L491.9 626.4L489.1 626.8Z" fill="#2dea2d" stroke="#2dea2d" stroke-width="0.5"/>
<path d="M521.3 522.4L521.5 521.6L521.5 533.2L521.0 533.9ZM490.1 667.2L493.0 666.8L487.3 677.7L484.2 678.0ZM525.4 571.0L525.4 571.0L525.7 581.0L525.7 581.0ZM505.9 715.2L508.4 714.6L503.8 725.9L501.0 726.5ZM520.2 762.1L522.1 761.3L518.2 772.8L516.0 773.5ZM497.1 381.6L499.0 381.2L495.3 392.0L493.3 392.4ZM507.4 429.2L508.9 428.6L506.5 439.9L504.8 440.4ZM516.3 476.2L517.1 475.5L515.7 486.9L514.5 487.6Z" fill="#30ec30" stroke="#30ec30" stroke-width="0.5"/>
<path d="M521.0 533.9L521.5 533.2L521.4 544.7L520.7 545.5ZM493.3 392.4L495.3 392.0L491.3 402.8L489.1 403.1ZM504.8 440.4L506.5 439.9L503.6 451.1L501.7 451.6ZM514.5 487.6L515.7 486.9L513.7 498.3L512.3 498.9Z" fill="#48f248" stroke="#48f248" stroke-width="0.5"/>
<path d="M520.7 545.5L521.4 544.7L520.9 556.3L519.8 557.0ZM526.0 591.3L526.0 591.0L526.2 602.1L526.0 603.0ZM526.7 611.0L526.7 611.0L527.0 621.0L527.0 621.0ZM512.3 498.9L513.7 498.3L511.2 509.6L509.6 510.2Z" fill="#83ff83" stroke="#83ff83" stroke-width="0.5"/>
<path d="M519.8 557.0L520.9 556.3L519.6 567.8L518.3 568.6ZM524.0 551.5L524.1 551.0L524.8 562.3L524.5 563.1ZM526.0 603.0L526.2 602.1L525.9 613.8L525.3 614.6ZM528.0 651.0L528.0 651.0L528.4 661.0L528.4 661.0ZM518.4 505.5L519.1 504.7L517.9 516.2L516.9 516.9Z" fill="#8aff8a" stroke="#8aff8a" stroke-width="0.5"/>
<path d="M518.3 568.6L519.6 567.8L517.2 579.3L515.7 580.0ZM525.3 614.6L525.9 613.8L524.9 625.4L524.1 626.2ZM506.4 521.5L508.2 520.9L504.8 532.1L502.7 532.6Z" fill="#4ff24f" stroke="#4ff24f" stroke-width="0.5"/>
<path d="M515.7 580.0L517.2 579.3L514.3 590.8L512.5 591.4ZM476.1 729.4L479.4 729.2L473.0 739.7L469.6 739.9ZM524.1 626.2L524.9 625.4L523.4 637.0L522.2 637.9ZM494.1 778.3L497.2 777.8L491.1 788.7L487.9 789.0ZM528.6 671.8L528.7 671.0L528.8 682.6L528.4 683.5ZM531.5 721.0L531.5 721.0L532.1 731.0L532.1 731.0ZM489.7 484.4L492.1 484.0L487.5 494.8L484.9 495.1ZM502.7 532.6L504.8 532.1L501.0 543.2L498.7 543.7ZM458.4 679.0L461.7 679.1L455.2 689.1L451.9 689.0Z" fill="#30e830" stroke="#30e830" stroke-width="0.5"/>
<path d="M512.5 591.4L514.3 590.8L510.9 602.1L508.8 602.7ZM521.5 521.6L521.6 521.0L521.8 532.4L521.5 533.2ZM468.5 699.2L471.8 699.1L465.4 709.5L462.1 709.5ZM505.3 634.1L507.6 633.5L503.1 644.7L500.6 645.3ZM520.7 597.9L521.9 597.1L519.8 608.6L518.3 609.4ZM522.0 531.0L522.0 531.0L523.0 541.0L523.0 541.0ZM469.6 739.9L473.0 739.7L466.4 750.1L462.9 750.2ZM506.6 674.3L509.0 673.7L504.4 685.0L501.8 685.5ZM522.2 637.9L523.4 637.0L521.3 648.7L519.8 649.4ZM525.4 571.0L525.4 571.0L525.7 581.0L525.7 581.0ZM486.7 748.9L489.9 748.5L483.8 759.3L480.4 759.6ZM517.6 681.0L519.4 680.2L516.1 691.8L514.1 692.5ZM527.0 643.7L527.4 642.8L526.8 654.5L526.1 655.3ZM519.9 721.2L521.6 720.4L518.6 732.0L516.5 732.7ZM528.4 683.5L528.8 682.6L528.5 694.4L527.8 695.3ZM527.9 727.0L528.9 726.1L527.4 737.9L526.0 738.7ZM529.7 691.0L529.7 691.0L530.3 701.0L530.3 701.0ZM529.6 766.9L530.6 766.0L528.5 777.7L527.2 778.6ZM532.1 731.0L532.1 731.0L532.7 741.0L532.7 741.0ZM457.4 394.7L459.9 394.8L455.1 404.6L452.6 404.5ZM470.1 404.7L472.6 404.7L467.8 414.9L465.2 414.9ZM470.8 445.4L473.4 445.3L468.3 455.7L465.6 455.7ZM499.0 381.2L500.8 380.7L497.3 391.6L495.3 392.0ZM483.9 454.7L486.3 454.4L481.6 465.1L479.1 465.3ZM507.2 388.5L508.5 388.0L505.9 399.1L504.4 399.6ZM512.8 395.5L513.5 394.8L512.3 406.1L511.3 406.7ZM484.9 495.1L487.5 494.8L482.5 505.5L479.9 505.7ZM508.9 428.6L510.2 428.0L508.0 439.3L506.5 439.9ZM497.3 503.4L499.5 502.9L495.3 513.9L493.0 514.3ZM515.1 435.5L515.8 434.8L514.8 446.2L513.8 446.9ZM515.8 401.0L515.8 401.0L516.4 411.0L516.4 411.0ZM498.7 543.7L501.0 543.2L497.1 554.3L494.6 554.8ZM517.1 475.5L517.9 474.8L516.7 486.2L515.7 486.9ZM452.0 648.5L455.1 648.6L448.8 658.4L445.6 658.3ZM510.0 551.1L511.7 550.5L509.0 561.9L506.9 562.4ZM520.0 481.8L520.1 481.1L520.2 492.5L519.8 493.3ZM451.9 689.0L455.2 689.1L448.6 699.0L445.4 698.8Z" fill="#2be42b" stroke="#2be42b" stroke-width="0.5"/>
<path d="M504.6 614.0L506.9 613.4L502.5 624.6L500.0 625.1ZM455.5 719.6L458.9 719.7L452.2 729.7L448.8 729.5ZM513.2 611.5L515.0 610.8L511.6 622.2L509.5 622.8ZM515.4 620.8L517.1 620.1L513.9 631.6L511.9 632.2ZM456.1 760.3L459.6 760.4L452.7 770.3L449.2 770.2ZM514.6 651.6L516.5 650.9L513.0 662.4L510.9 663.0ZM516.9 661.0L518.6 660.2L515.4 671.7L513.3 672.4ZM523.0 657.9L524.2 657.0L522.1 668.7L520.6 669.5ZM524.5 667.0L525.6 666.2L523.7 677.8L522.4 678.7ZM524.8 697.9L526.0 697.0L524.1 708.7L522.6 709.5ZM526.6 707.0L527.6 706.1L526.1 717.9L524.8 718.7ZM529.7 703.4L530.0 702.5L529.8 714.3L529.1 715.2ZM530.7 712.5L530.8 711.6L530.9 723.4L530.4 724.3ZM532.2 743.3L532.5 742.3L532.0 754.2L531.4 755.1ZM532.8 752.3L533.0 751.3L532.6 763.2L532.1 764.1ZM533.0 751.0L533.0 751.0L533.0 761.0L533.0 761.0ZM447.8 414.2L450.2 414.4L445.3 424.2L442.9 423.9ZM460.2 425.1L462.8 425.1L457.7 435.2L455.1 435.1ZM460.3 465.9L463.0 465.9L457.6 475.9L454.9 475.8ZM474.0 475.8L476.6 475.6L471.4 486.0L468.7 486.1ZM512.7 375.5L513.4 374.9L511.8 386.1L510.9 386.8ZM474.6 516.2L477.4 516.1L472.0 526.5L469.2 526.6ZM488.3 525.1L490.8 524.8L485.9 535.5L483.2 535.8ZM516.0 412.8L516.3 412.1L516.3 423.4L515.8 424.1ZM516.9 422.0L517.1 421.3L517.3 432.7L517.0 433.4ZM490.1 565.8L492.7 565.4L487.9 576.3L485.1 576.7ZM439.3 667.9L442.4 668.2L436.1 677.7L433.1 677.4ZM503.3 573.7L505.6 573.2L501.3 584.3L498.8 584.8ZM519.3 461.0L519.3 461.0L519.7 471.0L519.7 471.0ZM438.9 708.5L442.1 708.8L435.7 718.4L432.6 718.0Z" fill="#28dc28" stroke="#28dc28" stroke-width="0.5"/>
<path d="M500.0 625.1L502.5 624.6L497.7 635.7L495.0 636.1ZM516.4 600.1L518.0 599.4L515.0 610.8L513.2 611.5ZM511.9 632.2L513.9 631.6L510.2 642.9L507.9 643.6ZM449.2 770.2L452.7 770.3L446.0 780.0L442.6 779.8ZM517.9 640.2L519.5 639.4L516.5 650.9L514.6 651.6ZM513.3 672.4L515.4 671.7L511.6 683.1L509.3 683.8ZM524.8 646.2L525.7 645.4L524.2 657.0L523.0 657.9ZM522.4 678.7L523.7 677.8L521.4 689.5L519.8 690.3ZM526.3 686.1L527.2 685.3L526.0 697.0L524.8 697.9ZM524.8 718.7L526.1 717.9L523.9 729.6L522.3 730.4ZM529.6 691.7L529.7 691.0L530.0 702.5L529.7 703.4ZM530.4 724.3L530.9 723.4L530.4 735.2L529.5 736.1ZM532.1 731.4L532.1 731.0L532.5 742.3L532.2 743.3ZM532.1 764.1L532.6 763.2L531.5 775.0L530.7 775.9ZM442.8 383.6L445.1 383.8L440.7 393.3L438.5 393.0ZM455.1 435.1L457.7 435.2L452.4 445.2L449.9 445.0ZM468.7 486.1L471.4 486.0L466.0 496.3L463.2 496.3ZM510.9 386.8L511.8 386.1L509.8 397.3L508.6 397.9ZM469.2 526.6L472.0 526.5L466.4 536.8L463.6 536.8ZM483.2 535.8L485.9 535.5L480.8 546.2L478.0 546.4ZM515.8 401.4L515.8 401.0L516.3 412.1L516.0 412.8ZM517.0 433.4L517.3 432.7L517.1 444.1L516.5 444.8ZM485.1 576.7L487.9 576.3L482.4 587.0L479.5 587.3ZM433.1 677.4L436.1 677.7L430.0 687.1L427.1 686.7ZM498.8 584.8L501.3 584.3L496.5 595.3L493.9 595.8ZM432.6 718.0L435.7 718.4L429.4 727.8L426.4 727.3Z" fill="#26d726" stroke="#26d726" stroke-width="0.5"/>
<path d="M495.0 636.1L497.7 635.7L492.4 646.6L489.6 647.0ZM519.1 588.6L520.4 587.9L518.0 599.4L516.4 600.1ZM426.0 768.0L429.1 768.4L423.1 777.5L420.2 777.0ZM524.6 594.7L525.2 593.8L524.2 605.5L523.3 606.3ZM442.6 779.8L446.0 780.0L439.4 789.5L436.0 789.2ZM509.3 683.8L511.6 683.1L507.3 694.5L504.8 695.0ZM526.0 634.5L526.6 633.7L525.7 645.4L524.8 646.2ZM522.3 730.4L523.9 729.6L521.1 741.2L519.2 742.0ZM529.1 681.0L529.1 681.0L529.7 691.0L529.6 691.7ZM438.0 433.5L440.3 433.8L435.4 443.3L433.2 442.9ZM449.5 485.7L452.2 485.8L446.8 495.6L444.2 495.4ZM501.0 390.7L502.7 390.2L499.3 401.1L497.4 401.6ZM463.6 536.8L466.4 536.8L460.8 546.9L457.9 546.9ZM510.8 438.1L512.1 437.5L510.1 448.8L508.6 449.4ZM479.5 587.3L482.4 587.0L476.7 597.6L473.6 597.8ZM518.3 484.8L518.9 484.0L518.0 495.5L517.1 496.2ZM516.4 548.4L517.6 547.7L515.9 559.2L514.4 559.9ZM426.4 727.3L429.4 727.8L423.3 737.0L420.4 736.5Z" fill="#24d224" stroke="#24d224" stroke-width="0.5"/>
<path d="M489.6 647.0L492.4 646.6L486.8 657.5L483.8 657.8ZM420.2 777.0L423.1 777.5L417.5 786.5L414.7 785.9ZM504.8 695.0L507.3 694.5L502.7 705.7L500.0 706.2ZM433.2 442.9L435.4 443.3L430.7 452.7L428.6 452.2ZM444.2 495.4L446.8 495.6L441.5 505.2L438.9 504.9ZM497.4 401.6L499.3 401.1L495.8 412.0L493.7 412.4ZM457.9 546.9L460.8 546.9L455.1 557.1L452.2 556.9ZM508.6 449.4L510.1 448.8L507.6 460.0L505.9 460.6ZM473.6 597.8L476.7 597.6L470.7 608.0L467.6 608.1ZM517.1 496.2L518.0 495.5L516.5 506.9L515.3 507.6ZM517.8 536.9L518.8 536.2L517.6 547.7L516.4 548.4Z" fill="#22cc22" stroke="#22cc22" stroke-width="0.5"/>
<path d="M483.8 657.8L486.8 657.5L480.9 668.2L477.8 668.4ZM522.7 565.5L523.5 564.7L522.2 576.3L521.2 577.1ZM500.0 706.2L502.7 705.7L497.6 716.9L494.7 717.3ZM526.7 611.2L526.7 611.0L526.9 622.0L526.7 622.9ZM515.5 753.6L517.7 752.8L513.5 764.3L511.0 765.0ZM428.6 452.2L430.7 452.7L426.2 461.9L424.3 461.4ZM438.9 504.9L441.5 505.2L436.3 514.7L433.8 514.3ZM452.2 556.9L455.1 557.1L449.2 567.1L446.3 566.9ZM467.6 608.1L470.7 608.0L464.5 618.3L461.4 618.3ZM515.3 507.6L516.5 506.9L514.5 518.3L513.1 519.0ZM414.7 745.5L417.4 746.1L411.8 755.1L409.3 754.4Z" fill="#20c520" stroke="#20c520" stroke-width="0.5"/>
<path d="M477.8 668.4L480.9 668.2L474.8 678.7L471.5 678.9ZM523.1 553.9L523.6 553.1L523.5 564.7L522.7 565.5ZM494.7 717.3L497.6 716.9L492.2 727.9L489.1 728.3ZM526.4 601.0L526.4 601.0L526.7 611.0L526.7 611.2ZM511.0 765.0L513.5 764.3L508.6 775.6L505.9 776.2ZM426.3 420.7L428.1 421.2L424.0 430.4L422.3 429.8ZM434.6 473.8L436.9 474.2L432.1 483.5L429.8 483.1ZM488.9 383.1L491.0 382.8L486.8 393.4L484.5 393.7ZM500.7 431.4L502.5 430.9L499.2 441.9L497.2 442.4ZM511.5 478.9L512.9 478.2L510.4 489.5L508.8 490.2ZM461.4 618.3L464.5 618.3L458.3 628.4L455.1 628.3ZM409.3 754.4L411.8 755.1L406.8 763.8L404.6 763.1Z" fill="#1ebd1e" stroke="#1ebd1e" stroke-width="0.5"/>
<path d="M471.5 678.9L474.8 678.7L468.4 689.1L465.1 689.2ZM522.8 542.4L523.0 541.6L523.6 553.1L523.1 553.9ZM489.1 728.3L492.2 727.9L486.3 738.7L483.0 739.1ZM526.0 591.0L526.0 591.0L526.4 601.0L526.4 601.0ZM505.9 776.2L508.6 775.6L503.3 786.7L500.4 787.3ZM484.5 393.7L486.8 393.4L482.3 404.0L479.9 404.2ZM497.2 442.4L499.2 441.9L495.6 453.0L493.4 453.4ZM440.5 576.6L443.3 576.9L437.5 586.4L434.7 586.1ZM508.8 490.2L510.4 489.5L507.4 500.8L505.6 501.4ZM455.1 628.3L458.3 628.4L452.0 638.3L448.8 638.2ZM404.6 763.1L406.8 763.8L402.6 772.4L400.6 771.6Z" fill="#1db51d" stroke="#1db51d" stroke-width="0.5"/>
<path d="M465.1 689.2L468.4 689.1L461.9 699.3L458.5 699.3ZM522.0 531.0L522.0 531.0L523.0 541.6L522.8 542.4ZM483.0 739.1L486.3 738.7L480.1 749.5L476.7 749.7ZM416.7 479.3L418.3 479.9L414.8 488.8L413.5 488.1ZM424.2 532.8L426.4 533.3L421.8 542.4L419.7 541.8ZM434.7 586.1L437.5 586.4L431.8 595.8L429.1 595.4ZM494.7 493.7L497.0 493.3L492.7 504.2L490.2 504.6ZM448.8 638.2L452.0 638.3L445.7 648.1L442.6 647.9ZM507.2 541.6L509.0 541.0L506.1 552.3L504.0 552.8ZM400.6 771.6L402.6 772.4L398.9 780.8L397.1 780.0Z" fill="#1cad1c" stroke="#1cad1c" stroke-width="0.5"/>
<path d="M458.5 699.3L461.9 699.3L455.4 709.4L452.0 709.3ZM521.6 521.0L521.6 521.0L522.0 531.0L522.0 531.0ZM476.7 749.7L480.1 749.5L473.6 760.1L470.1 760.2ZM475.3 414.6L477.7 414.4L473.0 424.9L470.5 425.0ZM489.1 464.2L491.5 463.9L486.9 474.6L484.4 474.9ZM429.1 595.4L431.8 595.8L426.3 605.1L423.8 604.6ZM502.0 512.5L504.0 512.0L500.2 523.1L498.0 523.5ZM442.6 647.9L445.7 648.1L439.4 657.7L436.4 657.4Z" fill="#1ba41b" stroke="#1ba41b" stroke-width="0.5"/>
<path d="M452.0 709.3L455.4 709.4L448.8 719.4L445.4 719.2ZM470.1 760.2L473.6 760.1L466.9 770.4L463.3 770.4ZM410.7 496.9L411.8 497.6L409.2 506.3L408.3 505.5ZM415.3 550.8L417.2 551.5L412.8 560.4L411.2 559.7ZM423.8 604.6L426.3 605.1L421.0 614.2L418.7 613.6ZM436.4 657.4L439.4 657.7L433.3 667.2L430.4 666.8Z" fill="#1a9d1a" stroke="#1a9d1a" stroke-width="0.5"/>
<path d="M445.4 719.2L448.8 719.4L442.2 729.1L438.9 728.9ZM463.3 770.4L466.9 770.4L460.0 780.4L456.5 780.4ZM408.3 505.5L409.2 506.3L407.0 514.9L406.4 514.1ZM452.6 424.8L455.1 424.9L450.0 434.8L447.5 434.6ZM411.2 559.7L412.8 560.4L408.9 569.2L407.5 568.5ZM465.8 476.0L468.5 476.0L463.2 486.1L460.4 486.1ZM418.7 613.6L421.0 614.2L416.1 623.2L413.9 622.5ZM480.3 526.0L483.0 525.7L477.8 536.3L475.0 536.5ZM430.4 666.8L433.3 667.2L427.3 676.5L424.5 676.1ZM496.0 575.2L498.5 574.7L493.6 585.7L490.9 586.1Z" fill="#199819" stroke="#199819" stroke-width="0.5"/>
<path d="M520.8 501.0L520.8 501.0L521.2 511.0L521.2 511.0ZM473.9 770.1L477.3 769.9L470.6 780.3L467.1 780.4ZM515.3 382.2L515.5 381.5L515.1 392.8L514.7 393.5ZM518.6 452.7L518.8 451.9L518.6 463.4L518.1 464.1Z" fill="#28db28" stroke="#28db28" stroke-width="0.5"/>
<path d="M521.4 544.7L522.0 543.9L521.7 555.5L520.9 556.3ZM518.7 578.6L520.0 577.8L517.6 589.3L516.0 590.1ZM524.1 551.0L524.1 551.0L525.0 561.5L524.8 562.3ZM524.2 584.7L524.8 583.9L523.8 595.5L522.9 596.3ZM496.7 696.6L499.5 696.1L494.3 707.2L491.3 707.6ZM526.0 591.0L526.0 591.0L526.4 601.3L526.2 602.1ZM525.7 624.6L526.2 623.7L525.3 635.4L524.4 636.2ZM498.6 737.1L501.5 736.6L496.1 747.7L493.1 748.1ZM527.4 631.0L527.4 631.0L527.7 641.0L527.6 641.9ZM512.6 744.2L514.9 743.5L510.7 755.0L508.1 755.6ZM500.2 777.3L503.1 776.8L497.4 787.8L494.3 788.2ZM528.7 671.0L528.7 671.0L529.1 681.0L529.0 681.7ZM491.3 402.8L493.4 402.4L489.4 413.1L487.2 413.5ZM501.4 410.7L503.1 410.1L500.1 421.2L498.2 421.7ZM492.9 443.2L495.1 442.8L491.1 453.7L488.7 454.1ZM503.6 451.1L505.4 450.5L502.2 461.7L500.3 462.2ZM494.4 483.7L496.7 483.2L492.4 494.1L489.9 494.5ZM512.1 458.2L513.3 457.6L511.1 468.9L509.6 469.5ZM505.2 491.3L507.1 490.7L503.7 501.9L501.7 502.4ZM513.7 498.3L514.9 497.6L512.7 509.0L511.2 509.6ZM506.7 531.5L508.6 530.9L505.2 542.1L503.1 542.7ZM519.1 504.7L519.7 504.0L518.8 515.5L517.9 516.2ZM515.4 538.3L516.6 537.6L514.9 549.1L513.4 549.8Z" fill="#2de92d" stroke="#2de92d" stroke-width="0.5"/>
<path d="M520.9 556.3L521.7 555.5L520.8 567.1L519.6 567.8ZM524.8 562.3L525.0 561.5L524.9 573.1L524.4 573.9ZM491.3 707.6L494.3 707.2L488.6 718.1L485.5 718.5ZM526.2 602.1L526.4 601.3L526.3 612.9L525.9 613.8ZM526.7 611.0L526.7 611.0L527.0 621.0L527.0 621.0ZM508.1 755.6L510.7 755.0L505.7 766.2L502.9 766.8ZM528.0 651.0L528.0 651.0L528.4 661.0L528.4 661.0ZM487.2 413.5L489.4 413.1L485.3 423.9L482.9 424.2ZM498.2 421.7L500.1 421.2L496.7 432.3L494.6 432.7ZM500.3 462.2L502.2 461.7L498.5 472.7L496.3 473.2ZM509.6 469.5L511.1 468.9L508.4 480.1L506.7 480.7ZM511.2 509.6L512.7 509.0L510.0 520.3L508.2 520.9ZM517.9 516.2L518.8 515.5L517.3 526.9L516.2 527.6Z" fill="#2feb2f" stroke="#2feb2f" stroke-width="0.5"/>
<path d="M519.6 567.8L520.8 567.1L518.7 578.6L517.2 579.3ZM525.9 613.8L526.3 612.9L525.7 624.6L524.9 625.4ZM528.4 661.0L528.4 661.0L528.7 671.0L528.7 671.0Z" fill="#3ef03e" stroke="#3ef03e" stroke-width="0.5"/>
<path d="M517.2 579.3L518.7 578.6L516.0 590.1L514.3 590.8ZM524.9 625.4L525.7 624.6L524.4 636.2L523.4 637.0ZM504.8 532.1L506.7 531.5L503.1 542.7L501.0 543.2Z" fill="#73fc73" stroke="#73fc73" stroke-width="0.5"/>
<path d="M514.3 590.8L516.0 590.1L512.8 601.5L510.9 602.1ZM504.9 624.0L507.3 623.5L502.8 634.7L500.3 635.2ZM517.2 671.0L519.0 670.2L515.7 681.7L513.7 682.4ZM527.2 717.0L528.3 716.1L526.7 727.9L525.4 728.7ZM532.9 762.2L533.0 761.3L532.6 773.1L532.1 774.1ZM473.4 445.3L476.0 445.1L471.0 455.6L468.3 455.7ZM487.5 494.8L489.9 494.5L485.2 505.2L482.5 505.5ZM474.8 526.3L477.6 526.2L472.2 536.6L469.3 536.7ZM515.3 392.1L515.5 391.5L515.4 402.8L515.0 403.5ZM501.0 543.2L503.1 542.7L499.5 553.9L497.1 554.3ZM490.7 576.0L493.4 575.6L488.2 586.4L485.3 586.8ZM518.3 441.0L518.3 441.0L518.9 451.0L518.9 451.0Z" fill="#93ff93" stroke="#93ff93" stroke-width="0.5"/>
<path d="M510.9 602.1L512.8 601.5L509.1 612.8L506.9 613.4ZM521.3 648.7L522.6 647.9L520.2 659.4L518.6 660.2ZM497.1 554.3L499.5 553.9L495.3 565.0L492.7 565.4Z" fill="#5ff65f" stroke="#5ff65f" stroke-width="0.5"/>
<path d="M506.9 613.4L509.1 612.8L504.9 624.0L502.5 624.6ZM518.6 660.2L520.2 659.4L517.2 671.0L515.4 671.7ZM463.0 465.9L465.7 465.9L460.4 476.0L457.6 475.9ZM477.4 516.1L480.1 515.9L474.8 526.3L472.0 526.5ZM492.7 565.4L495.3 565.0L490.7 576.0L487.9 576.3Z" fill="#35ea35" stroke="#35ea35" stroke-width="0.5"/>
<path d="M492.4 646.6L495.2 646.2L489.8 657.1L486.8 657.5ZM523.0 541.6L523.0 541.0L523.9 552.3L523.6 553.1ZM507.3 694.5L509.7 693.8L505.3 705.1L502.7 705.7ZM521.1 741.2L522.9 740.4L519.8 752.1L517.7 752.8ZM446.8 495.6L449.5 495.8L444.1 505.5L441.5 505.2ZM460.8 546.9L463.7 546.9L458.0 557.2L455.1 557.1ZM476.7 597.6L479.7 597.4L473.8 607.9L470.7 608.0ZM518.0 495.5L518.7 494.8L517.5 506.2L516.5 506.9Z" fill="#28de28" stroke="#28de28" stroke-width="0.5"/>
<path d="M486.8 657.5L489.8 657.1L484.0 667.9L480.9 668.2ZM523.6 553.1L523.9 552.3L524.1 563.9L523.5 564.7ZM525.2 572.2L525.3 571.4L525.2 583.0L524.8 583.9ZM502.7 705.7L505.3 705.1L500.5 716.3L497.6 716.9ZM504.8 746.1L507.5 745.5L502.6 756.8L499.6 757.3ZM527.0 621.0L527.0 621.0L527.4 631.0L527.4 631.0ZM517.7 752.8L519.8 752.1L515.9 763.6L513.5 764.3ZM441.5 505.2L444.1 505.5L438.8 515.1L436.3 514.7ZM495.8 412.0L497.7 411.6L494.2 422.6L492.0 422.9ZM455.1 557.1L458.0 557.2L452.2 567.2L449.2 567.1ZM507.6 460.0L509.2 459.4L506.3 470.7L504.5 471.2ZM510.0 479.5L511.5 478.9L508.8 490.2L507.1 490.7ZM470.7 608.0L473.8 607.9L467.7 618.2L464.5 618.3ZM516.5 506.9L517.5 506.2L515.7 517.6L514.5 518.3ZM518.3 526.2L519.2 525.5L517.8 536.9L516.6 537.6Z" fill="#27d927" stroke="#27d927" stroke-width="0.5"/>
<path d="M474.8 678.7L478.0 678.5L471.7 689.0L468.4 689.1ZM522.2 576.3L523.1 575.5L521.5 587.1L520.4 587.9ZM475.7 719.2L479.0 719.0L472.7 729.6L469.3 729.7ZM524.1 551.0L524.1 551.0L525.0 561.0L525.0 561.0ZM492.2 727.9L495.2 727.4L489.5 738.4L486.3 738.7ZM493.9 768.3L497.0 767.8L490.9 778.7L487.6 779.1ZM508.6 775.6L511.2 774.9L506.1 786.2L503.3 786.7ZM474.7 384.5L477.2 384.4L472.4 394.7L469.9 394.8ZM431.2 524.1L433.6 524.5L428.7 533.8L426.4 533.3ZM488.0 433.8L490.3 433.4L486.0 444.2L483.5 444.5ZM443.3 576.9L446.2 577.1L440.3 586.8L437.5 586.4ZM500.9 482.3L503.0 481.8L499.2 492.8L497.0 493.3ZM514.4 456.9L515.5 456.2L513.7 467.6L512.5 468.2ZM458.3 628.4L461.4 628.4L455.1 638.4L452.0 638.3ZM512.0 529.7L513.5 529.0L510.8 540.3L509.0 541.0ZM520.2 503.2L520.5 502.5L520.1 514.0L519.5 514.7Z" fill="#22ce22" stroke="#22ce22" stroke-width="0.5"/>
<path d="M468.4 689.1L471.7 689.0L465.2 699.3L461.9 699.3ZM522.0 531.6L522.0 531.0L522.8 542.4L522.5 543.1ZM520.4 587.9L521.5 587.1L519.4 598.6L518.0 599.4ZM486.3 738.7L489.5 738.4L483.4 749.2L480.1 749.5ZM482.3 404.0L484.6 403.7L480.2 414.2L477.7 414.4ZM426.4 533.3L428.7 533.8L423.9 542.9L421.8 542.4ZM495.6 453.0L497.7 452.5L493.8 463.5L491.5 463.9ZM437.5 586.4L440.3 586.8L434.5 596.2L431.8 595.8ZM507.4 500.8L509.2 500.2L506.0 511.4L504.0 512.0ZM452.0 638.3L455.1 638.4L448.8 648.3L445.7 648.1ZM517.6 485.5L518.3 484.8L517.1 496.2L516.1 496.9ZM509.0 541.0L510.8 540.3L508.1 551.7L506.1 552.3Z" fill="#20c720" stroke="#20c720" stroke-width="0.5"/>
<path d="M461.9 699.3L465.2 699.3L458.7 709.5L455.4 709.4ZM518.0 599.4L519.4 598.6L516.8 610.1L515.0 610.8ZM480.1 749.5L483.4 749.2L477.0 759.9L473.6 760.1ZM531.4 765.1L532.1 764.1L530.7 775.9L529.7 776.8ZM465.1 404.8L467.6 404.8L462.7 414.9L460.2 414.9ZM421.8 542.4L423.9 542.9L419.1 552.1L417.2 551.5ZM478.8 455.1L481.4 454.9L476.4 465.5L473.8 465.6ZM431.8 595.8L434.5 596.2L428.9 605.5L426.3 605.1ZM492.7 504.2L495.0 503.8L490.5 514.7L488.0 515.0ZM516.4 434.1L517.0 433.4L516.5 444.8L515.7 445.5ZM445.7 648.1L448.8 648.3L442.5 658.0L439.4 657.7ZM506.1 552.3L508.1 551.7L504.8 563.0L502.6 563.6ZM520.1 481.0L520.1 481.0L520.4 491.0L520.4 491.8Z" fill="#1fc01f" stroke="#1fc01f" stroke-width="0.5"/>
<path d="M455.4 709.4L458.7 709.5L452.1 719.5L448.8 719.4ZM515.0 610.8L516.8 610.1L513.5 621.5L511.6 622.2ZM473.6 760.1L477.0 759.9L470.4 770.3L466.9 770.4ZM532.5 753.2L532.8 752.3L532.1 764.1L531.4 765.1ZM460.2 414.9L462.7 414.9L457.7 425.0L455.1 424.9ZM417.2 551.5L419.1 552.1L414.6 561.1L412.8 560.4ZM473.8 465.6L476.4 465.5L471.3 475.9L468.5 476.0ZM426.3 605.1L428.9 605.5L423.5 614.7L421.0 614.2ZM488.0 515.0L490.5 514.7L485.7 525.4L483.0 525.7ZM516.7 422.7L516.9 422.0L517.0 433.4L516.4 434.1ZM439.4 657.7L442.5 658.0L436.3 667.6L433.3 667.2ZM502.6 563.6L504.8 563.0L501.0 574.2L498.5 574.7ZM519.7 471.0L519.7 471.0L520.1 481.0L520.1 481.0Z" fill="#1eb81e" stroke="#1eb81e" stroke-width="0.5"/>
<path d="M442.2 729.1L445.5 729.4L438.9 739.0L435.6 738.7ZM507.6 633.5L509.8 632.9L505.6 644.2L503.1 644.7ZM460.0 780.4L463.6 780.4L456.7 790.4L453.2 790.3ZM532.1 731.0L532.1 731.0L532.7 741.0L532.7 741.4ZM438.3 382.9L440.5 383.3L436.3 392.6L434.3 392.2ZM450.0 434.8L452.5 435.0L447.4 444.8L444.9 444.6ZM408.9 569.2L410.4 569.9L407.0 578.6L405.7 577.8ZM463.2 486.1L465.9 486.1L460.5 496.3L457.7 496.2ZM416.1 623.2L418.4 623.8L413.6 632.7L411.5 632.0ZM477.8 536.3L480.5 536.1L475.2 546.6L472.3 546.7ZM515.8 401.0L515.8 401.0L516.4 411.0L516.4 411.4ZM427.3 676.5L430.2 677.0L424.3 686.2L421.6 685.7ZM493.6 585.7L496.3 585.3L491.2 596.2L488.4 596.5Z" fill="#1ba71b" stroke="#1ba71b" stroke-width="0.5"/>
<path d="M435.6 738.7L438.9 739.0L432.3 748.5L429.2 748.1ZM503.1 644.7L505.6 644.2L500.9 655.3L498.3 655.8ZM531.5 721.0L531.5 721.0L532.1 731.0L532.1 731.0ZM434.3 392.2L436.3 392.6L432.4 401.8L430.5 401.4ZM444.9 444.6L447.4 444.8L442.2 454.5L439.8 454.2ZM405.7 577.8L407.0 578.6L404.0 587.2L402.9 586.4ZM457.7 496.2L460.5 496.3L455.0 506.2L452.2 506.1ZM411.5 632.0L413.6 632.7L409.2 641.4L407.3 640.7ZM472.3 546.7L475.2 546.6L469.8 557.1L466.8 557.2ZM515.5 391.0L515.5 391.0L515.8 401.0L515.8 401.0ZM421.6 685.7L424.3 686.2L418.7 695.3L416.1 694.7ZM517.7 431.0L517.7 431.0L518.3 441.0L518.3 441.0ZM488.4 596.5L491.2 596.2L485.7 607.0L482.8 607.2Z" fill="#1a9f1a" stroke="#1a9f1a" stroke-width="0.5"/>
<path d="M520.8 501.0L520.8 501.0L521.2 511.0L521.2 511.0ZM452.1 719.5L455.5 719.6L448.8 729.5L445.5 729.4ZM513.5 621.5L515.4 620.8L511.9 632.2L509.8 632.9ZM470.4 770.3L473.9 770.1L467.1 780.4L463.6 780.4ZM523.4 667.8L524.5 667.0L522.4 678.7L521.0 679.5ZM526.0 697.0L527.0 696.1L525.4 707.9L524.1 708.7ZM532.5 742.3L532.7 741.4L532.5 753.2L532.0 754.2ZM457.2 384.7L459.7 384.8L454.9 394.6L452.4 394.5ZM470.6 435.2L473.2 435.1L468.2 445.5L465.5 445.5ZM513.1 405.4L513.9 404.8L512.9 416.1L511.9 416.7ZM423.5 614.7L426.0 615.2L420.7 624.3L418.4 623.8ZM518.8 451.9L518.9 451.2L519.0 462.6L518.6 463.4ZM436.3 667.6L439.3 667.9L433.1 677.4L430.2 677.0Z" fill="#20c920" stroke="#20c920" stroke-width="0.5"/>
<path d="M522.0 543.9L522.5 543.1L522.5 554.7L521.7 555.5ZM478.0 678.5L481.1 678.3L474.9 688.8L471.7 689.0ZM523.1 575.5L523.8 574.7L522.6 586.3L521.5 587.1ZM524.1 551.0L524.1 551.0L525.0 561.0L525.0 561.5ZM479.0 719.0L482.3 718.8L476.1 729.4L472.7 729.6ZM526.0 591.0L526.0 591.0L526.4 601.0L526.4 601.3ZM495.2 727.4L498.1 727.0L492.6 738.0L489.5 738.4ZM512.5 703.2L514.7 702.5L510.8 714.0L508.4 714.6ZM527.0 621.2L527.0 621.0L527.3 632.0L527.0 632.8ZM497.0 767.8L500.0 767.3L494.1 778.3L490.9 778.7ZM514.9 743.5L517.1 742.8L513.2 754.3L510.7 755.0ZM511.2 774.9L513.7 774.3L508.8 785.5L506.1 786.2ZM525.2 749.6L526.7 748.8L523.9 760.5L522.1 761.3ZM477.2 384.4L479.6 384.2L474.9 394.5L472.4 394.7ZM490.3 433.4L492.5 433.1L488.3 443.9L486.0 444.2ZM503.1 410.1L504.7 409.6L502.0 420.8L500.1 421.2ZM505.4 450.5L507.1 450.0L504.1 461.2L502.2 461.7ZM446.2 577.1L449.2 577.3L443.2 587.0L440.3 586.8ZM503.0 481.8L504.9 481.3L501.3 492.4L499.2 492.8ZM513.3 457.6L514.4 456.9L512.5 468.2L511.1 468.9ZM445.9 617.7L448.9 617.9L442.8 627.6L439.8 627.3ZM514.9 497.6L516.1 496.9L514.1 508.3L512.7 509.0ZM461.4 628.4L464.6 628.4L458.3 638.5L455.1 638.4ZM513.5 529.0L514.9 528.3L512.4 539.7L510.8 540.3ZM519.7 504.0L520.2 503.2L519.5 514.7L518.8 515.5ZM461.7 668.9L464.9 668.9L458.4 679.0L455.2 679.0Z" fill="#29df29" stroke="#29df29" stroke-width="0.5"/>
<path d="M521.7 555.5L522.5 554.7L521.8 566.3L520.8 567.1ZM484.0 667.9L487.1 667.6L481.1 678.3L478.0 678.5ZM526.4 601.3L526.4 601.0L526.6 612.1L526.3 612.9ZM500.5 716.3L503.2 715.8L498.1 727.0L495.2 727.4ZM526.7 611.0L526.7 611.0L527.0 621.0L527.0 621.2ZM510.7 755.0L513.2 754.3L508.4 765.6L505.7 766.2ZM515.9 763.6L518.1 762.8L513.7 774.3L511.2 774.9ZM493.1 382.4L495.2 382.0L491.2 392.8L489.0 393.1ZM502.2 461.7L504.1 461.2L500.6 472.2L498.5 472.7ZM452.2 567.2L455.1 567.4L449.2 577.3L446.2 577.1ZM512.7 509.0L514.1 508.3L511.6 519.6L510.0 520.3ZM467.7 618.2L470.8 618.1L464.6 628.4L461.4 628.4Z" fill="#2ae32a" stroke="#2ae32a" stroke-width="0.5"/>
<path d="M516.0 590.1L517.6 589.3L514.7 600.8L512.8 601.5ZM522.9 596.3L523.8 595.5L522.3 607.1L521.1 607.9ZM524.4 636.2L525.3 635.4L523.8 647.0L522.6 647.9ZM493.1 748.1L496.1 747.7L490.4 758.7L487.1 759.0ZM527.6 641.9L527.7 641.0L527.7 652.7L527.3 653.6ZM529.0 681.7L529.1 681.0L529.4 692.6L529.1 693.5ZM529.7 691.0L529.7 691.0L530.3 701.0L530.3 701.0ZM532.1 731.0L532.1 731.0L532.7 741.0L532.7 741.0ZM488.7 454.1L491.1 453.7L486.7 464.5L484.2 464.8ZM489.9 494.5L492.4 494.1L487.7 504.9L485.2 505.2ZM501.7 502.4L503.7 501.9L499.9 513.0L497.6 513.5ZM515.8 401.0L515.8 401.0L516.4 411.0L516.4 411.0ZM503.1 542.7L505.2 542.1L501.8 553.4L499.5 553.9ZM513.4 549.8L514.9 549.1L512.7 560.6L510.9 561.2Z" fill="#2eeb2e" stroke="#2eeb2e" stroke-width="0.5"/>
<path d="M512.8 601.5L514.7 600.8L511.2 612.2L509.1 612.8ZM522.6 647.9L523.8 647.0L521.7 658.7L520.2 659.4ZM529.1 693.5L529.4 692.6L529.2 704.3L528.5 705.2ZM532.7 741.0L532.7 741.0L533.0 751.0L533.0 751.0Z" fill="#37ee37" stroke="#37ee37" stroke-width="0.5"/>
<path d="M509.1 612.8L511.2 612.2L507.3 623.5L504.9 624.0ZM480.1 515.9L482.8 515.6L477.6 526.2L474.8 526.3ZM495.3 565.0L497.8 564.5L493.4 575.6L490.7 576.0Z" fill="#61f861" stroke="#61f861" stroke-width="0.5"/>
<path d="M500.3 635.2L502.8 634.7L498.0 645.7L495.2 646.2ZM485.3 586.8L488.2 586.4L482.6 597.1L479.7 597.4Z" fill="#71fa71" stroke="#71fa71" stroke-width="0.5"/>
<path d="M495.2 646.2L498.0 645.7L492.7 656.7L489.8 657.1ZM509.7 693.8L511.9 693.2L507.8 704.5L505.3 705.1ZM463.7 546.9L466.6 546.9L460.9 557.2L458.0 557.2ZM479.7 597.4L482.6 597.1L476.8 607.7L473.8 607.9Z" fill="#3cec3c" stroke="#3cec3c" stroke-width="0.5"/>
<path d="M489.8 657.1L492.7 656.7L487.1 667.6L484.0 667.9ZM523.9 552.3L524.0 551.5L524.5 563.1L524.1 563.9ZM505.3 705.1L507.8 704.5L503.2 715.8L500.5 716.3ZM526.4 601.0L526.4 601.0L526.7 611.0L526.7 611.0ZM519.8 752.1L521.7 751.3L518.1 762.8L515.9 763.6ZM458.0 557.2L460.9 557.2L455.1 567.4L452.2 567.2ZM473.8 607.9L476.8 607.7L470.8 618.1L467.7 618.2Z" fill="#2de62d" stroke="#2de62d" stroke-width="0.5"/>
<path d="M445.5 729.4L448.8 729.5L442.2 739.3L438.9 739.0ZM509.8 632.9L511.9 632.2L507.9 643.6L505.6 644.2ZM463.6 780.4L467.1 780.4L460.2 790.4L456.7 790.4ZM521.0 679.5L522.4 678.7L519.8 690.3L518.0 691.0ZM527.2 685.3L527.9 684.4L527.0 696.1L526.0 697.0ZM532.1 731.0L532.1 731.0L532.7 741.4L532.5 742.3ZM440.5 383.3L442.8 383.6L438.5 393.0L436.3 392.6ZM452.5 435.0L455.1 435.1L449.9 445.0L447.4 444.8ZM465.9 486.1L468.7 486.1L463.2 496.3L460.5 496.3ZM509.8 387.4L510.9 386.8L508.6 397.9L507.3 398.5ZM418.4 623.8L420.7 624.3L415.7 633.3L413.6 632.7ZM480.5 536.1L483.2 535.8L478.0 546.4L475.2 546.6ZM515.8 401.0L515.8 401.0L516.4 411.4L516.3 412.1ZM430.2 677.0L433.1 677.4L427.1 686.7L424.3 686.2ZM496.3 585.3L498.8 584.8L493.9 595.8L491.2 596.2Z" fill="#1fc21f" stroke="#1fc21f" stroke-width="0.5"/>
<path d="M438.9 739.0L442.2 739.3L435.6 748.9L432.3 748.5ZM505.6 644.2L507.9 643.6L503.5 654.8L500.9 655.3ZM518.0 691.0L519.8 690.3L516.7 701.8L514.7 702.5ZM528.0 673.5L528.4 672.7L527.9 684.4L527.2 685.3ZM531.5 721.0L531.5 721.0L532.1 731.0L532.1 731.0ZM436.3 392.6L438.5 393.0L434.4 402.2L432.4 401.8ZM447.4 444.8L449.9 445.0L444.7 454.8L442.2 454.5ZM460.5 496.3L463.2 496.3L457.7 506.3L455.0 506.2ZM413.6 632.7L415.7 633.3L411.1 642.1L409.2 641.4ZM475.2 546.6L478.0 546.4L472.7 557.0L469.8 557.1ZM424.3 686.2L427.1 686.7L421.3 695.8L418.7 695.3ZM491.2 596.2L493.9 595.8L488.6 606.6L485.7 607.0Z" fill="#1eba1e" stroke="#1eba1e" stroke-width="0.5"/>
<path d="M432.3 748.5L435.6 748.9L429.1 758.3L426.0 757.9ZM500.9 655.3L503.5 654.8L498.6 665.9L495.8 666.4ZM514.7 702.5L516.7 701.8L513.1 713.3L510.8 714.0ZM528.3 661.8L528.4 661.0L528.4 672.7L528.0 673.5ZM530.9 711.0L530.9 711.0L531.5 721.0L531.5 721.0ZM432.4 401.8L434.4 402.2L430.4 411.5L428.5 411.0ZM442.2 454.5L444.7 454.8L439.5 464.4L437.1 464.0ZM455.0 506.2L457.7 506.3L452.2 516.2L449.4 516.1ZM504.7 409.6L506.3 409.1L503.7 420.2L502.0 420.8ZM409.2 641.4L411.1 642.1L406.9 650.8L405.2 650.1ZM469.8 557.1L472.7 557.0L467.1 567.5L464.1 567.5ZM515.5 381.0L515.5 381.0L515.5 391.0L515.5 391.0ZM418.7 695.3L421.3 695.8L415.8 704.9L413.4 704.2ZM485.7 607.0L488.6 606.6L483.0 617.4L480.0 617.6Z" fill="#1db21d" stroke="#1db21d" stroke-width="0.5"/>
<path d="M426.0 757.9L429.1 758.3L423.0 767.5L420.0 767.0ZM495.8 666.4L498.6 665.9L493.2 676.9L490.3 677.3ZM510.8 714.0L513.1 713.3L509.0 724.7L506.4 725.3ZM528.0 651.0L528.0 651.0L528.4 661.0L528.3 661.8ZM438.3 423.3L440.6 423.6L435.8 433.1L433.6 432.7ZM500.8 380.7L502.6 380.2L499.2 391.1L497.3 391.6ZM405.2 650.1L406.9 650.8L403.1 659.5L401.6 658.7ZM413.4 704.2L415.8 704.9L410.7 713.8L408.4 713.1Z" fill="#1ba91b" stroke="#1ba91b" stroke-width="0.5"/>
<path d="M414.6 775.9L417.3 776.5L412.1 785.3L409.6 784.6ZM484.5 688.1L487.5 687.8L481.5 698.5L478.3 698.7ZM501.5 736.6L504.3 736.0L499.1 747.2L496.1 747.7ZM416.2 375.8L417.1 376.4L415.4 385.2L414.7 384.5ZM422.0 388.8L423.5 389.4L420.7 398.3L419.4 397.7ZM420.8 429.3L422.3 429.8L418.7 438.8L417.4 438.2ZM429.1 442.0L431.1 442.5L426.6 451.7L424.7 451.2ZM427.7 482.6L429.8 483.1L425.3 492.3L423.3 491.8ZM439.1 494.8L441.6 495.1L436.4 504.6L434.0 504.2ZM493.4 402.4L495.4 402.0L491.6 412.8L489.4 413.1ZM438.5 535.3L441.2 535.6L435.8 545.1L433.3 544.8ZM452.2 546.7L455.0 546.8L449.3 556.8L446.4 556.6ZM398.6 667.1L399.8 668.0L397.0 676.4L396.1 675.5ZM452.1 587.6L455.2 587.8L449.1 597.6L446.1 597.4ZM467.5 598.0L470.6 597.9L464.5 608.1L461.4 608.1ZM403.9 721.8L405.9 722.5L401.5 731.1L399.8 730.3ZM467.9 638.5L471.0 638.4L464.8 648.7L461.6 648.7Z" fill="#199b19" stroke="#199b19" stroke-width="0.5"/>
<path d="M521.8 566.3L522.7 565.5L521.2 577.1L520.0 577.8ZM526.6 612.1L526.7 611.2L526.7 622.9L526.2 623.7ZM528.4 661.0L528.4 661.0L528.7 671.0L528.7 671.0ZM511.6 519.6L513.1 519.0L510.3 530.3L508.6 530.9Z" fill="#26d926" stroke="#26d926" stroke-width="0.5"/>
<path d="M511.2 612.2L513.2 611.5L509.5 622.8L507.3 623.5ZM512.6 652.3L514.6 651.6L510.9 663.0L508.6 663.7ZM521.7 658.7L523.0 657.9L520.6 669.5L519.0 670.2ZM523.5 698.7L524.8 697.9L522.6 709.5L521.0 710.3ZM529.2 704.3L529.7 703.4L529.1 715.2L528.3 716.1ZM531.7 744.2L532.2 743.3L531.4 755.1L530.5 756.0ZM533.0 751.0L533.0 751.0L533.0 761.0L533.0 761.3ZM514.6 373.6L515.0 372.9L514.1 384.2L513.5 384.8ZM515.7 413.4L516.0 412.8L515.8 424.1L515.2 424.8ZM517.1 421.0L517.1 421.0L517.7 431.0L517.7 431.3ZM497.8 564.5L500.2 564.1L496.0 575.2L493.4 575.6ZM519.3 461.0L519.3 461.0L519.7 471.0L519.7 471.1ZM499.4 605.0L501.9 604.5L497.1 615.5L494.4 616.0Z" fill="#2ce82c" stroke="#2ce82c" stroke-width="0.5"/>
<path d="M502.8 634.7L505.3 634.1L500.6 645.3L498.0 645.7ZM522.0 531.0L522.0 531.0L523.0 541.0L523.0 541.0ZM515.7 681.7L517.6 681.0L514.1 692.5L511.9 693.2ZM526.7 727.9L527.9 727.0L526.0 738.7L524.5 739.6ZM505.8 389.1L507.2 388.5L504.4 399.6L502.8 400.1ZM514.2 436.2L515.1 435.5L513.8 446.9L512.7 447.5ZM488.2 586.4L490.9 586.1L485.5 596.9L482.6 597.1ZM519.8 482.6L520.0 481.8L519.8 493.3L519.3 494.0Z" fill="#32ec32" stroke="#32ec32" stroke-width="0.5"/>
<path d="M498.0 645.7L500.6 645.3L495.5 656.3L492.7 656.7ZM482.6 597.1L485.5 596.9L479.8 607.5L476.8 607.7Z" fill="#51f451" stroke="#51f451" stroke-width="0.5"/>
<path d="M492.7 656.7L495.5 656.3L490.1 667.2L487.1 667.6ZM507.8 704.5L510.2 703.9L505.9 715.2L503.2 715.8ZM521.7 751.3L523.5 750.5L520.2 762.1L518.1 762.8Z" fill="#8cff8c" stroke="#8cff8c" stroke-width="0.5"/>
<path d="M487.1 667.6L490.1 667.2L484.2 678.0L481.1 678.3ZM503.2 715.8L505.9 715.2L501.0 726.5L498.1 727.0Z" fill="#81ff81" stroke="#81ff81" stroke-width="0.5"/>
<path d="M481.1 678.3L484.2 678.0L478.2 688.6L474.9 688.8ZM498.1 727.0L501.0 726.5L495.7 737.6L492.6 738.0ZM513.7 774.3L516.0 773.5L511.4 784.9L508.8 785.5ZM464.6 628.4L467.8 628.3L461.5 638.5L458.3 638.5Z" fill="#46ef46" stroke="#46ef46" stroke-width="0.5"/>
<path d="M448.8 729.5L452.2 729.7L445.5 739.5L442.2 739.3ZM467.1 780.4L470.6 780.3L463.8 790.4L460.2 790.4ZM513.5 394.8L514.2 394.1L513.1 405.4L512.3 406.1ZM514.7 393.5L515.1 392.8L514.5 404.1L513.9 404.8ZM518.3 441.3L518.3 441.0L518.8 451.9L518.6 452.7Z" fill="#26d626" stroke="#26d626" stroke-width="0.5"/>
<path d="M442.2 739.3L445.5 739.5L438.9 749.2L435.6 748.9ZM520.5 628.6L521.9 627.9L519.5 639.4L517.9 640.2ZM527.5 674.4L528.0 673.5L527.2 685.3L526.3 686.1ZM531.5 721.0L531.5 721.0L532.1 731.0L532.1 731.4ZM514.6 383.5L515.0 382.9L514.2 394.1L513.5 394.8ZM513.9 404.8L514.5 404.1L513.8 415.5L512.9 416.1ZM517.7 431.0L517.7 431.0L518.3 441.0L518.3 441.3ZM427.1 686.7L430.0 687.1L424.1 696.3L421.3 695.8Z" fill="#23d123" stroke="#23d123" stroke-width="0.5"/>
<path d="M435.6 748.9L438.9 749.2L432.3 758.7L429.1 758.3ZM503.5 654.8L505.9 654.2L501.2 665.4L498.6 665.9ZM522.7 617.1L523.7 616.3L521.9 627.9L520.5 628.6ZM516.7 701.8L518.6 701.1L515.3 712.6L513.1 713.3ZM528.1 662.7L528.3 661.8L528.0 673.5L527.5 674.4ZM528.0 747.9L529.2 747.0L527.0 758.7L525.6 759.6ZM530.9 711.0L530.9 711.0L531.5 721.0L531.5 721.0ZM434.4 402.2L436.5 402.6L432.3 411.9L430.4 411.5ZM444.7 454.8L447.2 455.0L442.0 464.7L439.5 464.4ZM457.7 506.3L460.5 506.4L455.0 516.4L452.2 516.2ZM506.3 409.1L507.7 408.5L505.3 419.7L503.7 420.2ZM512.9 416.1L513.8 415.5L512.5 426.8L511.4 427.4ZM472.7 557.0L475.6 556.9L470.1 567.4L467.1 567.5ZM515.5 381.0L515.5 381.0L515.5 391.0L515.5 391.0ZM515.5 456.2L516.3 455.5L514.8 466.9L513.7 467.6ZM421.3 695.8L424.1 696.3L418.4 705.5L415.8 704.9ZM488.6 606.6L491.4 606.3L486.0 617.1L483.0 617.4Z" fill="#21cb21" stroke="#21cb21" stroke-width="0.5"/>
<path d="M429.1 758.3L432.3 758.7L426.0 768.0L423.0 767.5ZM498.6 665.9L501.2 665.4L496.1 676.5L493.2 676.9ZM524.2 605.5L524.9 604.6L523.7 616.3L522.7 617.1ZM513.1 713.3L515.3 712.6L511.4 724.1L509.0 724.7ZM528.0 651.0L528.0 651.0L528.3 661.8L528.1 662.7ZM525.6 759.6L527.0 758.7L524.0 770.4L522.2 771.2ZM430.4 411.5L432.3 411.9L428.1 421.2L426.3 420.7ZM439.5 464.4L442.0 464.7L436.9 474.2L434.6 473.8ZM502.6 380.2L504.2 379.7L501.0 390.7L499.2 391.1ZM452.2 516.2L455.0 516.4L449.4 526.2L446.6 526.0ZM467.1 567.5L470.1 567.4L464.3 577.7L461.2 577.7ZM513.7 467.6L514.8 466.9L512.9 478.2L511.5 478.9ZM415.8 704.9L418.4 705.5L413.1 714.4L410.7 713.8ZM483.0 617.4L486.0 617.1L480.2 627.7L477.1 627.9Z" fill="#1fc41f" stroke="#1fc41f" stroke-width="0.5"/>
<path d="M423.0 767.5L426.0 768.0L420.2 777.0L417.3 776.5ZM493.2 676.9L496.1 676.5L490.6 687.4L487.5 687.8ZM525.2 593.8L525.6 593.0L524.9 604.6L524.2 605.5ZM509.0 724.7L511.4 724.1L507.0 735.4L504.3 736.0ZM527.7 641.0L527.7 641.0L528.0 651.0L528.0 651.0ZM522.2 771.2L524.0 770.4L520.4 782.0L518.4 782.7ZM499.2 391.1L501.0 390.7L497.4 401.6L495.4 402.0ZM446.6 526.0L449.4 526.2L443.9 535.9L441.2 535.6ZM509.5 438.7L510.8 438.1L508.6 449.4L507.1 450.0ZM461.2 577.7L464.3 577.7L458.2 587.8L455.2 587.8ZM410.7 713.8L413.1 714.4L408.0 723.2L405.9 722.5ZM477.1 627.9L480.2 627.7L474.2 638.2L471.0 638.4Z" fill="#1ebc1e" stroke="#1ebc1e" stroke-width="0.5"/>
<path d="M417.3 776.5L420.2 777.0L414.7 785.9L412.1 785.3ZM487.5 687.8L490.6 687.4L484.7 698.2L481.5 698.5ZM525.5 582.2L525.7 581.4L525.6 593.0L525.2 593.8ZM504.3 736.0L507.0 735.4L502.0 746.7L499.1 747.2ZM527.4 631.0L527.4 631.0L527.7 641.0L527.7 641.0ZM422.3 429.8L424.0 430.4L420.2 439.4L418.7 438.8ZM429.8 483.1L432.1 483.5L427.4 492.8L425.3 492.3ZM495.4 402.0L497.4 401.6L493.7 412.4L491.6 412.8ZM441.2 535.6L443.9 535.9L438.4 545.5L435.8 545.1ZM507.1 450.0L508.6 449.4L505.9 460.6L504.1 461.2ZM455.2 587.8L458.2 587.8L452.1 597.8L449.1 597.6ZM405.9 722.5L408.0 723.2L403.4 731.9L401.5 731.1ZM471.0 638.4L474.2 638.2L468.0 648.6L464.8 648.7Z" fill="#1db41d" stroke="#1db41d" stroke-width="0.5"/>
<path d="M521.2 511.0L521.2 511.0L521.6 521.0L521.6 521.0ZM469.0 719.5L472.4 719.4L465.9 729.8L462.5 729.8ZM487.4 769.1L490.7 768.7L484.3 779.4L481.0 779.7ZM412.6 456.5L413.6 457.2L411.1 465.9L410.3 465.2ZM417.2 510.3L418.9 510.9L415.1 519.8L413.6 519.1ZM470.5 425.0L473.0 424.9L468.0 435.3L465.4 435.3ZM425.1 563.9L427.5 564.4L422.3 573.6L420.0 573.1ZM484.4 474.9L486.9 474.6L482.1 485.3L479.5 485.5ZM437.0 616.9L439.9 617.2L434.0 626.6L431.2 626.2ZM498.0 523.5L500.2 523.1L496.0 534.1L493.6 534.5ZM451.9 668.7L455.2 668.8L448.7 678.7L445.5 678.5Z" fill="#199d19" stroke="#199d19" stroke-width="0.5"/>
<path d="M521.2 577.1L522.2 576.3L520.4 587.9L519.1 588.6ZM526.7 622.9L526.9 622.0L526.6 633.7L526.0 634.5ZM519.2 742.0L521.1 741.2L517.7 752.8L515.5 753.6ZM528.7 671.0L528.7 671.0L529.1 681.0L529.1 681.0ZM420.4 736.5L423.3 737.0L417.4 746.1L414.7 745.5Z" fill="#21cc21" stroke="#21cc21" stroke-width="0.5"/>
<path d="M484.2 678.0L487.3 677.7L481.3 688.4L478.2 688.6Z" fill="#44f144" stroke="#44f144" stroke-width="0.5"/>
<path d="M478.2 688.6L481.3 688.4L475.1 698.9L471.8 699.1ZM495.7 737.6L498.6 737.1L493.1 748.1L489.9 748.5Z" fill="#7eff7e" stroke="#7eff7e" stroke-width="0.5"/>
<path d="M471.8 699.1L475.1 698.9L468.8 709.4L465.4 709.5ZM489.9 748.5L493.1 748.1L487.1 759.0L483.8 759.3Z" fill="#8eff8e" stroke="#8eff8e" stroke-width="0.5"/>
<path d="M465.4 709.5L468.8 709.4L462.3 719.7L458.9 719.7ZM483.8 759.3L487.1 759.0L480.7 769.7L477.3 769.9Z" fill="#54f354" stroke="#54f354" stroke-width="0.5"/>
<path d="M458.9 719.7L462.3 719.7L455.6 729.8L452.2 729.7ZM517.1 620.1L518.7 619.4L515.8 630.9L513.9 631.6ZM525.6 666.2L526.4 665.3L524.9 677.0L523.7 677.8ZM530.8 711.6L530.9 711.0L531.3 722.4L530.9 723.4ZM476.6 475.6L479.3 475.4L474.1 485.9L471.4 486.0ZM490.8 524.8L493.3 524.4L488.5 535.2L485.9 535.5ZM505.6 573.2L507.8 572.6L503.7 583.8L501.3 584.3Z" fill="#32e932" stroke="#32e932" stroke-width="0.5"/>
<path d="M523.5 564.7L524.1 563.9L523.1 575.5L522.2 576.3ZM481.9 708.6L485.1 708.3L479.0 719.0L475.7 719.2ZM525.0 561.0L525.0 561.0L525.3 571.4L525.2 572.2ZM524.9 604.6L525.5 603.8L524.6 615.4L523.7 616.3ZM499.6 757.3L502.6 756.8L497.0 767.8L493.9 768.3ZM523.9 760.5L525.6 759.6L522.2 771.2L520.3 772.0ZM436.3 514.7L438.8 515.1L433.6 524.5L431.2 524.1ZM492.0 422.9L494.2 422.6L490.3 433.4L488.0 433.8ZM435.5 555.4L438.1 555.8L432.5 565.3L430.0 564.9ZM504.5 471.2L506.3 470.7L503.0 481.8L500.9 482.3ZM449.0 607.8L452.1 607.9L445.9 617.7L442.9 617.5ZM512.5 468.2L513.7 467.6L511.5 478.9L510.0 479.5ZM514.5 518.3L515.7 517.6L513.5 529.0L512.0 529.7ZM464.8 658.8L468.1 658.7L461.7 668.9L458.4 668.9ZM519.5 514.7L520.1 514.0L519.2 525.5L518.3 526.2Z" fill="#25d425" stroke="#25d425" stroke-width="0.5"/>
<path d="M511.6 622.2L513.5 621.5L509.8 632.9L507.6 633.5ZM449.1 760.1L452.6 760.2L445.8 770.0L442.3 769.8ZM455.1 424.9L457.7 425.0L452.5 435.0L450.0 434.8ZM468.5 476.0L471.3 475.9L465.9 486.1L463.2 486.1ZM483.0 525.7L485.7 525.4L480.5 536.1L477.8 536.3ZM516.4 411.4L516.4 411.0L516.9 422.0L516.7 422.7ZM498.5 574.7L501.0 574.2L496.3 585.3L493.6 585.7ZM432.7 707.8L435.8 708.2L429.5 717.6L426.6 717.2Z" fill="#1cb01c" stroke="#1cb01c" stroke-width="0.5"/>
<path d="M521.6 521.0L521.6 521.0L522.0 531.0L522.0 531.0ZM473.0 739.7L476.4 739.6L469.8 750.0L466.4 750.1ZM523.4 637.0L524.4 636.2L522.6 647.9L521.3 648.7ZM528.8 682.6L529.0 681.7L529.1 693.5L528.5 694.4ZM532.1 731.0L532.1 731.0L532.7 741.0L532.7 741.0ZM507.1 378.6L508.5 378.0L505.8 389.1L504.3 389.6ZM514.4 425.5L515.2 424.8L514.2 436.2L513.2 436.8ZM519.6 471.9L519.7 471.1L519.8 482.6L519.4 483.3Z" fill="#92ff92" stroke="#92ff92" stroke-width="0.5"/>
<path d="M522.0 531.0L522.0 531.0L523.0 541.0L523.0 541.0ZM504.3 389.6L505.8 389.1L502.8 400.1L501.1 400.6ZM513.2 436.8L514.2 436.2L512.7 447.5L511.5 448.1ZM519.4 483.3L519.8 482.6L519.3 494.0L518.7 494.8Z" fill="#74fb74" stroke="#74fb74" stroke-width="0.5"/>
<path d="M523.0 541.0L523.0 541.0L524.0 551.5L523.9 552.3ZM511.5 448.1L512.7 447.5L510.7 458.8L509.2 459.4ZM518.7 494.8L519.3 494.0L518.4 505.5L517.5 506.2Z" fill="#3ded3d" stroke="#3ded3d" stroke-width="0.5"/>
<path d="M490.3 677.3L493.2 676.9L487.5 687.8L484.5 688.1ZM506.4 725.3L509.0 724.7L504.3 736.0L501.5 736.6ZM527.7 641.0L527.7 641.0L528.0 651.0L528.0 651.0ZM424.5 420.2L426.3 420.7L422.3 429.8L420.8 429.3ZM432.3 473.4L434.6 473.8L429.8 483.1L427.7 482.6ZM486.6 383.5L488.9 383.1L484.5 393.7L482.1 394.0ZM443.9 525.8L446.6 526.0L441.2 535.6L438.5 535.3ZM498.7 431.8L500.7 431.4L497.2 442.4L495.1 442.8ZM401.6 658.7L403.1 659.5L399.8 668.0L398.6 667.1ZM458.2 577.7L461.2 577.7L455.2 587.8L452.1 587.6ZM474.0 628.1L477.1 627.9L471.0 638.4L467.9 638.5Z" fill="#1aa11a" stroke="#1aa11a" stroke-width="0.5"/>
<path d="M523.0 541.0L523.0 541.0L524.1 551.0L524.0 551.5ZM512.7 447.5L513.8 446.9L512.1 458.2L510.7 458.8ZM519.3 494.0L519.8 493.3L519.1 504.7L518.4 505.5Z" fill="#4ff44f" stroke="#4ff44f" stroke-width="0.5"/>
<path d="M524.5 563.1L524.8 562.3L524.4 573.9L523.8 574.7ZM496.2 422.1L498.2 421.7L494.6 432.7L492.5 433.1ZM508.0 470.1L509.6 469.5L506.7 480.7L504.9 481.3ZM516.9 516.9L517.9 516.2L516.2 527.6L514.9 528.3Z" fill="#84ff84" stroke="#84ff84" stroke-width="0.5"/>
<path d="M523.8 574.7L524.4 573.9L523.5 585.5L522.6 586.3ZM527.0 621.0L527.0 621.0L527.4 631.1L527.3 632.0ZM514.9 528.3L516.2 527.6L514.0 539.0L512.4 539.7Z" fill="#48f048" stroke="#48f048" stroke-width="0.5"/>
<path d="M522.6 586.3L523.5 585.5L521.9 597.1L520.7 597.9ZM527.3 632.0L527.4 631.1L527.4 642.8L527.0 643.7ZM529.1 681.0L529.1 681.0L529.7 691.0L529.7 691.0ZM474.9 394.5L477.3 394.4L472.6 404.7L470.1 404.7ZM488.3 443.9L490.7 443.6L486.3 454.4L483.9 454.7ZM501.3 492.4L503.3 491.8L499.5 502.9L497.3 503.4ZM515.5 391.0L515.5 391.0L515.8 401.0L515.8 401.0ZM512.4 539.7L514.0 539.0L511.7 550.5L510.0 551.1Z" fill="#2fe82f" stroke="#2fe82f" stroke-width="0.5"/>
<path d="M507.9 643.6L510.2 642.9L505.9 654.2L503.5 654.8ZM519.8 690.3L521.4 689.5L518.6 701.1L516.7 701.8ZM529.5 736.1L530.4 735.2L529.2 747.0L528.0 747.9ZM438.5 393.0L440.7 393.3L436.5 402.6L434.4 402.2ZM449.9 445.0L452.4 445.2L447.2 455.0L444.7 454.8ZM463.2 496.3L466.0 496.3L460.5 506.4L457.7 506.3ZM508.6 397.9L509.8 397.3L507.7 408.5L506.3 409.1ZM478.0 546.4L480.8 546.2L475.6 556.9L472.7 557.0ZM515.5 391.0L515.5 391.0L515.8 401.0L515.8 401.4ZM516.5 444.8L517.1 444.1L516.3 455.5L515.5 456.2ZM493.9 595.8L496.5 595.3L491.4 606.3L488.6 606.6Z" fill="#24d124" stroke="#24d124" stroke-width="0.5"/>
<path d="M481.5 698.5L484.7 698.2L478.7 708.9L475.4 709.1ZM499.1 747.2L502.0 746.7L496.6 757.8L493.5 758.2ZM418.7 438.8L420.2 439.4L416.7 448.3L415.4 447.7ZM425.3 492.3L427.4 492.8L423.0 501.9L421.1 501.3ZM479.9 404.2L482.3 404.0L477.7 414.4L475.3 414.6ZM435.8 545.1L438.4 545.5L432.9 555.0L430.4 554.6ZM493.4 453.4L495.6 453.0L491.5 463.9L489.1 464.2ZM449.1 597.6L452.1 597.8L446.0 607.6L443.0 607.3ZM505.6 501.4L507.4 500.8L504.0 512.0L502.0 512.5ZM464.8 648.7L468.0 648.6L461.6 658.8L458.4 658.8Z" fill="#1cac1c" stroke="#1cac1c" stroke-width="0.5"/>
<path d="M475.4 709.1L478.7 708.9L472.4 719.4L469.0 719.5ZM525.0 561.0L525.0 561.0L525.4 571.0L525.4 571.0ZM493.5 758.2L496.6 757.8L490.7 768.7L487.4 769.1ZM487.6 423.6L489.8 423.3L485.6 434.1L483.2 434.3ZM430.4 554.6L432.9 555.0L427.5 564.4L425.1 563.9ZM443.0 607.3L446.0 607.6L439.9 617.2L437.0 616.9ZM397.6 739.6L399.3 740.5L395.6 748.9L394.3 748.0ZM458.4 658.8L461.6 658.8L455.2 668.8L451.9 668.7Z" fill="#1aa31a" stroke="#1aa31a" stroke-width="0.5"/>
<path d="M524.4 573.9L524.9 573.1L524.2 584.7L523.5 585.5ZM527.0 621.0L527.0 621.0L527.4 631.0L527.4 631.1Z" fill="#43f143" stroke="#43f143" stroke-width="0.5"/>
<path d="M523.5 585.5L524.2 584.7L522.9 596.3L521.9 597.1ZM490.7 443.6L492.9 443.2L488.7 454.1L486.3 454.4ZM503.3 491.8L505.2 491.3L501.7 502.4L499.5 502.9ZM514.0 539.0L515.4 538.3L513.4 549.8L511.7 550.5Z" fill="#7bfe7b" stroke="#7bfe7b" stroke-width="0.5"/>
<path d="M519.8 608.6L521.1 607.9L518.7 619.4L517.1 620.1ZM495.3 513.9L497.6 513.5L493.3 524.4L490.8 524.8ZM509.0 561.9L510.9 561.2L507.8 572.6L505.6 573.2Z" fill="#57f457" stroke="#57f457" stroke-width="0.5"/>
<path d="M478.7 708.9L481.9 708.6L475.7 719.2L472.4 719.4ZM525.0 561.0L525.0 561.0L525.4 571.0L525.3 571.4ZM496.6 757.8L499.6 757.3L493.9 768.3L490.7 768.7ZM520.1 514.0L520.6 513.2L519.9 524.7L519.2 525.5Z" fill="#1fbe1f" stroke="#1fbe1f" stroke-width="0.5"/>
<path d="M472.4 719.4L475.7 719.2L469.3 729.7L465.9 729.8ZM524.1 551.0L524.1 551.0L525.0 561.0L525.0 561.0ZM490.7 768.7L493.9 768.3L487.6 779.1L484.3 779.4ZM420.3 470.4L422.1 471.0L418.3 479.9L416.7 479.3ZM472.3 384.7L474.7 384.5L469.9 394.8L467.4 394.8ZM428.9 523.6L431.2 524.1L426.4 533.3L424.2 532.8ZM485.6 434.1L488.0 433.8L483.5 444.5L481.1 444.8ZM498.8 482.8L500.9 482.3L497.0 493.3L494.7 493.7ZM510.3 530.3L512.0 529.7L509.0 541.0L507.2 541.6ZM520.5 502.5L520.7 501.7L520.6 513.2L520.1 514.0Z" fill="#1db61d" stroke="#1db61d" stroke-width="0.5"/>
<path d="M465.9 729.8L469.3 729.7L462.7 740.0L459.2 740.0ZM484.3 779.4L487.6 779.1L481.2 789.7L477.8 789.9ZM467.4 394.8L469.9 394.8L465.1 404.8L462.6 404.8ZM415.1 519.8L416.8 520.4L413.2 529.2L411.8 528.6ZM481.1 444.8L483.5 444.5L478.8 455.1L476.2 455.3ZM422.3 573.6L424.6 574.2L419.7 583.2L417.5 582.6ZM434.0 626.6L436.8 627.0L431.0 636.4L428.2 636.0ZM448.7 678.7L451.9 678.9L445.4 688.7L442.2 688.4ZM520.4 491.0L520.4 491.0L520.7 501.7L520.5 502.5Z" fill="#1cae1c" stroke="#1cae1c" stroke-width="0.5"/>
<path d="M521.1 607.9L522.3 607.1L520.2 618.6L518.7 619.4ZM527.3 653.6L527.7 652.7L527.1 664.5L526.4 665.3ZM530.3 701.0L530.3 701.0L530.9 711.0L530.9 711.0Z" fill="#3aef3a" stroke="#3aef3a" stroke-width="0.5"/>
<path d="M518.7 619.4L520.2 618.6L517.5 630.2L515.8 630.9ZM493.3 524.4L495.7 524.0L491.1 534.9L488.5 535.2ZM507.8 572.6L509.8 572.0L505.9 583.2L503.7 583.8Z" fill="#6afa6a" stroke="#6afa6a" stroke-width="0.5"/>
<path d="M512.3 642.3L514.3 641.6L510.5 653.0L508.3 653.6ZM483.5 545.9L486.2 545.6L481.3 556.4L478.4 556.7ZM499.1 594.9L501.6 594.4L496.8 605.4L494.2 605.9Z" fill="#68f868" stroke="#68f868" stroke-width="0.5"/>
<path d="M508.3 653.6L510.5 653.0L506.3 664.3L503.8 664.9ZM520.4 700.3L522.0 699.5L519.2 711.1L517.3 711.9ZM463.3 506.4L466.1 506.4L460.6 516.5L457.8 516.5ZM478.4 556.7L481.3 556.4L476.0 567.1L473.0 567.3ZM494.2 605.9L496.8 605.4L491.7 616.4L488.8 616.7Z" fill="#38eb38" stroke="#38eb38" stroke-width="0.5"/>
<path d="M522.3 607.1L523.3 606.3L521.5 617.9L520.2 618.6ZM527.7 652.7L528.0 651.9L527.7 663.6L527.1 664.5ZM499.9 513.0L502.0 512.5L498.0 523.5L495.7 524.0ZM512.7 560.6L514.4 559.9L511.8 571.4L509.8 572.0Z" fill="#2be62b" stroke="#2be62b" stroke-width="0.5"/>
<path d="M520.2 618.6L521.5 617.9L519.1 629.4L517.5 630.2ZM527.1 664.5L527.7 663.6L526.8 675.3L525.9 676.2ZM530.9 711.0L530.9 711.0L531.5 721.0L531.5 721.5ZM515.5 381.0L515.5 381.0L515.5 391.0L515.5 391.5ZM495.7 524.0L498.0 523.5L493.6 534.5L491.1 534.9ZM509.8 572.0L511.8 571.4L508.1 582.6L505.9 583.2Z" fill="#2de82d" stroke="#2de82d" stroke-width="0.5"/>
<path d="M517.5 630.2L519.1 629.4L516.1 640.9L514.3 641.6ZM525.9 676.2L526.8 675.3L525.3 687.0L524.2 687.8ZM531.5 721.5L531.5 721.0L531.9 732.4L531.6 733.3ZM513.5 384.8L514.1 384.2L512.8 395.5L511.9 396.1ZM515.5 391.5L515.5 391.0L515.7 402.1L515.4 402.8ZM491.1 534.9L493.6 534.5L488.8 545.3L486.2 545.6ZM517.7 431.3L517.7 431.0L518.2 442.0L518.0 442.7ZM505.9 583.2L508.1 582.6L504.0 593.9L501.6 594.4Z" fill="#2eea2e" stroke="#2eea2e" stroke-width="0.5"/>
<path d="M514.3 641.6L516.1 640.9L512.6 652.3L510.5 653.0ZM524.2 687.8L525.3 687.0L523.5 698.7L522.0 699.5ZM531.6 733.3L531.9 732.4L531.7 744.2L531.0 745.2ZM486.2 545.6L488.8 545.3L484.1 556.2L481.3 556.4ZM501.6 594.4L504.0 593.9L499.4 605.0L496.8 605.4Z" fill="#34ed34" stroke="#34ed34" stroke-width="0.5"/>
<path d="M510.5 653.0L512.6 652.3L508.6 663.7L506.3 664.3ZM481.3 556.4L484.1 556.2L478.9 566.9L476.0 567.1ZM496.8 605.4L499.4 605.0L494.4 616.0L491.7 616.4Z" fill="#59f659" stroke="#59f659" stroke-width="0.5"/>
<path d="M506.3 664.3L508.6 663.7L504.1 674.9L501.5 675.5ZM519.2 711.1L521.0 710.3L518.0 721.9L515.9 722.7ZM472.6 404.7L475.1 404.5L470.3 414.8L467.8 414.9ZM486.3 454.4L488.7 454.1L484.2 464.8L481.6 465.1ZM499.5 502.9L501.7 502.4L497.6 513.5L495.3 513.9ZM476.0 567.1L478.9 566.9L473.4 577.5L470.4 577.6ZM491.7 616.4L494.4 616.0L489.1 626.8L486.2 627.2Z" fill="#90ff90" stroke="#90ff90" stroke-width="0.5"/>
<path d="M501.5 675.5L504.1 674.9L499.1 686.1L496.4 686.5ZM486.2 627.2L489.1 626.8L483.4 637.6L480.4 637.8Z" fill="#79fd79" stroke="#79fd79" stroke-width="0.5"/>
<path d="M496.4 686.5L499.1 686.1L493.8 697.1L490.8 697.5Z" fill="#40ee40" stroke="#40ee40" stroke-width="0.5"/>
<path d="M504.1 674.9L506.6 674.3L501.8 685.5L499.1 686.1ZM518.0 721.9L519.9 721.2L516.5 732.7L514.3 733.4ZM528.5 767.8L529.6 766.9L527.2 778.6L525.8 779.5ZM489.1 626.8L491.9 626.4L486.4 637.3L483.4 637.6Z" fill="#31ec31" stroke="#31ec31" stroke-width="0.5"/>
<path d="M499.1 686.1L501.8 685.5L496.7 696.6L493.8 697.1ZM514.3 733.4L516.5 732.7L512.6 744.2L510.1 744.9Z" fill="#4bf34b" stroke="#4bf34b" stroke-width="0.5"/>
<path d="M493.8 697.1L496.7 696.6L491.3 707.6L488.2 708.0ZM510.1 744.9L512.6 744.2L508.1 755.6L505.4 756.2Z" fill="#86ff86" stroke="#86ff86" stroke-width="0.5"/>
<path d="M488.2 708.0L491.3 707.6L485.5 718.5L482.3 718.8ZM505.4 756.2L508.1 755.6L502.9 766.8L500.0 767.3ZM471.3 658.6L474.5 658.5L468.2 668.8L464.9 668.9Z" fill="#88ff88" stroke="#88ff88" stroke-width="0.5"/>
<path d="M482.3 718.8L485.5 718.5L479.4 729.2L476.1 729.4ZM464.9 668.9L468.2 668.8L461.7 679.1L458.4 679.0Z" fill="#4df14d" stroke="#4df14d" stroke-width="0.5"/>
<path d="M485.5 718.5L488.6 718.1L482.7 728.9L479.4 729.2Z" fill="#3ff03f" stroke="#3ff03f" stroke-width="0.5"/>
<path d="M479.4 729.2L482.7 728.9L476.4 739.6L473.0 739.7ZM497.2 777.8L500.2 777.3L494.3 788.2L491.1 788.7Z" fill="#76fd76" stroke="#76fd76" stroke-width="0.5"/>
<path d="M466.4 750.1L469.8 750.0L463.1 760.3L459.6 760.4Z" fill="#5cf55c" stroke="#5cf55c" stroke-width="0.5"/>
<path d="M459.6 760.4L463.1 760.3L456.3 770.4L452.7 770.3ZM527.6 706.1L528.5 705.2L527.2 717.0L526.1 717.9ZM533.0 751.3L533.0 751.0L532.9 762.2L532.6 763.2Z" fill="#34ea34" stroke="#34ea34" stroke-width="0.5"/>
<path d="M525.7 581.0L525.7 581.0L526.0 591.0L526.0 591.3Z" fill="#49f249" stroke="#49f249" stroke-width="0.5"/>
<path d="M520.2 659.4L521.7 658.7L519.0 670.2L517.2 671.0ZM528.5 705.2L529.2 704.3L528.3 716.1L527.2 717.0ZM533.0 751.0L533.0 751.0L533.0 761.3L532.9 762.2Z" fill="#62f862" stroke="#62f862" stroke-width="0.5"/>
<path d="M513.7 682.4L515.7 681.7L511.9 693.2L509.7 693.8ZM525.4 728.7L526.7 727.9L524.5 739.6L522.9 740.4Z" fill="#70fa70" stroke="#70fa70" stroke-width="0.5"/>
<path d="M511.9 693.2L514.1 692.5L510.2 703.9L507.8 704.5ZM524.5 739.6L526.0 738.7L523.5 750.5L521.7 751.3Z" fill="#52f452" stroke="#52f452" stroke-width="0.5"/>
<path d="M501.0 726.5L503.8 725.9L498.6 737.1L495.7 737.6ZM516.0 773.5L518.2 772.8L513.8 784.2L511.4 784.9Z" fill="#45f145" stroke="#45f145" stroke-width="0.5"/>
<path d="M477.3 769.9L480.7 769.7L474.1 780.1L470.6 780.3ZM515.5 381.5L515.5 381.0L515.3 392.1L515.1 392.8Z" fill="#31e931" stroke="#31e931" stroke-width="0.5"/>
<path d="M526.7 611.0L526.7 611.0L527.0 621.2L526.9 622.0ZM403.3 690.6L405.2 691.3L401.2 699.9L399.6 699.1ZM412.1 744.9L414.7 745.5L409.3 754.4L407.0 753.7Z" fill="#1caa1c" stroke="#1caa1c" stroke-width="0.5"/>
<path d="M487.1 759.0L490.4 758.7L484.1 769.4L480.7 769.7Z" fill="#3bef3b" stroke="#3bef3b" stroke-width="0.5"/>
<path d="M480.7 769.7L484.1 769.4L477.5 779.9L474.1 780.1Z" fill="#6dfb6d" stroke="#6dfb6d" stroke-width="0.5"/>
<path d="M527.4 631.1L527.4 631.0L527.6 641.9L527.4 642.8Z" fill="#7cfe7c" stroke="#7cfe7c" stroke-width="0.5"/>
<path d="M526.8 654.5L527.3 653.6L526.4 665.3L525.6 666.2Z" fill="#56f456" stroke="#56f456" stroke-width="0.5"/>
<path d="M526.4 665.3L527.1 664.5L525.9 676.2L524.9 677.0ZM530.9 711.0L530.9 711.0L531.5 721.5L531.3 722.4Z" fill="#6bfa6b" stroke="#6bfa6b" stroke-width="0.5"/>
<path d="M522.8 688.7L524.2 687.8L522.0 699.5L520.4 700.3ZM531.1 734.3L531.6 733.3L531.0 745.2L530.2 746.1Z" fill="#67f867" stroke="#67f867" stroke-width="0.5"/>
<path d="M522.0 699.5L523.5 698.7L521.0 710.3L519.2 711.1ZM531.0 745.2L531.7 744.2L530.5 756.0L529.5 757.0Z" fill="#5af65a" stroke="#5af65a" stroke-width="0.5"/>
<path d="M515.9 722.7L518.0 721.9L514.3 733.4L512.0 734.1ZM527.1 768.7L528.5 767.8L525.8 779.5L524.1 780.3Z" fill="#79fc79" stroke="#79fc79" stroke-width="0.5"/>
<path d="M512.0 734.1L514.3 733.4L510.1 744.9L507.5 745.5Z" fill="#40ed40" stroke="#40ed40" stroke-width="0.5"/>
<path d="M507.5 745.5L510.1 744.9L505.4 756.2L502.6 756.8ZM497.7 411.6L499.6 411.1L496.2 422.1L494.2 422.6ZM509.2 459.4L510.7 458.8L508.0 470.1L506.3 470.7ZM517.5 506.2L518.4 505.5L516.9 516.9L515.7 517.6Z" fill="#2de72d" stroke="#2de72d" stroke-width="0.5"/>
<path d="M500.0 767.3L502.9 766.8L497.2 777.8L494.1 778.3Z" fill="#4cf14c" stroke="#4cf14c" stroke-width="0.5"/>
<path d="M502.9 766.8L505.7 766.2L500.2 777.3L497.2 777.8Z" fill="#40f040" stroke="#40f040" stroke-width="0.5"/>
<path d="M528.4 661.0L528.4 661.0L528.7 671.0L528.6 671.8Z" fill="#4ff14f" stroke="#4ff14f" stroke-width="0.5"/>
<path d="M528.7 671.0L528.7 671.0L529.0 681.7L528.8 682.6Z" fill="#74fc74" stroke="#74fc74" stroke-width="0.5"/>
<path d="M528.5 694.4L529.1 693.5L528.5 705.2L527.6 706.1ZM532.7 741.0L532.7 741.0L533.0 751.0L533.0 751.3Z" fill="#5ef65e" stroke="#5ef65e" stroke-width="0.5"/>
<path d="M522.9 740.4L524.5 739.6L521.7 751.3L519.8 752.1Z" fill="#3bec3b" stroke="#3bec3b" stroke-width="0.5"/>
<path d="M518.1 762.8L520.2 762.1L516.0 773.5L513.7 774.3Z" fill="#81fe81" stroke="#81fe81" stroke-width="0.5"/>
<path d="M530.2 701.6L530.3 701.0L530.7 712.5L530.3 713.4ZM410.8 601.0L412.7 601.6L408.6 610.4L407.0 609.7ZM419.8 654.7L422.4 655.3L417.1 664.3L414.7 663.7Z" fill="#1cb11c" stroke="#1cb11c" stroke-width="0.5"/>
<path d="M530.3 701.0L530.3 701.0L530.9 711.0L530.8 711.6Z" fill="#56f356" stroke="#56f356" stroke-width="0.5"/>
<path d="M530.2 746.1L531.0 745.2L529.5 757.0L528.4 757.9Z" fill="#37eb37" stroke="#37eb37" stroke-width="0.5"/>
<path d="M529.5 757.0L530.5 756.0L528.5 767.8L527.1 768.7ZM515.8 401.0L515.8 401.0L516.4 411.0L516.4 411.0Z" fill="#91ff91" stroke="#91ff91" stroke-width="0.5"/>
<path d="M428.5 411.0L430.4 411.5L426.3 420.7L424.5 420.2ZM437.1 464.0L439.5 464.4L434.6 473.8L432.3 473.4ZM449.4 516.1L452.2 516.2L446.6 526.0L443.9 525.8ZM502.0 420.8L503.7 420.2L500.7 431.4L498.7 431.8ZM464.1 567.5L467.1 567.5L461.2 577.7L458.2 577.7ZM480.0 617.6L483.0 617.4L477.1 627.9L474.0 628.1Z" fill="#1baa1b" stroke="#1baa1b" stroke-width="0.5"/>
<path d="M415.4 447.7L416.7 448.3L413.6 457.2L412.6 456.5ZM421.1 501.3L423.0 501.9L418.9 510.9L417.2 510.3Z" fill="#1ba31b" stroke="#1ba31b" stroke-width="0.5"/>
<path d="M462.2 384.8L464.8 384.8L459.9 394.8L457.4 394.7ZM475.8 435.0L478.3 434.8L473.4 445.3L470.8 445.4Z" fill="#31e831" stroke="#31e831" stroke-width="0.5"/>
<path d="M424.3 461.4L426.2 461.9L422.1 471.0L420.3 470.4ZM433.8 514.3L436.3 514.7L431.2 524.1L428.9 523.6ZM489.8 423.3L492.0 422.9L488.0 433.8L485.6 434.1ZM446.3 566.9L449.2 567.1L443.3 576.9L440.5 576.6ZM502.6 471.7L504.5 471.2L500.9 482.3L498.8 482.8ZM513.1 519.0L514.5 518.3L512.0 529.7L510.3 530.3Z" fill="#1ebe1e" stroke="#1ebe1e" stroke-width="0.5"/>
<path d="M413.5 488.1L414.8 488.8L411.8 497.6L410.7 496.9ZM462.6 404.8L465.1 404.8L460.2 414.9L457.7 414.8ZM419.7 541.8L421.8 542.4L417.2 551.5L415.3 550.8ZM476.2 455.3L478.8 455.1L473.8 465.6L471.1 465.8ZM490.2 504.6L492.7 504.2L488.0 515.0L485.4 515.3ZM504.0 552.8L506.1 552.3L502.6 563.6L500.2 564.1ZM520.1 481.0L520.1 481.0L520.4 491.0L520.4 491.0Z" fill="#1ba51b" stroke="#1ba51b" stroke-width="0.5"/>
<path d="M457.7 425.0L460.2 425.1L455.1 435.1L452.5 435.0ZM471.3 475.9L474.0 475.8L468.7 486.1L465.9 486.1ZM485.7 525.4L488.3 525.1L483.2 535.8L480.5 536.1ZM501.0 574.2L503.3 573.7L498.8 584.8L496.3 585.3Z" fill="#21c921" stroke="#21c921" stroke-width="0.5"/>
<path d="M479.6 384.2L482.0 384.0L477.3 394.4L474.9 394.5ZM492.5 433.1L494.6 432.7L490.7 443.6L488.3 443.9ZM504.9 481.3L506.7 480.7L503.3 491.8L501.3 492.4Z" fill="#49f049" stroke="#49f049" stroke-width="0.5"/>
<path d="M482.0 384.0L484.3 383.7L479.8 394.2L477.3 394.4ZM494.6 432.7L496.7 432.3L492.9 443.2L490.7 443.6ZM506.7 480.7L508.4 480.1L505.2 491.3L503.3 491.8ZM516.2 527.6L517.3 526.9L515.4 538.3L514.0 539.0Z" fill="#42f142" stroke="#42f142" stroke-width="0.5"/>
<path d="M477.3 394.4L479.8 394.2L475.1 404.5L472.6 404.7Z" fill="#7afe7a" stroke="#7afe7a" stroke-width="0.5"/>
<path d="M467.8 414.9L470.3 414.8L465.4 425.1L462.8 425.1ZM481.6 465.1L484.2 464.8L479.3 475.4L476.6 475.6Z" fill="#58f458" stroke="#58f458" stroke-width="0.5"/>
<path d="M462.8 425.1L465.4 425.1L460.2 435.3L457.7 435.2ZM513.4 374.9L514.1 374.2L512.7 385.5L511.8 386.1ZM517.1 421.3L517.1 421.0L517.6 432.0L517.3 432.7Z" fill="#33e933" stroke="#33e933" stroke-width="0.5"/>
<path d="M495.2 382.0L497.1 381.6L493.3 392.4L491.2 392.8Z" fill="#7dfe7d" stroke="#7dfe7d" stroke-width="0.5"/>
<path d="M491.2 392.8L493.3 392.4L489.1 403.1L486.9 403.4ZM503.0 441.0L504.8 440.4L501.7 451.6L499.8 452.1Z" fill="#43ee43" stroke="#43ee43" stroke-width="0.5"/>
<path d="M489.1 403.1L491.3 402.8L487.2 413.5L484.9 413.8ZM501.7 451.6L503.6 451.1L500.3 462.2L498.2 462.6ZM470.8 618.1L473.9 618.0L467.8 628.3L464.6 628.4Z" fill="#82ff82" stroke="#82ff82" stroke-width="0.5"/>
<path d="M484.9 413.8L487.2 413.5L482.9 424.2L480.5 424.4ZM498.2 462.6L500.3 462.2L496.3 473.2L494.1 473.6ZM509.6 510.2L511.2 509.6L508.2 520.9L506.4 521.5ZM476.8 607.7L479.8 607.5L473.9 618.0L470.8 618.1Z" fill="#8bff8b" stroke="#8bff8b" stroke-width="0.5"/>
<path d="M480.5 424.4L482.9 424.2L478.3 434.8L475.8 435.0ZM494.1 473.6L496.3 473.2L492.1 484.0L489.7 484.4Z" fill="#50f250" stroke="#50f250" stroke-width="0.5"/>
<path d="M482.9 424.2L485.3 423.9L480.8 434.6L478.3 434.8ZM496.3 473.2L498.5 472.7L494.4 483.7L492.1 484.0Z" fill="#3def3d" stroke="#3def3d" stroke-width="0.5"/>
<path d="M478.3 434.8L480.8 434.6L476.0 445.1L473.4 445.3ZM492.1 484.0L494.4 483.7L489.9 494.5L487.5 494.8Z" fill="#72fc72" stroke="#72fc72" stroke-width="0.5"/>
<path d="M468.3 455.7L471.0 455.6L465.7 465.9L463.0 465.9ZM482.5 505.5L485.2 505.2L480.1 515.9L477.4 516.1Z" fill="#60f660" stroke="#60f660" stroke-width="0.5"/>
<path d="M501.1 400.6L502.8 400.1L499.6 411.1L497.7 411.6Z" fill="#3eed3e" stroke="#3eed3e" stroke-width="0.5"/>
<path d="M502.8 400.1L504.4 399.6L501.4 410.7L499.6 411.1Z" fill="#4ef44e" stroke="#4ef44e" stroke-width="0.5"/>
<path d="M499.6 411.1L501.4 410.7L498.2 421.7L496.2 422.1ZM510.7 458.8L512.1 458.2L509.6 469.5L508.0 470.1Z" fill="#89ff89" stroke="#89ff89" stroke-width="0.5"/>
<path d="M484.2 464.8L486.7 464.5L481.9 475.2L479.3 475.4Z" fill="#39ee39" stroke="#39ee39" stroke-width="0.5"/>
<path d="M479.3 475.4L481.9 475.2L476.8 485.7L474.1 485.9Z" fill="#69fa69" stroke="#69fa69" stroke-width="0.5"/>
<path d="M468.8 496.2L471.5 496.1L466.1 506.4L463.3 506.4Z" fill="#69f869" stroke="#69f869" stroke-width="0.5"/>
<path d="M503.7 420.2L505.3 419.7L502.5 430.9L500.7 431.4Z" fill="#1fc51f" stroke="#1fc51f" stroke-width="0.5"/>
<path d="M514.1 374.2L514.6 373.6L513.5 384.8L512.7 385.5Z" fill="#66f966" stroke="#66f966" stroke-width="0.5"/>
<path d="M510.9 396.7L511.9 396.1L510.2 407.3L509.0 407.9Z" fill="#6cf96c" stroke="#6cf96c" stroke-width="0.5"/>
<path d="M505.9 429.8L507.4 429.2L504.8 440.4L503.0 441.0Z" fill="#7dfd7d" stroke="#7dfd7d" stroke-width="0.5"/>
<path d="M449.2 567.1L452.2 567.2L446.2 577.1L443.3 576.9ZM464.5 618.3L467.7 618.2L461.4 628.4L458.3 628.4Z" fill="#24d424" stroke="#24d424" stroke-width="0.5"/>
<path d="M485.2 505.2L487.7 504.9L482.8 515.6L480.1 515.9ZM499.5 553.9L501.8 553.4L497.8 564.5L495.3 565.0Z" fill="#36ee36" stroke="#36ee36" stroke-width="0.5"/>
<path d="M469.3 536.7L472.2 536.6L466.6 546.9L463.7 546.9Z" fill="#71fb71" stroke="#71fb71" stroke-width="0.5"/>
<path d="M515.5 371.0L515.5 371.0L515.5 381.0L515.5 381.5Z" fill="#52f252" stroke="#52f252" stroke-width="0.5"/>
<path d="M515.5 371.0L515.5 371.0L515.5 381.0L515.5 381.0Z" fill="#3cef3c" stroke="#3cef3c" stroke-width="0.5"/>
<path d="M515.5 381.0L515.5 381.0L515.5 391.5L515.3 392.1Z" fill="#6ffb6f" stroke="#6ffb6f" stroke-width="0.5"/>
<path d="M515.0 403.5L515.4 402.8L515.1 414.1L514.5 414.8Z" fill="#63f763" stroke="#63f763" stroke-width="0.5"/>
<path d="M514.5 414.8L515.1 414.1L514.4 425.5L513.5 426.1ZM519.3 461.2L519.3 461.0L519.6 471.9L519.4 472.6Z" fill="#36ea36" stroke="#36ea36" stroke-width="0.5"/>
<path d="M515.4 402.8L515.7 402.1L515.7 413.4L515.1 414.1ZM518.9 451.0L518.9 451.0L519.3 461.0L519.3 461.0Z" fill="#36ed36" stroke="#36ed36" stroke-width="0.5"/>
<path d="M515.1 414.1L515.7 413.4L515.2 424.8L514.4 425.5ZM519.3 461.0L519.3 461.0L519.7 471.1L519.6 471.9Z" fill="#5ef75e" stroke="#5ef75e" stroke-width="0.5"/>
<path d="M497.6 513.5L499.9 513.0L495.7 524.0L493.3 524.4ZM510.9 561.2L512.7 560.6L509.8 572.0L507.8 572.6Z" fill="#3aee3a" stroke="#3aee3a" stroke-width="0.5"/>
<path d="M442.9 617.5L445.9 617.7L439.8 627.3L436.8 627.0ZM458.4 668.9L461.7 668.9L455.2 679.0L451.9 678.9Z" fill="#23ce23" stroke="#23ce23" stroke-width="0.5"/>
<path d="M470.4 577.6L473.4 577.5L467.4 587.8L464.3 587.9Z" fill="#7afd7a" stroke="#7afd7a" stroke-width="0.5"/>
<path d="M464.3 587.9L467.4 587.8L461.3 598.0L458.2 598.0ZM480.4 637.8L483.4 637.6L477.5 648.2L474.3 648.3Z" fill="#41ee41" stroke="#41ee41" stroke-width="0.5"/>
<path d="M516.4 411.0L516.4 411.0L517.1 421.0L517.1 421.3Z" fill="#5af45a" stroke="#5af45a" stroke-width="0.5"/>
<path d="M516.4 411.0L516.4 411.0L517.1 421.0L517.1 421.0Z" fill="#38ee38" stroke="#38ee38" stroke-width="0.5"/>
<path d="M517.1 421.0L517.1 421.0L517.7 431.3L517.6 432.0Z" fill="#67f967" stroke="#67f967" stroke-width="0.5"/>
<path d="M508.2 520.9L510.0 520.3L506.7 531.5L504.8 532.1Z" fill="#3eef3e" stroke="#3eef3e" stroke-width="0.5"/>
<path d="M458.3 638.5L461.5 638.5L455.1 648.6L452.0 648.5Z" fill="#2fe72f" stroke="#2fe72f" stroke-width="0.5"/>
<path d="M518.9 451.0L518.9 451.0L519.3 461.0L519.3 461.2Z" fill="#62f762" stroke="#62f762" stroke-width="0.5"/>
<path d="M483.4 637.6L486.4 637.3L480.6 647.9L477.5 648.2Z" fill="#4af34a" stroke="#4af34a" stroke-width="0.5"/>
<path d="M477.5 648.2L480.6 647.9L474.5 658.5L471.3 658.6Z" fill="#85ff85" stroke="#85ff85" stroke-width="0.5"/>
<path d="M520.7 497.0L520.8 502.1L520.7 507.3L520.6 512.4L520.4 517.6L520.1 522.8L519.6 527.9L519.1 533.1L518.6 538.3L518.1 543.4L517.5 548.6L516.8 553.8L516.0 559.0L515.0 564.1L514.0 569.3L512.5 574.4L511.0 579.5L509.3 584.6L507.6 589.6L505.8 594.7L503.8 599.7L501.8 604.7L499.7 609.7L497.5 614.6L495.2 619.6L492.9 624.5L490.5 629.4L488.0 634.2L485.4 639.1L482.8 643.9L480.2 648.6L477.4 653.4L474.7 658.1L471.9 662.8L469.0 667.5L466.2 672.1L463.3 676.7L460.3 681.2L457.4 685.7L454.5 690.2L451.5 694.7L448.6 699.1L445.6 703.5L442.7 707.9L439.8 712.2L436.9 716.5L434.1 720.8L431.3 725.0L428.4 729.3L425.7 733.4L423.0 737.6L420.3 741.7L417.7 745.7L415.1 749.8L412.6 753.8L410.2 757.8L408.0 761.7L405.9 765.6L404.0 769.4L402.2 773.2L400.5 777.0L398.9 780.8M523.1 542.5L523.4 547.7L523.6 552.9L523.6 558.1L523.6 563.3L523.1 568.5L522.5 573.7L521.8 578.9L521.0 584.1L520.1 589.3L519.1 594.5L517.9 599.6L516.7 604.8L515.3 609.9L513.8 615.0L512.2 620.2L510.5 625.3L508.8 630.3L506.9 635.4L504.9 640.5L502.8 645.5L500.7 650.5L498.4 655.5L496.1 660.4L493.7 665.3L491.2 670.2L488.7 675.1L486.1 680.0L483.4 684.8L480.6 689.6L477.9 694.3L475.0 699.1L472.2 703.8L469.4 708.4L466.5 713.1L463.5 717.7L460.6 722.3L457.6 726.8L454.6 731.4L451.6 735.8L448.5 740.3L445.5 744.7L442.5 749.1L439.5 753.4L436.5 757.7L433.5 762.0L430.6 766.2L427.9 770.3L425.2 774.4L422.6 778.4L420.0 782.5L417.5 786.5M525.7 582.8L525.7 588.0L525.6 593.3L525.4 598.5L525.0 603.7L524.5 608.9L524.0 614.2L523.3 619.4L522.4 624.6L521.5 629.8L520.4 635.0L519.3 640.2L518.0 645.4L516.6 650.5L515.1 655.7L513.5 660.8L511.8 665.9L509.9 671.1L508.0 676.1L506.0 681.2L503.9 686.2L501.7 691.3L499.4 696.3L497.1 701.2L494.7 706.2L492.3 711.1L489.7 716.0L487.1 720.9L484.4 725.8L481.7 730.6L478.9 735.4L476.0 740.1L473.1 744.9L470.1 749.6L467.1 754.2L464.1 758.9L461.0 763.4L457.9 768.0L454.9 772.4L451.8 776.8L448.8 781.2L445.8 785.5L442.8 789.8M527.1 623.1L527.1 628.4L527.0 633.6L526.8 638.9L526.4 644.1L526.0 649.4L525.4 654.6L524.7 659.9L523.9 665.1L522.9 670.3L521.8 675.6L520.7 680.8L519.4 686.0L518.0 691.2L516.5 696.3L515.0 701.5L513.4 706.7L511.6 711.8L509.7 716.9L507.8 722.0L505.7 727.1L503.5 732.2L501.2 737.2L498.9 742.2L496.4 747.2L493.9 752.1L491.2 757.1L488.5 762.0L485.7 766.8L482.8 771.6L479.8 776.3L476.9 781.0L473.9 785.6L470.8 790.3M528.4 663.4L528.5 668.7L528.4 674.0L528.2 679.3L527.9 684.5L527.5 689.8L527.1 695.1L526.5 700.4L525.8 705.6L524.9 710.9L524.0 716.1L522.9 721.4L521.7 726.6L520.3 731.9L518.9 737.1L517.3 742.3L515.6 747.4L513.8 752.6L511.8 757.8L509.7 762.8L507.4 767.9L505.0 772.9L502.5 777.9L500.0 782.8L497.4 787.8M530.4 703.7L530.6 709.0L530.7 714.3L530.6 719.6L530.4 724.9L530.1 730.3L529.6 735.6L529.0 740.9L528.3 746.2L527.4 751.5L526.3 756.7L524.9 762.0L523.5 767.2L521.9 772.4L520.2 777.6L518.4 782.7M417.1 376.4L416.3 380.4L415.6 384.3L414.9 388.2L414.4 392.2L413.9 396.1L413.4 400.0L412.9 403.9L412.4 407.8L411.9 411.7M532.9 749.4L532.7 754.7L532.4 760.0L532.0 765.3L531.4 770.6L530.7 775.9M428.4 380.9L426.8 385.0L425.4 389.0L424.0 393.0L422.7 397.1L421.4 401.1L420.2 405.1L418.8 409.1L417.5 413.1L416.2 417.1L415.0 421.1L413.9 425.0L412.9 428.9L411.9 432.9L411.1 436.8L410.3 440.7L409.6 444.6L409.0 448.4L408.6 452.3M445.1 383.8L443.1 388.1L441.1 392.3L439.2 396.6L437.3 400.7L435.5 404.9L433.6 409.1L431.7 413.3L429.8 417.5L427.9 421.6L426.0 425.7L424.2 429.8L422.5 433.9L420.8 438.0L419.1 442.0L417.6 446.0L416.1 450.0L414.7 454.0L413.4 458.0L412.2 461.9L411.1 465.8L410.2 469.7L409.3 473.6L408.5 477.5L407.8 481.3L407.2 485.2L406.7 489.0L406.3 492.9M464.8 384.8L462.6 389.3L460.4 393.8L458.2 398.2L456.0 402.6L453.9 407.0L451.7 411.4L449.5 415.8L447.3 420.2L445.0 424.6L442.8 428.9L440.6 433.2L438.4 437.5L436.2 441.8L434.0 446.0L431.9 450.2L429.8 454.4L427.8 458.6L425.8 462.7L423.9 466.8L422.1 470.9L420.4 474.9L418.7 478.9L417.1 482.9L415.5 486.9L414.1 490.9L412.7 494.8L411.4 498.7L410.2 502.7L409.1 506.6L408.1 510.4L407.1 514.3L406.3 518.2L405.6 522.0L404.9 525.8L404.4 529.7L403.9 533.5L403.3 537.3M484.3 383.7L482.3 388.4L480.2 393.1L478.1 397.8L476.0 402.4L473.9 407.1L471.7 411.7L469.6 416.3L467.4 421.0L465.1 425.6L462.8 430.1L460.5 434.7L458.2 439.2L455.9 443.7L453.5 448.2L451.1 452.7L448.8 457.1L446.4 461.5L444.0 465.8L441.7 470.1L439.4 474.4L437.2 478.7L434.9 482.9L432.7 487.1L430.6 491.3L428.5 495.4L426.4 499.5L424.4 503.6L422.5 507.7L420.6 511.8L418.8 515.8L417.0 519.8L415.4 523.8L413.8 527.7L412.2 531.7L410.8 535.6L409.4 539.5L407.9 543.5L406.5 547.4L405.3 551.2L404.1 555.1L403.0 558.9L402.0 562.8L401.3 566.6L400.7 570.3L400.2 574.1L399.9 577.9M500.8 380.7L499.3 385.6L497.6 390.5L496.0 395.4L494.2 400.2L492.4 405.0L490.6 409.9L488.8 414.7L487.0 419.6L485.1 424.4L483.1 429.2L481.0 434.0L478.9 438.7L476.7 443.5L474.5 448.2L472.3 452.9L470.0 457.6L467.6 462.2L465.3 466.8L462.8 471.4L460.4 475.9L458.0 480.4L455.6 484.9L453.1 489.3L450.7 493.7L448.2 498.1L445.8 502.5L443.4 506.8L441.0 511.1L438.6 515.4L436.3 519.6L434.0 523.8L431.7 528.0L429.5 532.2L427.3 536.3L425.2 540.5L423.0 544.6L420.9 548.7L418.7 552.8L416.7 556.8L414.7 560.9L412.8 564.9L410.9 568.8L409.3 572.7L407.7 576.6L406.3 580.5L404.9 584.4L403.6 588.2L402.5 592.0L401.4 595.9L400.4 599.7L399.6 603.4L398.8 607.2L398.2 611.0L397.7 614.7L397.3 618.5M511.8 376.2L510.9 381.2L510.0 386.2L509.0 391.3L507.8 396.3L506.7 401.2L505.5 406.2L504.4 411.2L503.1 416.3L501.8 421.2L500.4 426.2L498.9 431.2L497.4 436.2L495.7 441.1L494.0 446.0L492.2 450.9L490.3 455.8L488.3 460.7L486.3 465.5L484.1 470.3L481.9 475.1L479.7 479.8L477.4 484.5L475.1 489.2L472.7 493.9L470.3 498.6L467.8 503.2L465.4 507.8L462.9 512.3L460.4 516.9L457.9 521.4L455.4 525.8L452.8 530.3L450.3 534.7L447.8 539.1L445.3 543.4L442.7 547.8L440.2 552.2L437.7 556.5L435.2 560.8L432.7 565.1L430.2 569.3L427.7 573.5L425.4 577.6L423.1 581.7L420.9 585.8L418.7 589.9L416.6 593.9L414.6 597.9L412.6 601.8L410.7 605.8L409.0 609.7L407.2 613.6L405.6 617.5L404.1 621.3L402.7 625.2L401.4 629.0L400.2 632.8L399.1 636.6L398.1 640.4L397.2 644.1L396.4 647.9L395.7 651.6L395.2 655.4L394.8 659.1M515.5 375.9L515.4 381.0L515.1 386.1L514.8 391.2L514.4 396.3L514.1 401.3L513.8 406.4L513.4 411.5L512.8 416.6L512.2 421.7L511.5 426.8L510.7 431.9L509.8 436.9L508.8 442.0L507.7 447.1L506.5 452.1L505.3 457.1L503.8 462.2L502.3 467.1L500.6 472.1L498.9 477.1L497.1 482.0L495.3 486.9L493.3 491.8L491.3 496.7L489.2 501.5L487.1 506.4L484.9 511.2L482.6 516.0L480.3 520.7L477.9 525.5L475.5 530.2L473.1 534.8L470.6 539.5L468.1 544.1L465.6 548.8L463.0 553.4L460.5 558.0L457.9 562.6L455.3 567.1L452.6 571.6L449.9 576.1L447.2 580.5L444.5 584.9L441.9 589.2L439.2 593.5L436.6 597.7L434.0 602.0L431.4 606.2L428.9 610.3L426.5 614.5L424.0 618.6L421.7 622.7L419.4 626.8L417.1 630.8L414.9 634.8L412.8 638.8L410.8 642.7L408.9 646.6L407.0 650.6L405.2 654.4L403.6 658.3L402.0 662.1L400.5 666.0L399.2 669.8L397.9 673.6L396.7 677.3L395.7 681.1L394.8 684.8L393.9 688.6L393.2 692.3L392.6 696.0L392.2 699.7M516.7 416.3L516.9 421.4L517.0 426.5L517.0 431.6L516.9 436.7L516.6 441.9L516.3 447.0L515.9 452.1L515.3 457.2L514.6 462.3L513.7 467.4L512.8 472.5L511.8 477.6L510.6 482.7L509.4 487.8L508.1 492.8L506.7 497.8L505.2 502.9L503.6 507.9L501.9 512.9L500.1 517.8L498.3 522.8L496.3 527.7L494.3 532.6L492.3 537.5L490.1 542.4L488.0 547.3L485.9 552.2L483.7 557.0L481.4 561.9L479.0 566.7L476.6 571.5L474.1 576.2L471.5 580.9L468.8 585.5L466.1 590.1L463.3 594.7L460.6 599.3L457.8 603.8L455.0 608.3L452.2 612.7L449.4 617.1L446.6 621.5L443.9 625.9L441.1 630.2L438.4 634.5L435.7 638.7L433.0 643.0L430.4 647.2L427.8 651.3L425.2 655.5L422.7 659.6L420.3 663.6L417.9 667.7L415.6 671.7L413.3 675.7L411.1 679.7L409.0 683.6L407.0 687.5L405.1 691.4L403.3 695.3L401.5 699.2L399.9 703.0L398.3 706.8L396.9 710.6L395.6 714.4L394.3 718.1L393.2 721.9L392.2 725.6L391.4 729.3L390.6 733.0L390.0 736.7L389.5 740.4L389.1 744.0M519.1 456.6L519.2 461.8L519.2 466.9L519.1 472.0L518.8 477.2L518.5 482.3L518.1 487.5L517.5 492.6L516.9 497.7L516.1 502.9L515.3 508.0L514.3 513.1L513.3 518.2L512.1 523.3L510.8 528.4L509.5 533.5L508.0 538.5L506.6 543.6L505.2 548.7L503.7 553.7L502.1 558.8L500.3 563.8L498.5 568.8L496.6 573.8L494.4 578.7L492.1 583.6L489.7 588.5L487.3 593.4L484.8 598.2L482.3 603.0L479.7 607.7L477.1 612.5L474.4 617.2L471.6 621.8L468.9 626.5L466.1 631.1L463.3 635.7L460.4 640.2L457.6 644.8L454.7 649.2L451.8 653.7L449.0 658.1L446.1 662.5L443.2 666.9L440.4 671.2L437.6 675.5L434.8 679.7L432.0 684.0L429.3 688.1L426.6 692.3L424.0 696.4L421.4 700.6L418.9 704.6L416.5 708.7L414.1 712.7L411.7 716.7L409.5 720.7L407.3 724.6L405.2 728.5L403.2 732.4L401.3 736.3L399.5 740.1L397.7 743.9L396.1 747.7L394.6 751.5L393.4 755.2L392.4 758.9L391.5 762.6L390.8 766.3L390.2 770.0L389.7 773.7" stroke="#0D640D" stroke-width="1" fill="none" opacity="0.8"/>
<defs><linearGradient id="collar" gradientUnits="userSpaceOnUse" x1="0" y1="398" x2="0" y2="420"><stop offset="0" stop-color="#0E660E"/><stop offset="0.5" stop-color="#137E13"/><stop offset="0.8" stop-color="#1C9C1C"/><stop offset="1" stop-color="#22AE22"/></linearGradient></defs>
<path d="M380 396 L550 396 L550 406 Q464 428 380 406Z" fill="url(#collar)"/>
<path d="M410.8 420.3 Q413.0 411.3 415.1 420.3" stroke="#0F700F" stroke-width="2" fill="none" opacity="0.8"/>
<path d="M411.3 421.3 Q413.0 414.3 414.7 421.3" stroke="#3EDC3E" stroke-width="1" fill="none" opacity="0.6"/>
<path d="M415.2 422.6 Q421.0 413.6 426.9 422.6" stroke="#0F700F" stroke-width="2" fill="none" opacity="0.8"/>
<path d="M416.4 423.6 Q421.0 416.6 425.7 423.6" stroke="#3EDC3E" stroke-width="1" fill="none" opacity="0.6"/>
<path d="M427.0 424.3 Q435.7 415.3 444.3 424.3" stroke="#0F700F" stroke-width="2" fill="none" opacity="0.8"/>
<path d="M428.8 425.3 Q435.7 418.3 442.6 425.3" stroke="#3EDC3E" stroke-width="1" fill="none" opacity="0.6"/>
<path d="M444.5 425.2 Q454.6 416.2 464.7 425.2" stroke="#0F700F" stroke-width="2" fill="none" opacity="0.8"/>
<path d="M446.5 426.2 Q454.6 419.2 462.7 426.2" stroke="#3EDC3E" stroke-width="1" fill="none" opacity="0.6"/>
<path d="M465.0 425.1 Q475.0 416.1 485.1 425.1" stroke="#0F700F" stroke-width="2" fill="none" opacity="0.8"/>
<path d="M467.0 426.1 Q475.0 419.1 483.1 426.1" stroke="#3EDC3E" stroke-width="1" fill="none" opacity="0.6"/>
<path d="M485.3 424.2 Q493.8 415.2 502.3 424.2" stroke="#0F700F" stroke-width="2" fill="none" opacity="0.8"/>
<path d="M487.0 425.2 Q493.8 418.2 500.6 425.2" stroke="#3EDC3E" stroke-width="1" fill="none" opacity="0.6"/>
<path d="M502.5 422.4 Q508.1 413.4 513.7 422.4" stroke="#0F700F" stroke-width="2" fill="none" opacity="0.8"/>
<path d="M503.6 423.4 Q508.1 416.4 512.5 423.4" stroke="#3EDC3E" stroke-width="1" fill="none" opacity="0.6"/>
<path d="M513.8 420.1 Q515.6 411.1 517.5 420.1" stroke="#0F700F" stroke-width="2" fill="none" opacity="0.8"/>
<path d="M514.1 421.1 Q515.6 414.1 517.1 421.1" stroke="#3EDC3E" stroke-width="1" fill="none" opacity="0.6"/>
</g>
<path d="M381 754 A83.5 25 0 0 0 548 754 L533 744 A72 15 0 0 1 389 744Z" fill="url(#t1)"/>
<ellipse cx="421.1" cy="754.0" rx="10.6" ry="4" fill="#117511" opacity="0.55"/>
<ellipse cx="421.1" cy="751.5" rx="10.6" ry="4.2" fill="#3CD83C"/>
<ellipse cx="423.8" cy="750.5" rx="4.8" ry="1.6" fill="#80F880" opacity="0.7"/>
<ellipse cx="447.0" cy="756.2" rx="12.5" ry="4" fill="#117511" opacity="0.55"/>
<ellipse cx="447.0" cy="753.7" rx="12.5" ry="4.2" fill="#3CD83C"/>
<ellipse cx="450.1" cy="752.7" rx="5.6" ry="1.6" fill="#80F880" opacity="0.7"/>
<ellipse cx="475.1" cy="756.2" rx="12.5" ry="4" fill="#117511" opacity="0.55"/>
<ellipse cx="475.1" cy="753.7" rx="12.5" ry="4.2" fill="#3CD83C"/>
<ellipse cx="478.2" cy="752.7" rx="5.6" ry="1.6" fill="#80F880" opacity="0.7"/>
<ellipse cx="501.0" cy="754.0" rx="10.6" ry="4" fill="#117511" opacity="0.55"/>
<ellipse cx="501.0" cy="751.5" rx="10.6" ry="4.2" fill="#3CD83C"/>
<ellipse cx="503.6" cy="750.5" rx="4.8" ry="1.6" fill="#80F880" opacity="0.7"/>
<ellipse cx="520.8" cy="749.8" rx="7.1" ry="4" fill="#117511" opacity="0.55"/>
<ellipse cx="520.8" cy="747.3" rx="7.1" ry="4.2" fill="#3CD83C"/>
<ellipse cx="522.6" cy="746.3" rx="3.2" ry="1.6" fill="#80F880" opacity="0.7"/>
<ellipse cx="531.5" cy="744.4" rx="2.5" ry="4" fill="#117511" opacity="0.55"/>
<ellipse cx="531.5" cy="741.9" rx="2.5" ry="4.2" fill="#3CD83C"/>
<ellipse cx="532.1" cy="740.9" rx="1.1" ry="1.6" fill="#80F880" opacity="0.7"/>
<ellipse cx="390.5" cy="744.4" rx="2.5" ry="4" fill="#117511" opacity="0.55"/>
<ellipse cx="390.5" cy="741.9" rx="2.5" ry="4.2" fill="#3CD83C"/>
<ellipse cx="391.1" cy="740.9" rx="1.1" ry="1.6" fill="#80F880" opacity="0.7"/>
<ellipse cx="401.3" cy="749.8" rx="7.1" ry="4" fill="#117511" opacity="0.55"/>
<ellipse cx="401.3" cy="747.3" rx="7.1" ry="4.2" fill="#3CD83C"/>
<ellipse cx="403.0" cy="746.3" rx="3.2" ry="1.6" fill="#80F880" opacity="0.7"/>
<defs><linearGradient id="disc" x1="0" y1="0" x2="1" y2="0"><stop offset="0" stop-color="#1E9F1E"/><stop offset="0.35" stop-color="#24B424"/><stop offset="0.72" stop-color="#5AEF5A"/><stop offset="0.85" stop-color="#36D836"/><stop offset="1" stop-color="#26B826"/></linearGradient></defs>
<ellipse cx="464.5" cy="391" rx="68" ry="15" fill="url(#disc)"/>
<path d="M397 394 A68 13 0 0 0 532 394" stroke="#0E6E0E" stroke-width="2.5" fill="none" opacity="0.8"/>
<path d="M397 392 A68 14 0 0 0 532 392" stroke="#117511" stroke-width="1.5" fill="none" opacity="0.7"/>
<path d="M392.7 365 L392.7 377 A71 18.5 0 0 0 534.7 377 L534.7 365Z" fill="url(#disc)"/>
<path d="M394 384 A70 14.5 0 0 0 533 384" stroke="#0f6f0f" stroke-width="1.2" fill="none"/>
<ellipse cx="463.7" cy="364.5" rx="71" ry="18.5" fill="#20A820"/>
<defs><linearGradient id="rw" x1="0" y1="0" x2="0.3" y2="1"><stop offset="0" stop-color="#1A961A"/><stop offset="0.5" stop-color="#20A820"/><stop offset="1" stop-color="#30C430"/></linearGradient><linearGradient id="lw" x1="0.95" y1="0.1" x2="0.1" y2="0.95"><stop offset="0" stop-color="#178E17"/><stop offset="0.4" stop-color="#1FA61F"/><stop offset="0.75" stop-color="#2CBE2C"/><stop offset="1" stop-color="#3AD43A"/></linearGradient><radialGradient id="body" cx="0.3" cy="0.3" r="0.8"><stop offset="0" stop-color="#3ADA3A"/><stop offset="0.5" stop-color="#26BA26"/><stop offset="1" stop-color="#178E17"/></radialGradient><radialGradient id="belly" cx="0.5" cy="0.35" r="0.6"><stop offset="0" stop-color="#40E040"/><stop offset="0.6" stop-color="#28BE28"/><stop offset="1" stop-color="#1A981A"/></radialGradient><radialGradient id="rleg" cx="0.55" cy="0.3" r="0.8"><stop offset="0" stop-color="#40E040"/><stop offset="0.55" stop-color="#28C028"/><stop offset="1" stop-color="#168C16"/></radialGradient><radialGradient id="lleg" cx="0.35" cy="0.3" r="0.8"><stop offset="0" stop-color="#42E242"/><stop offset="0.55" stop-color="#28BE28"/><stop offset="1" stop-color="#158A15"/></radialGradient><radialGradient id="foot" cx="0.5" cy="0.3" r="0.8"><stop offset="0" stop-color="#48E848"/><stop offset="0.6" stop-color="#2ECA2E"/><stop offset="1" stop-color="#1C9C1C"/></radialGradient><radialGradient id="arm" cx="0.4" cy="0.35" r="0.9"><stop offset="0" stop-color="#52EE52"/><stop offset="0.45" stop-color="#30CE30"/><stop offset="1" stop-color="#1A9A1A"/></radialGradient><radialGradient id="head" cx="0.6" cy="0.4" r="0.75"><stop offset="0" stop-color="#50EE50"/><stop offset="0.5" stop-color="#2ED02E"/><stop offset="1" stop-color="#1A9A1A"/></radialGradient><filter id="hb" x="-50%" y="-50%" width="200%" height="200%"><feGaussianBlur stdDeviation="2.2"/></filter></defs>
<path d="M467.0 197.0C467.4 190.5 484.3 187.2 488.6 183.9C492.9 180.6 500.9 171.7 504.2 168.4C507.5 165.1 513.6 156.3 517.2 155.4C520.8 154.5 532.0 158.2 535.3 160.9C538.6 163.6 544.1 173.0 545.7 178.7C547.3 184.4 548.5 201.7 548.8 209.9C549.1 218.1 548.7 239.7 548.3 248.8C547.9 257.9 546.5 279.2 545.7 287.7C544.9 296.2 542.9 315.3 541.8 321.5C540.7 327.7 538.2 339.8 536.6 341.0C535.0 342.2 530.2 334.7 528.0 332.0C525.8 329.3 519.6 321.0 518.0 318.0C516.4 315.0 513.8 309.3 514.0 306.0C514.2 302.7 521.0 296.5 520.0 290.0C519.0 283.5 509.1 255.8 505.0 250.0C500.9 244.2 489.4 246.2 485.0 240.0C480.6 233.8 466.6 203.5 467.0 197.0Z" fill="url(#rw)"/>
<path d="M517 157 C540 165 549 195 548 250 C547 290 543 320 537 340" stroke="#3AD23A" stroke-width="2.5" fill="none"/>
<path d="M516 160 C530 175 536 210 535 260 C534 295 532 320 533 335" stroke="#168816" stroke-width="1" fill="none" opacity="0.7"/>
<path d="M470 196 C485 186 500 172 516 157" stroke="#3AD03A" stroke-width="2.2" fill="none"/>
<path d="M423.3 170.8C422.8 170.3 408.6 171.7 404.2 172.9C399.8 174.1 383.9 180.2 378.8 183.0C373.7 185.8 358.0 196.7 353.4 200.8C348.8 204.9 336.7 218.6 333.1 223.7C329.6 228.8 320.4 245.5 317.9 251.6C315.4 257.7 309.0 278.3 307.7 284.6C306.4 290.9 304.8 309.2 304.7 315.0C304.6 320.8 305.7 337.3 306.4 343.0C307.1 348.7 309.5 371.5 311.5 372.2C313.5 372.9 323.1 353.7 326.0 350.0C328.9 346.3 338.6 336.2 340.7 335.4C342.8 334.6 345.7 340.6 347.0 342.0C348.3 343.4 352.4 349.8 353.4 349.4C354.4 349.0 356.0 339.8 357.0 338.0C358.0 336.2 362.3 331.1 363.6 331.6C364.9 332.1 368.7 340.6 370.0 343.0C371.3 345.4 374.9 357.0 376.3 355.2C377.7 353.4 382.3 330.5 384.0 325.0C385.7 319.5 391.7 306.5 393.0 300.0C394.3 293.5 396.3 266.2 397.0 260.0C397.7 253.8 398.2 242.6 400.0 238.0C401.8 233.4 412.1 217.5 415.0 214.0C417.9 210.5 428.8 204.3 428.8 203.0C428.8 201.7 417.6 201.8 415.4 200.5C413.2 199.2 407.3 192.3 406.7 190.0C406.1 187.7 407.6 179.8 409.3 177.9C411.0 176.0 423.8 171.3 423.3 170.8Z" fill="url(#lw)"/>
<path d="M423 171 C395 172 360 190 335 222 C315 250 305 290 305 320 C305 345 308 360 311 371" stroke="#3ACE3A" stroke-width="3.5" fill="none"/>
<path d="M420 174 C393 176 362 193 338 224 C319 252 309 290 309 320 C309 340 310 352 312 362" stroke="#158815" stroke-width="0.9" fill="none" opacity="0.8"/>
<path d="M423 171 C410 172 404 182 407 191 C410 198 418 202 428 204" stroke="#36CA36" stroke-width="3" fill="none"/>
<path d="M412 178 C380 205 350 250 343 300 C340 320 340 330 341 336" stroke="#168A16" stroke-width="1" fill="none" opacity="0.8"/>
<path d="M414 184 C395 220 370 270 365 310 C363 322 363 328 364 331" stroke="#168A16" stroke-width="1" fill="none" opacity="0.8"/>
<path d="M408 178 C380 195 340 240 320 300 C312 330 311 350 312 368" stroke="#158515" stroke-width="1" fill="none" opacity="0.6"/>
<path d="M409 178 C405 190 410 198 428 204" stroke="#127A12" stroke-width="1.2" fill="none"/>
<path d="M404.0 232.0C405.3 226.7 409.8 222.8 414.0 218.0C418.2 213.2 424.7 207.5 429.0 203.0C433.3 198.5 436.8 194.0 440.0 191.0C443.2 188.0 445.0 185.7 448.0 185.0C451.0 184.3 454.2 184.8 458.0 187.0C461.8 189.2 466.9 193.5 470.6 198.2C474.3 202.9 475.9 206.4 480.0 215.0C484.1 223.6 491.7 240.8 495.0 250.0C498.3 259.2 499.5 261.7 500.0 270.0C500.5 278.3 500.0 292.0 498.0 300.0C496.0 308.0 491.8 315.0 488.0 318.0C484.2 321.0 479.7 318.0 475.0 318.0C470.3 318.0 465.8 322.7 460.0 318.0C454.2 313.3 446.7 298.3 440.0 290.0C433.3 281.7 425.7 274.7 420.0 268.0C414.3 261.3 408.7 256.0 406.0 250.0C403.3 244.0 402.7 237.3 404.0 232.0Z" fill="url(#body)"/>
<path d="M440.0 250.0C442.0 247.0 455.7 249.3 462.0 252.0C468.3 254.7 476.7 262.0 478.0 266.0C479.3 270.0 474.7 275.3 470.0 276.0C465.3 276.7 455.0 274.3 450.0 270.0C445.0 265.7 438.0 253.0 440.0 250.0Z" fill="#137E13" opacity="0.55"/>
<path d="M452.0 270.0C456.3 265.0 471.0 263.3 476.0 268.0C481.0 272.7 482.0 289.7 482.0 298.0C482.0 306.3 480.0 314.3 476.0 318.0C472.0 321.7 462.3 323.3 458.0 320.0C453.7 316.7 451.0 306.3 450.0 298.0C449.0 289.7 447.7 275.0 452.0 270.0Z" fill="url(#belly)"/>
<path d="M474.0 300.0C475.3 295.0 478.8 295.3 480.0 300.0C481.2 304.7 482.3 323.0 481.0 328.0C479.7 333.0 473.2 334.7 472.0 330.0C470.8 325.3 472.7 305.0 474.0 300.0Z" fill="#22AA22"/>
<path d="M503.0 250.0C506.4 247.8 513.8 255.3 517.6 259.0C521.4 262.7 524.7 267.3 525.6 272.2C526.5 277.1 525.8 281.6 522.9 288.2C520.0 294.8 512.3 305.6 508.3 312.0C504.3 318.4 500.1 321.9 499.0 326.6C497.9 331.3 501.7 336.1 502.0 340.0C502.3 343.9 502.3 348.7 501.0 350.0C499.7 351.3 495.8 351.3 494.0 348.0C492.2 344.7 490.2 338.0 490.0 330.0C489.8 322.0 491.8 309.7 493.0 300.0C494.2 290.3 495.3 280.3 497.0 272.0C498.7 263.7 499.6 252.2 503.0 250.0Z" fill="url(#rleg)"/>
<path d="M391.6 274.9C393.6 270.9 398.3 270.7 402.2 270.9C406.1 271.1 411.4 272.0 415.0 276.0C418.6 280.0 422.3 288.2 424.0 295.0C425.7 301.8 424.7 311.3 425.0 317.0C425.3 322.7 426.8 326.0 426.0 329.0C425.2 332.0 422.0 334.5 420.0 335.0C418.0 335.5 417.7 335.4 414.0 332.0C410.3 328.6 401.9 320.9 398.0 314.7C394.1 308.5 391.4 301.4 390.3 294.8C389.2 288.2 389.6 278.9 391.6 274.9Z" fill="url(#lleg)"/>
<path d="M412.0 330.0C413.7 327.6 421.6 329.6 424.0 332.0C426.4 334.4 428.5 343.7 430.0 348.0C431.5 352.3 435.5 361.5 435.0 364.0C434.5 366.5 428.7 366.7 426.0 367.0C423.3 367.3 417.0 368.3 415.0 366.0C413.0 363.7 411.4 354.8 411.0 350.0C410.6 345.2 410.3 332.4 412.0 330.0Z" fill="url(#foot)"/>
<path d="M410.0 255.0C413.7 253.2 430.0 251.2 436.0 255.0C442.0 258.8 443.3 271.2 446.0 278.0C448.7 284.8 449.8 287.5 452.0 296.0C454.2 304.5 459.5 322.5 459.5 329.0C459.5 335.5 454.6 337.2 452.0 335.0C449.4 332.8 448.0 323.5 444.0 316.0C440.0 308.5 433.0 298.3 428.0 290.0C423.0 281.7 417.0 271.8 414.0 266.0C411.0 260.2 406.3 256.8 410.0 255.0Z" fill="url(#arm)"/>
<path d="M475.0 281.5C478.3 280.9 490.4 281.6 493.8 288.2C497.2 294.8 495.5 313.9 495.5 321.0C495.5 328.1 496.6 329.0 494.0 331.0C491.4 333.0 483.8 333.3 480.0 333.0C476.2 332.7 471.4 333.2 471.0 329.0C470.6 324.8 477.0 314.2 477.5 308.0C478.0 301.8 474.4 296.4 474.0 292.0C473.6 287.6 471.7 282.1 475.0 281.5Z" fill="url(#arm)"/>
<path d="M453 330 L453 347" stroke="#30CE30" stroke-width="10" stroke-linecap="round"/>
<path d="M453.0 347.0 Q448.5 354.0 442.0 365.0" stroke="#137E13" stroke-width="6.199999999999999" stroke-linecap="round" fill="none"/>
<path d="M453.0 347.0 Q451.0 355.5 447.0 368.0" stroke="#137E13" stroke-width="6.199999999999999" stroke-linecap="round" fill="none"/>
<path d="M453.0 347.0 Q454.0 356.2 453.0 369.5" stroke="#137E13" stroke-width="6.199999999999999" stroke-linecap="round" fill="none"/>
<path d="M453.0 347.0 Q458.0 355.5 461.0 368.0" stroke="#137E13" stroke-width="6.199999999999999" stroke-linecap="round" fill="none"/>
<path d="M453.0 347.0 Q461.5 350.5 468.0 358.0" stroke="#137E13" stroke-width="6.199999999999999" stroke-linecap="round" fill="none"/>
<path d="M453.0 347.0 Q448.5 354.0 442.0 365.0" stroke="#36D636" stroke-width="4.8" stroke-linecap="round" fill="none"/>
<path d="M453.6 347.0 Q449.1 354.0 442.6 364.0" stroke="#7AF57A" stroke-width="1" stroke-linecap="round" fill="none" opacity="0.6"/>
<path d="M453.0 347.0 Q451.0 355.5 447.0 368.0" stroke="#36D636" stroke-width="4.8" stroke-linecap="round" fill="none"/>
<path d="M453.6 347.0 Q451.6 355.5 447.6 367.0" stroke="#7AF57A" stroke-width="1" stroke-linecap="round" fill="none" opacity="0.6"/>
<path d="M453.0 347.0 Q454.0 356.2 453.0 369.5" stroke="#36D636" stroke-width="4.8" stroke-linecap="round" fill="none"/>
<path d="M453.6 347.0 Q454.6 356.2 453.6 368.5" stroke="#7AF57A" stroke-width="1" stroke-linecap="round" fill="none" opacity="0.6"/>
<path d="M453.0 347.0 Q458.0 355.5 461.0 368.0" stroke="#36D636" stroke-width="4.8" stroke-linecap="round" fill="none"/>
<path d="M453.6 347.0 Q458.6 355.5 461.6 367.0" stroke="#7AF57A" stroke-width="1" stroke-linecap="round" fill="none" opacity="0.6"/>
<path d="M453.0 347.0 Q461.5 350.5 468.0 358.0" stroke="#36D636" stroke-width="4.8" stroke-linecap="round" fill="none"/>
<path d="M453.6 347.0 Q462.1 350.5 468.6 357.0" stroke="#7AF57A" stroke-width="1" stroke-linecap="round" fill="none" opacity="0.6"/>
<ellipse cx="453" cy="347" rx="9" ry="8" fill="#34D234"/>
<ellipse cx="455" cy="345" rx="4" ry="3" fill="#70F070" opacity="0.5"/>
<path d="M490 327 L489 345" stroke="#30CE30" stroke-width="10" stroke-linecap="round"/>
<path d="M489.0 345.0 Q483.5 349.0 476.0 357.0" stroke="#137E13" stroke-width="6.199999999999999" stroke-linecap="round" fill="none"/>
<path d="M489.0 345.0 Q486.5 353.5 482.0 366.0" stroke="#137E13" stroke-width="6.199999999999999" stroke-linecap="round" fill="none"/>
<path d="M489.0 345.0 Q490.0 353.5 489.0 366.0" stroke="#137E13" stroke-width="6.199999999999999" stroke-linecap="round" fill="none"/>
<path d="M489.0 345.0 Q493.5 351.0 496.0 361.0" stroke="#137E13" stroke-width="6.199999999999999" stroke-linecap="round" fill="none"/>
<path d="M489.0 345.0 Q496.5 346.0 502.0 351.0" stroke="#137E13" stroke-width="6.199999999999999" stroke-linecap="round" fill="none"/>
<path d="M489.0 345.0 Q483.5 349.0 476.0 357.0" stroke="#36D636" stroke-width="4.8" stroke-linecap="round" fill="none"/>
<path d="M489.6 345.0 Q484.1 349.0 476.6 356.0" stroke="#7AF57A" stroke-width="1" stroke-linecap="round" fill="none" opacity="0.6"/>
<path d="M489.0 345.0 Q486.5 353.5 482.0 366.0" stroke="#36D636" stroke-width="4.8" stroke-linecap="round" fill="none"/>
<path d="M489.6 345.0 Q487.1 353.5 482.6 365.0" stroke="#7AF57A" stroke-width="1" stroke-linecap="round" fill="none" opacity="0.6"/>
<path d="M489.0 345.0 Q490.0 353.5 489.0 366.0" stroke="#36D636" stroke-width="4.8" stroke-linecap="round" fill="none"/>
<path d="M489.6 345.0 Q490.6 353.5 489.6 365.0" stroke="#7AF57A" stroke-width="1" stroke-linecap="round" fill="none" opacity="0.6"/>
<path d="M489.0 345.0 Q493.5 351.0 496.0 361.0" stroke="#36D636" stroke-width="4.8" stroke-linecap="round" fill="none"/>
<path d="M489.6 345.0 Q494.1 351.0 496.6 360.0" stroke="#7AF57A" stroke-width="1" stroke-linecap="round" fill="none" opacity="0.6"/>
<path d="M489.0 345.0 Q496.5 346.0 502.0 351.0" stroke="#36D636" stroke-width="4.8" stroke-linecap="round" fill="none"/>
<path d="M489.6 345.0 Q497.1 346.0 502.6 350.0" stroke="#7AF57A" stroke-width="1" stroke-linecap="round" fill="none" opacity="0.6"/>
<ellipse cx="489" cy="345" rx="9" ry="8" fill="#34D234"/>
<ellipse cx="491" cy="343" rx="4" ry="3" fill="#70F070" opacity="0.5"/>
<path d="M421 345 L415.5 365" stroke="#34CC34" stroke-width="4" stroke-linecap="round" fill="none"/>
<path d="M421 345 L424.8 367" stroke="#34CC34" stroke-width="4" stroke-linecap="round" fill="none"/>
<path d="M421 345 L433 364" stroke="#34CC34" stroke-width="4" stroke-linecap="round" fill="none"/>
<path d="M441.6 197.0C442.5 195.9 454.1 206.4 456.0 208.0C457.9 209.6 469.1 221.4 470.6 221.4C472.1 221.4 477.4 209.6 478.7 208.6C480.0 207.6 488.9 206.0 490.3 206.3C491.7 206.6 498.9 212.8 499.6 213.3C500.3 213.8 499.8 216.1 500.8 214.4C501.8 212.7 513.7 188.5 514.7 187.8C515.7 187.1 516.6 201.2 516.4 204.0C516.2 206.8 512.0 227.1 511.2 229.5C510.4 231.9 505.0 238.2 504.2 240.0C503.4 241.8 500.2 254.1 499.6 256.2C499.0 258.3 495.6 270.1 495.0 271.3C494.4 272.5 491.4 274.1 490.3 273.6C489.2 273.1 480.4 264.7 478.7 263.2C477.0 261.7 466.6 252.2 464.8 250.4C463.0 248.6 453.5 237.7 452.0 236.0C450.5 234.3 443.5 227.5 442.8 224.9C442.1 222.3 440.7 198.1 441.6 197.0Z" fill="url(#head)"/>
<path d="M444.0 203.0C446.5 201.5 458.0 210.8 462.0 215.0C466.0 219.2 468.3 223.8 468.0 228.0C467.7 232.2 463.5 240.7 460.0 240.0C456.5 239.3 449.7 230.2 447.0 224.0C444.3 217.8 441.5 204.5 444.0 203.0Z" fill="#1E9E1E" opacity="0.65"/>
<path d="M513.0 193.0C514.5 192.7 513.2 206.8 512.0 212.0C510.8 217.2 507.5 223.7 506.0 224.0C504.5 224.3 501.8 219.2 503.0 214.0C504.2 208.8 511.5 193.3 513.0 193.0Z" fill="#1E9E1E" opacity="0.6"/>
<path d="M477 232 L493 237 M497 237 L508 230" stroke="#127812" stroke-width="1.5" fill="none"/>
<path d="M481 236 L491 240 M500 240 L506 235" stroke="#70F070" stroke-width="1.2" fill="none" opacity="0.7"/>
<path d="M486.0 252.0C487.5 249.8 495.0 248.2 497.0 250.0C499.0 251.8 498.8 259.7 498.0 263.0C497.2 266.3 493.7 270.0 492.0 270.0C490.3 270.0 489.0 266.0 488.0 263.0C487.0 260.0 484.5 254.2 486.0 252.0Z" fill="#137E13"/>
<path d="M488.0 256.0C488.7 254.2 493.8 254.0 495.0 255.0C496.2 256.0 495.7 260.2 495.0 262.0C494.3 263.8 492.2 267.0 491.0 266.0C489.8 265.0 487.3 257.8 488.0 256.0Z" fill="#40D040" opacity="0.6"/>
<ellipse cx="485" cy="240" rx="4" ry="2.2" fill="#158A15" opacity="0.8" transform="rotate(20 485 240)"/>
<ellipse cx="503" cy="239" rx="3.2" ry="2" fill="#158A15" opacity="0.8" transform="rotate(-25 503 239)"/>
<path d="M495 236 L494 248" stroke="#6CF06C" stroke-width="2" opacity="0.6"/>
<path d="M441.6 197 L471 222" stroke="#127812" stroke-width="1.2" opacity="0.7"/>
<path d="M443 199 L469 220" stroke="#70F070" stroke-width="1" opacity="0.5"/>
<ellipse cx="478" cy="250" rx="5" ry="7" fill="#5AEC5A" opacity="0.35" filter="url(#hb)"/>
<path d="M443 225 C455 240 475 258 490 273" stroke="#127812" stroke-width="1.2" fill="none" opacity="0.6"/>
<ellipse cx="420" cy="232" rx="10.4" ry="7.199999999999999" fill="#66F266" opacity="0.45" filter="url(#hb)"/>
<ellipse cx="430" cy="262" rx="3.9000000000000004" ry="10.799999999999999" fill="#66F266" opacity="0.45" filter="url(#hb)"/>
<ellipse cx="444" cy="302" rx="3.9000000000000004" ry="12.0" fill="#66F266" opacity="0.5" filter="url(#hb)"/>
<ellipse cx="464" cy="288" rx="6.5" ry="9.6" fill="#66F266" opacity="0.4" filter="url(#hb)"/>
<ellipse cx="519" cy="270" rx="3.9000000000000004" ry="10.799999999999999" fill="#66F266" opacity="0.45" filter="url(#hb)"/>
<ellipse cx="400" cy="282" rx="5.2" ry="8.4" fill="#66F266" opacity="0.4" filter="url(#hb)"/>
<ellipse cx="488" cy="305" rx="3.25" ry="10.799999999999999" fill="#66F266" opacity="0.45" filter="url(#hb)"/>
<ellipse cx="492" cy="220" rx="7.800000000000001" ry="6.0" fill="#66F266" opacity="0.45" filter="url(#hb)"/>
<ellipse cx="455" cy="196" rx="7.800000000000001" ry="4.8" fill="#66F266" opacity="0.35" filter="url(#hb)"/>
<ellipse cx="410" cy="312" rx="3.9000000000000004" ry="7.199999999999999" fill="#66F266" opacity="0.35" filter="url(#hb)"/>
<ellipse cx="456" cy="352" rx="5.2" ry="7.199999999999999" fill="#66F266" opacity="0.4" filter="url(#hb)"/>
<ellipse cx="488" cy="350" rx="5.2" ry="7.199999999999999" fill="#66F266" opacity="0.4" filter="url(#hb)"/>
</svg>
</div>

<!-- right panel -->
<div id="rp">
<!-- canvas frame -->
<div class="a" style="left:6px;top:95px;width:912px;height:1px;background:#FFFFFF"></div>
<div class="a" style="left:915px;top:96px;width:3px;height:786px;background:linear-gradient(90deg,#FBF8EE,#FFFFFF)"></div>
<div class="a" style="left:918px;top:95px;width:1px;height:789px;background:#7C7A70"></div>
<div class="a" style="left:49px;top:882px;width:869px;height:2px;background:#8A887E"></div>
<div class="lbl" style="left:921px;top:110px">Print settings:</div>
<div class="lbl" style="left:944px;top:135px">Filament:</div>
<div class="lbl" style="left:953px;top:160px">Printer:</div>
<div class="combo" style="top:104px"><svg class="ico" style="left:6px;top:4px" width="16" height="16" viewBox="0 0 16 16"><defs><linearGradient id="gg2" x1="0" y1="0" x2="1" y2="1"><stop offset="0" stop-color="#EEEEEE"/><stop offset="1" stop-color="#BDBDBD"/></linearGradient></defs><path d="M13.19 5.90L15.46 6.55L15.46 9.45L13.19 10.10L13.15 10.19L14.30 12.25L12.25 14.30L10.19 13.15L10.10 13.19L9.45 15.46L6.55 15.46L5.90 13.19L5.81 13.15L3.75 14.30L1.70 12.25L2.85 10.19L2.81 10.10L0.54 9.45L0.54 6.55L2.81 5.90L2.85 5.81L1.70 3.75L3.75 1.70L5.81 2.85L5.90 2.81L6.55 0.54L9.45 0.54L10.10 2.81L10.19 2.85L12.25 1.70L14.30 3.75L13.15 5.81Z" fill="url(#gg2)" stroke="#858585" stroke-width="0.9"/><circle cx="8" cy="8" r="2.4" fill="#F4F1E6" stroke="#8A8A8A" stroke-width="0.9"/></svg><div class="tx" style="left:26px">- default -</div><div class="dd"><svg class="a" style="left:3px;top:6px" width="9" height="7"><path d="M1 1L4.5 4.5L8 1" stroke="#4D6185" stroke-width="2" fill="none"/></svg></div></div>
<div class="combo" style="top:129px"><div class="tx" style="left:26px">My Settings</div><div class="dd"><svg class="a" style="left:3px;top:6px" width="9" height="7"><path d="M1 1L4.5 4.5L8 1" stroke="#4D6185" stroke-width="2" fill="none"/></svg></div></div>
<div class="combo" style="top:154px"><svg class="ico" style="left:6px;top:4px" width="16" height="14"><rect x="3" y="1" width="10" height="5" fill="#E0E0E0" stroke="#888" rx="1"/><rect x="1" y="5" width="14" height="8" fill="#C8C8C8" stroke="#666" rx="2"/><rect x="3" y="8" width="10" height="2" fill="#999"/></svg><div class="tx" style="left:26px">My Settings</div><div class="dd"><svg class="a" style="left:3px;top:6px" width="9" height="7"><path d="M1 1L4.5 4.5L8 1" stroke="#4D6185" stroke-width="2" fill="none"/></svg></div></div>
<svg class="ico" style="left:1256px;top:108px" width="16" height="16" viewBox="0 0 16 16"><defs><linearGradient id="gg3" x1="0" y1="0" x2="1" y2="1"><stop offset="0" stop-color="#EEEEEE"/><stop offset="1" stop-color="#BDBDBD"/></linearGradient></defs><path d="M13.19 5.90L15.46 6.55L15.46 9.45L13.19 10.10L13.15 10.19L14.30 12.25L12.25 14.30L10.19 13.15L10.10 13.19L9.45 15.46L6.55 15.46L5.90 13.19L5.81 13.15L3.75 14.30L1.70 12.25L2.85 10.19L2.81 10.10L0.54 9.45L0.54 6.55L2.81 5.90L2.85 5.81L1.70 3.75L3.75 1.70L5.81 2.85L5.90 2.81L6.55 0.54L9.45 0.54L10.10 2.81L10.19 2.85L12.25 1.70L14.30 3.75L13.15 5.81Z" fill="url(#gg3)" stroke="#858585" stroke-width="0.9"/><circle cx="8" cy="8" r="2.4" fill="#F4F1E6" stroke="#8A8A8A" stroke-width="0.9"/></svg><svg class="ico" style="left:1256px;top:133px" width="16" height="16" viewBox="0 0 16 16"><defs><linearGradient id="gg4" x1="0" y1="0" x2="1" y2="1"><stop offset="0" stop-color="#EEEEEE"/><stop offset="1" stop-color="#BDBDBD"/></linearGradient></defs><path d="M13.19 5.90L15.46 6.55L15.46 9.45L13.19 10.10L13.15 10.19L14.30 12.25L12.25 14.30L10.19 13.15L10.10 13.19L9.45 15.46L6.55 15.46L5.90 13.19L5.81 13.15L3.75 14.30L1.70 12.25L2.85 10.19L2.81 10.10L0.54 9.45L0.54 6.55L2.81 5.90L2.85 5.81L1.70 3.75L3.75 1.70L5.81 2.85L5.90 2.81L6.55 0.54L9.45 0.54L10.10 2.81L10.19 2.85L12.25 1.70L14.30 3.75L13.15 5.81Z" fill="url(#gg4)" stroke="#858585" stroke-width="0.9"/><circle cx="8" cy="8" r="2.4" fill="#F4F1E6" stroke="#8A8A8A" stroke-width="0.9"/></svg><svg class="ico" style="left:1256px;top:158px" width="16" height="16" viewBox="0 0 16 16"><defs><linearGradient id="gg5" x1="0" y1="0" x2="1" y2="1"><stop offset="0" stop-color="#EEEEEE"/><stop offset="1" stop-color="#BDBDBD"/></linearGradient></defs><path d="M13.19 5.90L15.46 6.55L15.46 9.45L13.19 10.10L13.15 10.19L14.30 12.25L12.25 14.30L10.19 13.15L10.10 13.19L9.45 15.46L6.55 15.46L5.90 13.19L5.81 13.15L3.75 14.30L1.70 12.25L2.85 10.19L2.81 10.10L0.54 9.45L0.54 6.55L2.81 5.90L2.85 5.81L1.70 3.75L3.75 1.70L5.81 2.85L5.90 2.81L6.55 0.54L9.45 0.54L10.10 2.81L10.19 2.85L12.25 1.70L14.30 3.75L13.15 5.81Z" fill="url(#gg5)" stroke="#858585" stroke-width="0.9"/><circle cx="8" cy="8" r="2.4" fill="#F4F1E6" stroke="#8A8A8A" stroke-width="0.9"/></svg>
<div class="btn" style="left:1050px;top:179px;width:101px;height:28px"><svg class="ico" style="left:2px;top:3px" width="18" height="18" viewBox="0 0 18 18"><path d="M2 6 L9 3 L16 6 L16 13 L9 16 L2 13Z" fill="#E6E6E6" stroke="#A8A8A8" stroke-width="1"/><path d="M2 6 L9 9 L16 6 M9 9 L9 16" fill="none" stroke="#B8B8B8" stroke-width="1"/><ellipse cx="6.5" cy="4.5" rx="2.5" ry="1.5" fill="#F4F4F4" stroke="#AAA" stroke-width="0.8"/><ellipse cx="11.5" cy="4.5" rx="2.5" ry="1.5" fill="#F4F4F4" stroke="#AAA" stroke-width="0.8"/></svg><svg class="a" style="left:6px;top:11px" width="12" height="10"><path d="M1 3h5V0l5 5-5 5V7H1z" fill="#58B848" stroke="#3A8A2A" stroke-width="0.8"/></svg><div class="l" style="left:16px;top:7px">Export STL...</div></div>
<div class="btn" style="left:1153px;top:179px;width:118px;height:28px"><svg class="ico" style="left:3px;top:4px" width="16" height="16" viewBox="0 0 16 16"><defs><linearGradient id="gg6" x1="0" y1="0" x2="1" y2="1"><stop offset="0" stop-color="#EEEEEE"/><stop offset="1" stop-color="#BDBDBD"/></linearGradient></defs><path d="M13.19 5.90L15.46 6.55L15.46 9.45L13.19 10.10L13.15 10.19L14.30 12.25L12.25 14.30L10.19 13.15L10.10 13.19L9.45 15.46L6.55 15.46L5.90 13.19L5.81 13.15L3.75 14.30L1.70 12.25L2.85 10.19L2.81 10.10L0.54 9.45L0.54 6.55L2.81 5.90L2.85 5.81L1.70 3.75L3.75 1.70L5.81 2.85L5.90 2.81L6.55 0.54L9.45 0.54L10.10 2.81L10.19 2.85L12.25 1.70L14.30 3.75L13.15 5.81Z" fill="url(#gg6)" stroke="#858585" stroke-width="0.9"/><circle cx="8" cy="8" r="2.4" fill="#F4F1E6" stroke="#8A8A8A" stroke-width="0.9"/></svg><svg class="a" style="left:5px;top:11px" width="12" height="10"><path d="M1 3h5V0l5 5-5 5V7H1z" fill="#58B848" stroke="#3A8A2A" stroke-width="0.8"/></svg><div class="l" style="left:16px;top:7px">Export G-code...</div></div>
<!-- support group -->
<div class="a" style="left:922px;top:219px;width:350px;height:52px;border:1px solid #D0D0BF;border-radius:5px"></div>
<div class="a" style="left:928px;top:214px;padding:0 2px;background:#ECE9D8;color:#0046D5">Support material</div>
<div class="a" style="left:932px;top:237px;line-height:13px">Generate support<br>material:</div>
<div class="a" style="left:1249px;top:242px;width:13px;height:13px;border:1px solid #1C5180;background:linear-gradient(135deg,#DCDCD7,#FFFFFF)"><svg class="a" style="left:1px;top:1px" width="10" height="10"><path d="M2 4.5L4 7L8.5 2.5" stroke="#21A121" stroke-width="2" fill="none"/></svg></div>
<!-- info group -->
<div class="a" style="left:922px;top:811px;width:350px;height:92px;border:1px solid #D0D0BF;border-radius:5px"></div>
<div class="a" style="left:928px;top:805px;padding:0 2px;background:#ECE9D8;color:#0046D5">Info</div>
<div class="a" style="left:927px;top:825px">Object:</div>
<div class="combo" style="left:963px;top:821px;width:305px;height:21px"><div class="tx" style="left:2px;top:4px">Column Gargoyle.stl</div><div class="dd" style="height:17px"><svg class="a" style="left:3px;top:5px" width="9" height="7"><path d="M1 1L4.5 4.5L8 1" stroke="#4D6185" stroke-width="2" fill="none"/></svg></div></div>
<div class="a" style="left:927px;top:848px">Copies:</div><div class="a" style="left:979px;top:848px">1</div>
<div class="a" style="left:927px;top:867px">Volume:</div><div class="a" style="left:979px;top:867px">104541.11</div>
<div class="a" style="left:927px;top:886px">Materials:</div><div class="a" style="left:979px;top:886px">1</div>
<div class="a" style="left:1069px;top:848px">Size:</div><div class="a" style="left:1118px;top:848px">65.58 x 56.42 x 163.41</div>
<div class="a" style="left:1069px;top:867px">Facets:</div><div class="a" style="left:1118px;top:867px">3213922 (2 shells)</div>
<div class="a" style="left:1069px;top:886px">Manifold:</div><div class="a" style="left:1118px;top:886px">Yes</div>
<!-- bottom tabs -->
<div class="a" style="left:50px;top:883px;width:41px;height:19px;border:1px solid #8C8A80;border-top:none;border-right-width:2px;border-bottom-width:2px;background:#ECE9D8;border-radius:0 0 3px 3px"></div>
<div class="a" style="left:91px;top:883px;width:50px;height:19px;border:1px solid #8C8A80;border-top:none;border-right-width:2px;border-bottom-width:2px;background:#ECE9D8;border-radius:0 0 3px 3px"></div>
<div class="a" style="left:141px;top:883px;width:44px;height:19px;border:1px solid #8C8A80;border-top:none;border-right-width:2px;border-bottom-width:2px;background:#ECE9D8;border-radius:0 0 3px 3px"></div>
<div class="a" style="left:7px;top:882px;width:43px;height:22px;border-bottom:2px solid #8C8A80;border-right:1px solid #B8B6AA;background:#ECE9D8;border-radius:0 0 3px 3px"></div>
<div class="a" style="left:13px;top:890px">3D</div>
<div class="a" style="left:54px;top:887px">2D</div>
<div class="a" style="left:96px;top:887px">Preview</div>
<div class="a" style="left:146px;top:887px">Layers</div>
</div>
</body></html>
